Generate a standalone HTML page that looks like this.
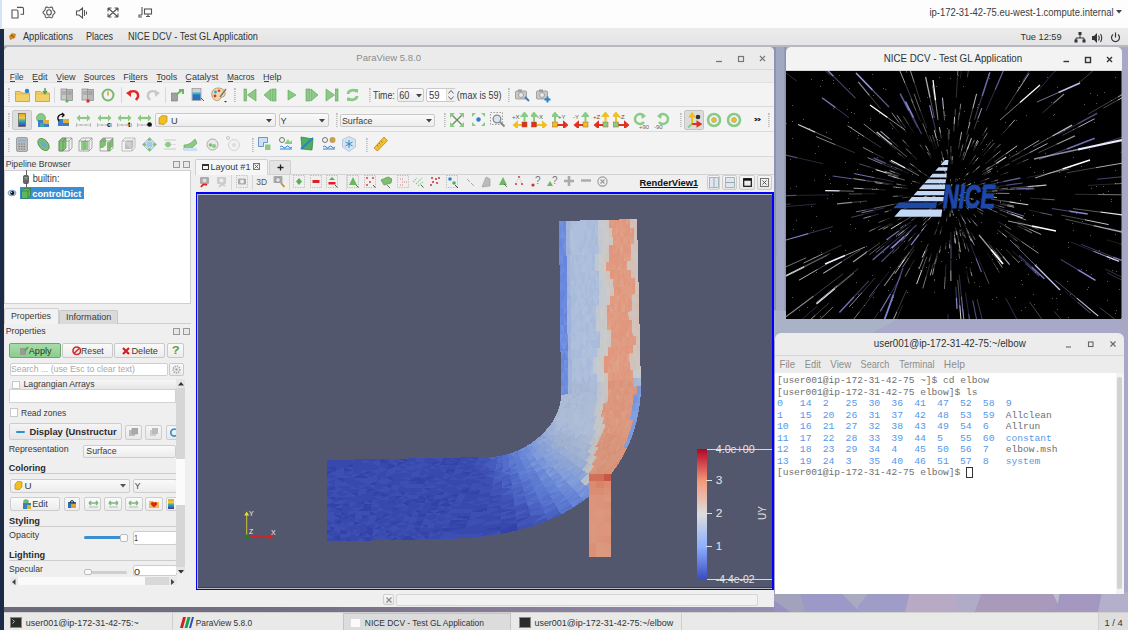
<!DOCTYPE html>
<html><head><meta charset="utf-8">
<style>
*{box-sizing:border-box;margin:0;padding:0}
html,body{width:1128px;height:630px;overflow:hidden;font-family:"Liberation Sans",sans-serif;}
body{position:relative;background:#a09cc0;}
.a{position:absolute;display:block}
.t{position:absolute;white-space:nowrap;line-height:1;transform-origin:0 0}
</style></head><body>
<svg class="a" style="left:0px;top:0px;" width="1128" height="630" viewBox="0 0 1128 630">
    <rect width="1128" height="630" fill="#a29ec2"/>
    <polygon points="774,40 800,40 790,200 774,260" fill="#a0a8c2"/><rect x="774" y="47" width="2" height="285" fill="#8c94ae"/><rect x="784.5" y="47" width="1.5" height="272" fill="#8c92ac"/>
    <polygon points="776,260 784.5,200 784.5,319 776,319" fill="#a4aac4"/>
    <polygon points="770,310 900,318 860,340 770,340" fill="#aab2c8"/>
    <polygon points="900,318 1128,315 1128,340 860,340" fill="#a8a8c8"/>
    <defs><linearGradient id="bstrip" x1="0" x2="1"><stop offset="0" stop-color="#6a6a78"/><stop offset="0.4" stop-color="#747084"/><stop offset="0.6" stop-color="#847a94"/><stop offset="1" stop-color="#948eb0"/></linearGradient></defs><rect x="0" y="590" width="775" height="22" fill="url(#bstrip)"/>
    <polygon points="774,592 800,592 812,612 774,612" fill="#a2a2bc"/>
    <polygon points="774,600 790,612 774,612" fill="#9890c0"/>
    <polygon points="800,592 840,592 860,612 805,612" fill="#9c98c8"/>
    <polygon points="840,592 870,592 858,606 860,612" fill="#aaaac0"/>
    <polygon points="870,592 910,592 905,612 858,612 858,606" fill="#a09cc8"/>
    <polygon points="910,592 955,592 955,612 905,612" fill="#b8aac4"/>
    <polygon points="955,592 982,592 975,612 955,612" fill="#b0acc8"/>
    <polygon points="982,592 1052,592 1058,604 1045,612 975,612" fill="#a99abc"/>
    <polygon points="1052,592 1060,592 1058,604" fill="#bcbccc"/>
    <polygon points="1060,592 1102,592 1098,612 1045,612 1058,604" fill="#a498c0"/>
    <polygon points="1102,592 1128,592 1128,612 1098,612" fill="#b4b0cc"/>
    <polygon points="1120,40 1128,40 1128,592 1120,592" fill="#a8a8c6"/>
    </svg>
<div class="a" style="left:0px;top:0px;width:1128px;height:28.2px;background:#fdfdfd;"></div>
<div class="a" style="left:0px;top:0px;width:2px;height:28.2px;background:#d4e3f6;"></div>
<svg class="a" style="left:10px;top:5px;" width="16" height="15" viewBox="0 0 16 15"><path d="M2,5 h4.5 q1.5,0 1.5,1.5 v6.5 h-6 z" fill="none" stroke="#555" stroke-width="1.1"/><path d="M7,2.4 h5 q1.5,0 1.5,1.5 v5.4 h-3" fill="none" stroke="#555" stroke-width="1.1"/></svg>
<svg class="a" style="left:42px;top:5px;" width="14" height="15" viewBox="0 0 14 15"><polygon points="12.95,7.40 12.84,7.91 12.54,8.38 12.12,8.77 11.67,9.10 11.29,9.40 11.03,9.72 10.88,10.12 10.81,10.60 10.75,11.15 10.62,11.71 10.36,12.20 9.98,12.55 9.48,12.71 8.92,12.69 8.37,12.52 7.86,12.30 7.41,12.12 7.00,12.05 6.59,12.12 6.14,12.30 5.63,12.52 5.08,12.69 4.52,12.71 4.03,12.55 3.64,12.20 3.38,11.71 3.25,11.15 3.19,10.60 3.12,10.12 2.97,9.72 2.71,9.40 2.33,9.10 1.88,8.77 1.46,8.38 1.16,7.91 1.05,7.40 1.16,6.89 1.46,6.42 1.88,6.03 2.33,5.70 2.71,5.40 2.97,5.08 3.12,4.68 3.19,4.20 3.25,3.65 3.38,3.09 3.64,2.60 4.02,2.25 4.52,2.09 5.08,2.11 5.63,2.28 6.14,2.50 6.59,2.68 7.00,2.75 7.41,2.68 7.86,2.50 8.37,2.28 8.92,2.11 9.48,2.09 9.98,2.25 10.36,2.60 10.62,3.09 10.75,3.65 10.81,4.20 10.88,4.68 11.03,5.07 11.29,5.40 11.67,5.70 12.12,6.03 12.54,6.42 12.84,6.89" fill="none" stroke="#555" stroke-width="1.1"/><ellipse cx="7" cy="7.4" rx="2.3" ry="2.6" fill="none" stroke="#555" stroke-width="1.1"/></svg>
<svg class="a" style="left:75px;top:7px;" width="13" height="12" viewBox="0 0 13 12"><path d="M1.5,4 h2.5 l3.5,-3 v10 l-3.5,-3 h-2.5 z" fill="none" stroke="#555" stroke-width="1.1"/><path d="M9.5,3 v6 M11.5,4.5 v3" fill="none" stroke="#555" stroke-width="1.1"/></svg>
<svg class="a" style="left:106px;top:6px;" width="14" height="13" viewBox="0 0 14 13"><path d="M2,2 L12,11 M12,2 L2,11 M2,2 h3.5 M2,2 v3.5 M12,2 h-3.5 M12,2 v3.5 M2,11 h3.5 M2,11 v-3.5 M12,11 h-3.5 M12,11 v-3.5" fill="none" stroke="#555" stroke-width="1.1"/></svg>
<svg class="a" style="left:138px;top:6px;" width="15" height="12" viewBox="0 0 15 12"><path d="M4,1 v8 M4,9 h-3 v2 h3" fill="none" stroke="#555" stroke-width="1.1"/><rect x="6.5" y="3" width="7" height="5" fill="none" stroke="#555" stroke-width="1.1"/><path d="M10,8 v2.5 M8,10.5 h4" fill="none" stroke="#555" stroke-width="1.1"/></svg>
<svg class="a" style="left:1116px;top:10px;" width="6" height="4" viewBox="0 0 6 4"><path d="M0,0 h6 l-3,3.5 z" fill="#444"/></svg>
<div class="a" style="left:0px;top:28.2px;width:1128px;height:17.2px;background:linear-gradient(#ececec,#e4e4e4);"></div>
<div class="a" style="left:0px;top:45.4px;width:1128px;height:1.2px;background:#b8b8c0;"></div>
<div class="a" style="left:0px;top:29px;width:4px;height:601px;background:#1b2a45;"></div>
<svg class="a" style="left:8px;top:32px;" width="9" height="9" viewBox="0 0 9 9"><path d="M2,8 L1,4 L4,1 L8,2 L7,6 z" fill="#d2872a"/><path d="M3,3 L6,5" stroke="#8a4a10" stroke-width="1"/></svg>
<svg class="a" style="left:1074px;top:32px;" width="12" height="11" viewBox="0 0 12 11"><rect x="4.5" y="0" width="3" height="3" fill="#333"/><path d="M6,3 v3 M2,6 h8 M2,6 v2 M10,6 v2" stroke="#333" stroke-width="1"/><rect x="0.5" y="7.5" width="3" height="3" fill="#333"/><rect x="8.5" y="7.5" width="3" height="3" fill="#333"/></svg>
<svg class="a" style="left:1092px;top:33px;" width="11" height="10" viewBox="0 0 11 10"><path d="M0,3 h2 l3,-3 v10 l-3,-3 h-2 z" fill="#333"/><path d="M6.5,2.5 q1.5,2.5 0,5 M8.5,1 q2.5,4 0,8" fill="none" stroke="#333" stroke-width="1.1"/></svg>
<svg class="a" style="left:1110px;top:32px;" width="11" height="11" viewBox="0 0 11 11"><path d="M3,2.5 A4,4 0 1 0 8,2.5" fill="none" stroke="#333" stroke-width="1.2"/><path d="M5.5,0.5 v5" stroke="#333" stroke-width="1.2"/></svg>
<div class="a" style="left:4px;top:46.6px;width:770px;height:560.4px;background:#efefef;border-radius:5px 5px 0 0"></div>
<div class="a" style="left:4px;top:46.6px;width:770px;height:22.4px;background:#ebebeb;border-radius:5px 5px 0 0"></div>
<div class="a" style="left:4px;top:69px;width:770px;height:1px;background:#d9d9d9;"></div>
<svg class="a" style="left:715px;top:54px;" width="56" height="10" viewBox="0 0 56 10"><path d="M1,7.5 h6" stroke="#777" stroke-width="1.3"/><rect x="23.5" y="2.5" width="5" height="5" fill="none" stroke="#777" stroke-width="1.2"/><path d="M45,2 l5,5 M50,2 l-5,5" stroke="#777" stroke-width="1.2"/></svg>
<div class="a" style="left:4px;top:70px;width:770px;height:12px;background:#ececec;"></div>
<div class="a" style="left:4px;top:82px;width:770px;height:75px;background:#f3f3f3;"></div>
<div class="a" style="left:4px;top:82px;width:770px;height:1px;background:#e2e2e2;"></div>
<div class="a" style="left:10.3px;top:81px;width:5px;height:1px;background:#444"></div>
<div class="a" style="left:32.6px;top:81px;width:5px;height:1px;background:#444"></div>
<div class="a" style="left:56.6px;top:81px;width:5px;height:1px;background:#444"></div>
<div class="a" style="left:84.3px;top:81px;width:5px;height:1px;background:#444"></div>
<div class="a" style="left:130.1px;top:81px;width:5px;height:1px;background:#444"></div>
<div class="a" style="left:156.8px;top:81px;width:5px;height:1px;background:#444"></div>
<div class="a" style="left:185.9px;top:81px;width:5px;height:1px;background:#444"></div>
<div class="a" style="left:227.5px;top:81px;width:5px;height:1px;background:#444"></div>
<div class="a" style="left:263.5px;top:81px;width:5px;height:1px;background:#444"></div>
<div class="a" style="left:4px;top:106px;width:770px;height:1px;background:#dadada;"></div>
<div class="a" style="left:4px;top:131px;width:770px;height:1px;background:#dadada;"></div>
<div class="a" style="left:4px;top:156px;width:770px;height:1px;background:#dadada;"></div>
<div class="a" style="left:8px;top:88px;width:2px;height:14px;border-left:1px dotted #bbb;border-right:1px dotted #ccc"></div>
<div class="a" style="left:233.5px;top:88px;width:2px;height:14px;border-left:1px dotted #bbb;border-right:1px dotted #ccc"></div>
<div class="a" style="left:369px;top:88px;width:2px;height:14px;border-left:1px dotted #bbb;border-right:1px dotted #ccc"></div>
<div class="a" style="left:507.5px;top:88px;width:2px;height:14px;border-left:1px dotted #bbb;border-right:1px dotted #ccc"></div>
<svg class="a" style="left:15px;top:88px;" width="15" height="14" viewBox="0 0 15 14"><path d="M0.5,3.5 h5 l1.5,1.5 h7.5 v8.5 h-14 z" fill="#f2d068" stroke="#c89a30" stroke-width="0.8"/><path d="M0.5,6 h14" stroke="#d8b048" stroke-width="0.6"/><circle cx="12" cy="3" r="2.2" fill="#2a7fd0"/></svg>
<svg class="a" style="left:35px;top:88px;" width="15" height="14" viewBox="0 0 15 14"><path d="M0.5,3.5 h5 l1.5,1.5 h7.5 v8.5 h-14 z" fill="#f2d068" stroke="#c89a30" stroke-width="0.8"/><path d="M0.5,6 h14" stroke="#d8b048" stroke-width="0.6"/><path d="M10,0 v5 M8,3 l2,2.5 l2,-2.5" stroke="#5aa050" stroke-width="1.5" fill="none"/></svg>
<div class="a" style="left:54px;top:87px;width:1px;height:16px;background:#d8d8d8;"></div>
<svg class="a" style="left:60.3px;top:88px;" width="14" height="15" viewBox="0 0 14 15"><rect x="1" y="1" width="6" height="11" fill="#c8c8c8" stroke="#888" stroke-width="0.7"/><rect x="6.5" y="1.5" width="6" height="11" fill="#b8b8b8" stroke="#888" stroke-width="0.7"/><path d="M2,4 h4 M2,6 h4 M7.5,4 h4 M7.5,6 h4" stroke="#777" stroke-width="0.6"/><circle cx="7" cy="13" r="1.6" fill="#5bb85b"/></svg>
<svg class="a" style="left:80.7px;top:88px;" width="14" height="15" viewBox="0 0 14 15"><rect x="1" y="1" width="6" height="11" fill="#c8c8c8" stroke="#888" stroke-width="0.7"/><rect x="6.5" y="1.5" width="6" height="11" fill="#b8b8b8" stroke="#888" stroke-width="0.7"/><path d="M2,4 h4 M2,6 h4 M7.5,4 h4 M7.5,6 h4" stroke="#777" stroke-width="0.6"/><rect x="5.5" y="11.5" width="3" height="3" fill="#d83030"/></svg>
<svg class="a" style="left:101px;top:88px;" width="14" height="14" viewBox="0 0 14 14"><circle cx="7" cy="7" r="5.5" fill="none" stroke="#7ab870" stroke-width="2"/><path d="M7,3.5 v4" stroke="#d8a030" stroke-width="1.5"/></svg>
<div class="a" style="left:120.6px;top:87px;width:1px;height:16px;background:#d8d8d8;"></div>
<svg class="a" style="left:125.5px;top:89px;" width="14" height="12" viewBox="0 0 14 12"><path d="M3,5 C6,0 13,2 12,8 L10,11" fill="none" stroke="#e02828" stroke-width="2.4"/><path d="M0,4 L5,1 L5,8 z" fill="#e02828"/></svg>
<svg class="a" style="left:145.7px;top:89px;" width="14" height="12" viewBox="0 0 14 12"><path d="M11,5 C8,0 1,2 2,8 L4,11" fill="none" stroke="#c8c8c8" stroke-width="2.4"/><path d="M14,4 L9,1 L9,8 z" fill="#c8c8c8"/></svg>
<div class="a" style="left:165px;top:87px;width:1px;height:16px;background:#d8d8d8;"></div>
<svg class="a" style="left:171px;top:89px;" width="13" height="13" viewBox="0 0 13 13"><rect x="0.5" y="4" width="6" height="8" fill="#a0a0a0" stroke="#777" stroke-width="0.6"/><path d="M5,6 L11,1 M8,1 h4 v4" stroke="#6cb860" stroke-width="2.2" fill="none"/></svg>
<svg class="a" style="left:191px;top:88px;" width="14" height="15" viewBox="0 0 14 15"><rect x="1" y="0.5" width="9" height="12" fill="#d0d0d0" stroke="#888" stroke-width="0.6"/><rect x="1.5" y="6" width="8" height="6" fill="#2a70c0"/><rect x="1.5" y="4.5" width="8" height="2" fill="#30b0d0"/><path d="M10,10 l3,3" stroke="#555" stroke-width="1"/></svg>
<svg class="a" style="left:210.6px;top:87px;" width="16" height="16" viewBox="0 0 16 16"><path d="M7,1 C12,1 15,4 14,8 C13,11 10,9 9,12 C8,15 2,14 1,9 C0,4 3,1 7,1 z" fill="#f0d8a8" stroke="#a08050" stroke-width="0.7"/><circle cx="4.5" cy="5" r="1.4" fill="#30a0e0"/><circle cx="8" cy="3.8" r="1.3" fill="#e04040"/><circle cx="4" cy="9" r="1.4" fill="#e03030"/><path d="M15,2 L9,10" stroke="#777" stroke-width="1.4"/><path d="M13,14 h3 l-1.5,1.5 z" fill="#333"/></svg>
<svg class="a" style="left:243px;top:88px;" width="14" height="14" viewBox="0 0 14 14"><rect x="1" y="1" width="2.5" height="12" fill="#8acb84" stroke="#5ea058" stroke-width="0.6"/><path d="M13,1 L4.5,7 L13,13 z" fill="#8acb84" stroke="#5ea058" stroke-width="0.6"/></svg>
<svg class="a" style="left:263px;top:88px;" width="14" height="14" viewBox="0 0 14 14"><path d="M8,1 L1,7 L8,13 z" fill="#8acb84" stroke="#5ea058" stroke-width="0.6"/><rect x="9" y="1" width="4" height="12" fill="#8acb84" stroke="#5ea058" stroke-width="0.6"/></svg>
<svg class="a" style="left:287px;top:88px;" width="10" height="14" viewBox="0 0 10 14"><path d="M1,2 L9,7 L1,12 z" fill="#8acb84" stroke="#5ea058" stroke-width="0.6"/></svg>
<svg class="a" style="left:304.7px;top:88px;" width="14" height="14" viewBox="0 0 14 14"><rect x="1" y="1" width="4" height="12" fill="#8acb84" stroke="#5ea058" stroke-width="0.6"/><path d="M6,1 L13,7 L6,13 z" fill="#8acb84" stroke="#5ea058" stroke-width="0.6"/></svg>
<svg class="a" style="left:325px;top:88px;" width="14" height="14" viewBox="0 0 14 14"><path d="M1,1 L9.5,7 L1,13 z" fill="#8acb84" stroke="#5ea058" stroke-width="0.6"/><rect x="10.5" y="1" width="2.5" height="12" fill="#8acb84" stroke="#5ea058" stroke-width="0.6"/></svg>
<svg class="a" style="left:346px;top:88px;" width="13" height="14" viewBox="0 0 13 14"><path d="M2,6 C2,2 9,1 11,4 M11,8 C11,12 4,13 2,10" stroke="#8acb84" stroke-width="2.8" fill="none"/><path d="M8,1 l4,0 l0,4 z M5,13 l-4,0 l0,-4 z" fill="#8acb84"/></svg>
<div class="a" style="left:396.6px;top:88.4px;width:27.8px;height:13.9px;background:linear-gradient(#fafafa,#ececec);border:1px solid #c9c9c9;border-radius:2px"></div>
<svg class="a" style="left:415.5px;top:94px;" width="6" height="4" viewBox="0 0 6 4"><path d="M0,0 h6 l-3,3.5 z" fill="#444"/></svg>
<div class="a" style="left:426.4px;top:88.4px;width:29.3px;height:13.9px;background:#fff;border:1px solid #c9c9c9;border-radius:2px"></div>
<div class="a" style="left:446px;top:89.4px;width:9.5px;height:12px;background:#f0f0f0;border-left:1px solid #ddd"></div>
<svg class="a" style="left:448px;top:90px;" width="6" height="10" viewBox="0 0 6 10"><path d="M0.5,3.5 l2.5,-3 l2.5,3 M0.5,6.5 l2.5,3 l2.5,-3" stroke="#555" stroke-width="0.9" fill="none"/></svg>
<svg class="a" style="left:515px;top:88px;" width="15" height="15" viewBox="0 0 15 15"><rect x="0.5" y="3" width="11" height="8" rx="1" fill="#c8c8c8" stroke="#888" stroke-width="0.7"/><circle cx="6" cy="7" r="2.5" fill="#e8e8e8" stroke="#888" stroke-width="0.7"/><rect x="3" y="1.5" width="4" height="2" fill="#999"/><path d="M10,9 l4,4" stroke="#2a80d0" stroke-width="2"/></svg>
<svg class="a" style="left:535.7px;top:88px;" width="15" height="15" viewBox="0 0 15 15"><rect x="0.5" y="3" width="11" height="8" rx="1" fill="#c8c8c8" stroke="#888" stroke-width="0.7"/><circle cx="6" cy="7" r="2.5" fill="#e8e8e8" stroke="#888" stroke-width="0.7"/><rect x="3" y="1.5" width="4" height="2" fill="#999"/><path d="M8.5,11.5 h6 M11.5,8.5 v6" stroke="#2a80d0" stroke-width="2"/></svg>
<div class="a" style="left:8px;top:113px;width:2px;height:14px;border-left:1px dotted #bbb;border-right:1px dotted #ccc"></div>
<div class="a" style="left:335.5px;top:113px;width:2px;height:14px;border-left:1px dotted #bbb;border-right:1px dotted #ccc"></div>
<div class="a" style="left:443.6px;top:113px;width:2px;height:14px;border-left:1px dotted #bbb;border-right:1px dotted #ccc"></div>
<div class="a" style="left:679.9px;top:113px;width:2px;height:14px;border-left:1px dotted #bbb;border-right:1px dotted #ccc"></div>
<div class="a" style="left:768px;top:113px;width:2px;height:14px;border-left:1px dotted #bbb;border-right:1px dotted #ccc"></div>
<div class="a" style="left:12px;top:110px;width:20.3px;height:20px;background:#dedede;border:1px solid #c8c8c8;border-radius:2px"></div>
<svg class="a" style="left:18px;top:113px;" width="8" height="14" viewBox="0 0 8 14"><defs><linearGradient id="cmap" x1="0" y1="0" x2="0" y2="1"><stop offset="0" stop-color="#f0a020"/><stop offset="0.35" stop-color="#e8d040"/><stop offset="0.55" stop-color="#40b0a0"/><stop offset="0.8" stop-color="#3070c0"/><stop offset="1" stop-color="#503090"/></linearGradient></defs><rect x="0.5" y="0.5" width="7" height="13" fill="url(#cmap)" stroke="#555" stroke-width="0.6"/></svg>
<svg class="a" style="left:35.5px;top:113px;" width="14" height="14" viewBox="0 0 14 14"><circle cx="5" cy="5" r="4.5" fill="#8acb84" stroke="#5ea058" stroke-width="0.6"/><rect x="2" y="7" width="11" height="7" fill="#3a80c8"/><rect x="7" y="7" width="6" height="4" fill="#e0b030"/><rect x="4" y="10" width="4" height="4" fill="#40a8a0"/></svg>
<svg class="a" style="left:56.4px;top:112px;" width="14" height="15" viewBox="0 0 14 15"><rect x="2" y="7" width="11" height="7" fill="#3a80c8"/><rect x="7" y="7" width="6" height="4" fill="#e0b030"/><path d="M3,9 C0,5 4,1 8,3 M6,1 l2,2 l-2,2" stroke="#111" stroke-width="1.4" fill="none"/></svg>
<svg class="a" style="left:75.9px;top:113px;" width="15" height="15" viewBox="0 0 15 15"><path d="M2,5 h11" stroke="#8acb84" stroke-width="2.2"/><path d="M0.5,5 L4,1.5 L4,8.5 z M14.5,5 L11,1.5 L11,8.5 z" fill="#8acb84"/><path d="M0.5,12 h14 M0.5,10 v4 M5,11 v2 M10,11 v2 M14.5,10 v4" stroke="#999" stroke-width="0.6"/></svg>
<svg class="a" style="left:96.6px;top:113px;" width="15" height="15" viewBox="0 0 15 15"><path d="M2,5 h11" stroke="#8acb84" stroke-width="2.2"/><path d="M0.5,5 L4,1.5 L4,8.5 z M14.5,5 L11,1.5 L11,8.5 z" fill="#8acb84"/><path d="M0.5,12 h14 M0.5,10 v4 M5,11 v2 M10,11 v2 M14.5,10 v4" stroke="#999" stroke-width="0.6"/><text x="10" y="14" font-size="7" font-weight="bold" font-family="Liberation Sans" fill="#111">c</text></svg>
<svg class="a" style="left:117px;top:113px;" width="15" height="15" viewBox="0 0 15 15"><path d="M2,5 h11" stroke="#8acb84" stroke-width="2.2"/><path d="M0.5,5 L4,1.5 L4,8.5 z M14.5,5 L11,1.5 L11,8.5 z" fill="#8acb84"/><path d="M0.5,12 h14 M0.5,10 v4 M5,11 v2 M10,11 v2 M14.5,10 v4" stroke="#999" stroke-width="0.6"/><text x="11" y="14" font-size="7" font-weight="bold" font-family="Liberation Sans" fill="#111">t</text></svg>
<svg class="a" style="left:137.4px;top:113px;" width="15" height="15" viewBox="0 0 15 15"><path d="M2,5 h11" stroke="#8acb84" stroke-width="2.2"/><path d="M0.5,5 L4,1.5 L4,8.5 z M14.5,5 L11,1.5 L11,8.5 z" fill="#8acb84"/><path d="M0.5,12 h14 M0.5,10 v4 M5,11 v2 M10,11 v2 M14.5,10 v4" stroke="#999" stroke-width="0.6"/><circle cx="12.5" cy="11.5" r="2.3" fill="#111"/></svg>
<div class="a" style="left:155px;top:113px;width:120.5px;height:14.2px;background:linear-gradient(#fafafa,#ececec);border:1px solid #c9c9c9;border-radius:2px"></div>
<svg class="a" style="left:158px;top:114.5px;" width="10" height="10" viewBox="0 0 10 10"><path d="M1,3 L4,0.5 L9,1 L9,6.5 L6,9.5 L1,9 z" fill="#f0c020" stroke="#b08010" stroke-width="0.6"/></svg>
<svg class="a" style="left:265.5px;top:118.5px;" width="6" height="4" viewBox="0 0 6 4"><path d="M0,0 h6 l-3,3.5 z" fill="#444"/></svg>
<div class="a" style="left:278.5px;top:113px;width:50.2px;height:14.2px;background:linear-gradient(#fafafa,#ececec);border:1px solid #c9c9c9;border-radius:2px"></div>
<svg class="a" style="left:318.7px;top:118.5px;" width="6" height="4" viewBox="0 0 6 4"><path d="M0,0 h6 l-3,3.5 z" fill="#444"/></svg>
<div class="a" style="left:339.8px;top:113.5px;width:95.4px;height:13.5px;background:linear-gradient(#fafafa,#ececec);border:1px solid #c9c9c9;border-radius:2px"></div>
<svg class="a" style="left:425.7px;top:118.5px;" width="6" height="4" viewBox="0 0 6 4"><path d="M0,0 h6 l-3,3.5 z" fill="#444"/></svg>
<svg class="a" style="left:449px;top:112px;" width="16" height="16" viewBox="0 0 16 16"><path d="M2,2 L14,14 M14,2 L2,14" stroke="#6a8a60" stroke-width="1.3"/><path d="M1,1 h5 l-5,5 z M15,1 h-5 l5,5 z M1,15 h5 l-5,-5 z M15,15 h-5 l5,-5 z" fill="#8acb84"/></svg>
<svg class="a" style="left:470.6px;top:112px;" width="15" height="15" viewBox="0 0 15 15"><path d="M1,1 h4 l-4,4 z M14,1 h-4 l4,4 z M1,14 h4 l-4,-4 z M14,14 h-4 l4,-4 z" fill="#8acb84"/><circle cx="7.5" cy="7.5" r="2.2" fill="#2a80d0"/></svg>
<svg class="a" style="left:490px;top:112px;" width="16" height="16" viewBox="0 0 16 16"><rect x="0.5" y="0.5" width="12" height="12" fill="none" stroke="#777" stroke-width="0.7" stroke-dasharray="1.5 1.5"/><circle cx="7" cy="7" r="3.8" fill="#d8e4f0" stroke="#888" stroke-width="1.3"/><path d="M10,10 l4.5,4.5" stroke="#888" stroke-width="2"/></svg>
<svg class="a" style="left:511.5px;top:112px;" width="16" height="16" viewBox="0 0 16 16"><path d="M14,13 H2 M2,13 l3,-2.5 v5 z" stroke="#f0c020" stroke-width="2" fill="#f0c020"/><rect x="10" y="10" width="5" height="5" fill="#e03020" stroke="#a06020" stroke-width="0.5"/><path d="M12.5,10 V2 M12.5,1 l-2.5,3 h5 z" stroke="#8acb84" stroke-width="2" fill="#8acb84"/><text x="0" y="7" font-size="6" font-family="Liberation Sans" fill="#555">+X</text></svg>
<svg class="a" style="left:531px;top:112px;" width="16" height="16" viewBox="0 0 16 16"><path d="M2,13 H14 M15,13 l-3,-2.5 v5 z" stroke="#f0c020" stroke-width="2" fill="#f0c020"/><rect x="0.5" y="10" width="5" height="5" fill="#e03020" stroke="#a06020" stroke-width="0.5"/><path d="M3,10 V2 M3,1 l-2.5,3 h5 z" stroke="#8acb84" stroke-width="2" fill="#8acb84"/><text x="6" y="7" font-size="6" font-family="Liberation Sans" fill="#555">-X</text></svg>
<svg class="a" style="left:551.6px;top:112px;" width="16" height="16" viewBox="0 0 16 16"><path d="M2,13 H14 M15,13 l-3,-2.5 v5 z" stroke="#e03020" stroke-width="2" fill="#e03020"/><rect x="0.5" y="10" width="5" height="5" fill="#f0c020" stroke="#a06020" stroke-width="0.5"/><path d="M3,10 V2 M3,1 l-2.5,3 h5 z" stroke="#8acb84" stroke-width="2" fill="#8acb84"/><text x="6" y="7" font-size="6" font-family="Liberation Sans" fill="#555">+Y</text></svg>
<svg class="a" style="left:572.8px;top:112px;" width="16" height="16" viewBox="0 0 16 16"><path d="M14,13 H2 M2,13 l3,-2.5 v5 z" stroke="#e03020" stroke-width="2" fill="#e03020"/><rect x="10" y="10" width="5" height="5" fill="#f0c020" stroke="#a06020" stroke-width="0.5"/><path d="M12.5,10 V2 M12.5,1 l-2.5,3 h5 z" stroke="#8acb84" stroke-width="2" fill="#8acb84"/><text x="0" y="7" font-size="6" font-family="Liberation Sans" fill="#555">-Y</text></svg>
<svg class="a" style="left:593.3px;top:112px;" width="16" height="16" viewBox="0 0 16 16"><path d="M14,13 H2 M2,13 l3,-2.5 v5 z" stroke="#e03020" stroke-width="2" fill="#e03020"/><rect x="10" y="10" width="5" height="5" fill="#8acb84" stroke="#a06020" stroke-width="0.5"/><path d="M12.5,10 V2 M12.5,1 l-2.5,3 h5 z" stroke="#f0c020" stroke-width="2" fill="#f0c020"/><text x="0" y="7" font-size="6" font-family="Liberation Sans" fill="#555">+Z</text></svg>
<svg class="a" style="left:612.8px;top:112px;" width="16" height="16" viewBox="0 0 16 16"><path d="M2,13 H14 M15,13 l-3,-2.5 v5 z" stroke="#e03020" stroke-width="2" fill="#e03020"/><rect x="0.5" y="10" width="5" height="5" fill="#8acb84" stroke="#a06020" stroke-width="0.5"/><path d="M3,10 V2 M3,1 l-2.5,3 h5 z" stroke="#f0c020" stroke-width="2" fill="#f0c020"/><text x="6" y="7" font-size="6" font-family="Liberation Sans" fill="#555">-Z</text></svg>
<svg class="a" style="left:633.3px;top:112px;" width="16" height="17" viewBox="0 0 16 17"><path d="M11,4 A5,5 0 1 0 11,10" fill="none" stroke="#8acb84" stroke-width="2.4"/><path d="M8,1 l5,3 l-4,3 z" fill="#8acb84"/><text x="6" y="16.5" font-size="6" font-family="Liberation Sans" fill="#666">+90</text></svg>
<svg class="a" style="left:653.8px;top:112px;" width="16" height="17" viewBox="0 0 16 17"><path d="M5,4 A5,5 0 1 1 5,10" fill="none" stroke="#8acb84" stroke-width="2.4"/><path d="M8,1 l-5,3 l4,3 z" fill="#8acb84"/><text x="0" y="16.5" font-size="6" font-family="Liberation Sans" fill="#666">-90</text></svg>
<div class="a" style="left:683.6px;top:110.2px;width:20.1px;height:19.6px;background:#dcdcdc;border:1px solid #c4c4c4;border-radius:2px"></div>
<svg class="a" style="left:686px;top:112px;" width="16" height="16" viewBox="0 0 16 16"><path d="M6,12 V3 M6,1.5 l-2,3 h4 z" stroke="#f0c020" stroke-width="2" fill="#f0c020"/><path d="M6,12 H13 M14.5,12 l-3,-2 v4 z" stroke="#e03020" stroke-width="2" fill="#e03020"/><path d="M6,12 L2,15.5" stroke="#8acb84" stroke-width="2"/><circle cx="12" cy="5" r="2.3" fill="#333"/></svg>
<svg class="a" style="left:706px;top:112px;" width="16" height="16" viewBox="0 0 16 16"><circle cx="8" cy="8" r="6" fill="none" stroke="#8acb84" stroke-width="2.6"/><circle cx="8" cy="8" r="2.5" fill="#f0c020" stroke="#999" stroke-width="0.6"/></svg>
<svg class="a" style="left:726px;top:112px;" width="16" height="16" viewBox="0 0 16 16"><circle cx="8" cy="8" r="6" fill="none" stroke="#8acb84" stroke-width="2.6"/><circle cx="8" cy="8" r="2.5" fill="#f0c020" stroke="#999" stroke-width="0.6"/></svg>
<div class="a" style="left:8px;top:138px;width:2px;height:14px;border-left:1px dotted #bbb;border-right:1px dotted #ccc"></div>
<div class="a" style="left:251.5px;top:138px;width:2px;height:14px;border-left:1px dotted #bbb;border-right:1px dotted #ccc"></div>
<div class="a" style="left:366.4px;top:138px;width:2px;height:14px;border-left:1px dotted #bbb;border-right:1px dotted #ccc"></div>
<svg class="a" style="left:16.3px;top:137px;" width="12" height="15" viewBox="0 0 12 15"><rect x="0.5" y="0.5" width="11" height="14" rx="1.5" fill="#bbb" stroke="#888" stroke-width="0.7"/><rect x="2" y="2" width="8" height="3" fill="#8ab8e0"/><path d="M2.5,7 h7 M2.5,9.5 h7 M2.5,12 h7" stroke="#777" stroke-width="1.2" stroke-dasharray="1.5 1"/></svg>
<svg class="a" style="left:36.3px;top:137px;" width="15" height="15" viewBox="0 0 15 15"><ellipse cx="7.5" cy="7.5" rx="4.5" ry="7" transform="rotate(-40 7.5 7.5)" fill="#7cc070" stroke="#4a8a40" stroke-width="0.8"/><ellipse cx="7.5" cy="7.5" rx="2.2" ry="4" transform="rotate(-40 7.5 7.5)" fill="#6aa8d8"/></svg>
<svg class="a" style="left:57.6px;top:137px;" width="15" height="15" viewBox="0 0 15 15"><path d="M1,4 L4,1 H8 V11 L5,14 H1 Z" fill="#7cc36e" stroke="#4a8a40" stroke-width="0.6"/><path d="M5,4 V14 M5,4 L8,1" stroke="#4a8a40" stroke-width="0.6"/><path d="M1,4 L4,1 H14 V11 L11,14 H1 Z M1,4 H11 V14 M11,4 L14,1" fill="none" stroke="#888" stroke-width="0.7"/></svg>
<svg class="a" style="left:78px;top:137px;" width="15" height="15" viewBox="0 0 15 15"><path d="M5,5 L8,2 V11 L5,14 Z" fill="#8fd080"/><path d="M3,4 H10 V13 H3 z" fill="#7cc36e" opacity="0.85"/><path d="M1,4 L4,1 H14 V11 L11,14 H1 Z M1,4 H11 V14 M11,4 L14,1" fill="none" stroke="#888" stroke-width="0.7"/></svg>
<svg class="a" style="left:99.3px;top:137px;" width="15" height="15" viewBox="0 0 15 15"><path d="M1,4 L4,1 H7 V8 L4,11 H1 Z" fill="#7cc36e"/><path d="M8,5 H11 V14 H8 z M11,4 L14,1 V9 L11,12 z" fill="#7cc36e"/><path d="M1,4 L4,1 H14 V11 L11,14 H1 Z M1,4 H11 V14 M11,4 L14,1" fill="none" stroke="#888" stroke-width="0.7"/></svg>
<svg class="a" style="left:120.6px;top:137px;" width="15" height="15" viewBox="0 0 15 15"><path d="M4,6 H10 V12 H4 z" fill="#bdbdbd"/><path d="M4,6 L6,4 H12 V10 L10,12" fill="#d0d0d0" stroke="#aaa" stroke-width="0.5"/><path d="M1,4 L4,1 H14 V11 L11,14 H1 Z M1,4 H11 V14 M11,4 L14,1" fill="none" stroke="#aaa" stroke-width="0.7"/></svg>
<svg class="a" style="left:141.8px;top:137px;" width="15" height="15" viewBox="0 0 15 15"><path d="M7.5,0.5 L14.5,7.5 L7.5,14.5 L0.5,7.5 z" fill="#c8dcf0" stroke="#9ab" stroke-width="0.6"/><circle cx="7.5" cy="2.5" r="1.6" fill="#7cc36e"/><circle cx="7.5" cy="12.5" r="1.6" fill="#7cc36e"/><circle cx="2.5" cy="7.5" r="1.6" fill="#7cc36e"/><circle cx="12.5" cy="7.5" r="1.6" fill="#7cc36e"/><rect x="5" y="5" width="5" height="5" fill="#a8c8e8"/></svg>
<svg class="a" style="left:164px;top:137px;" width="13" height="15" viewBox="0 0 13 15"><path d="M0,3 h12 M0,12 h12" stroke="#ccc" stroke-width="1.2"/><path d="M0,7.5 h12" stroke="#ddd" stroke-width="1"/><circle cx="4" cy="7.5" r="2.8" fill="#8acb84"/></svg>
<svg class="a" style="left:183.4px;top:138px;" width="15" height="13" viewBox="0 0 15 13"><path d="M1,12 L1,7 C6,7 9,4 12,1 L14,5 C11,9 7,12 1,12 z" fill="#8acb84" stroke="#5ea058" stroke-width="0.6"/><rect x="1" y="10" width="13" height="3" fill="#cde0f0"/></svg>
<svg class="a" style="left:205.7px;top:138px;" width="13" height="13" viewBox="0 0 13 13"><circle cx="6.5" cy="6.5" r="5.5" fill="#eaeaea" stroke="#999" stroke-width="0.8"/><circle cx="4.5" cy="7" r="1.8" fill="#7cc070"/><circle cx="8" cy="8" r="2" fill="#8acb84"/></svg>
<svg class="a" style="left:226px;top:136px;" width="14" height="15" viewBox="0 0 14 15"><circle cx="8" cy="9" r="5.5" fill="#f2f2f2" stroke="#ccc" stroke-width="0.8"/><circle cx="2" cy="2" r="1.5" fill="none" stroke="#bbb" stroke-width="0.8"/><circle cx="8" cy="9" r="2" fill="#ddd"/></svg>
<svg class="a" style="left:258px;top:137px;" width="13" height="14" viewBox="0 0 13 14"><path d="M0.5,0.5 h9 v5 h-4 v4 h-5 z" fill="#cfe0f4" stroke="#5080c0" stroke-width="0.8"/><rect x="7" y="7.5" width="5.5" height="5.5" fill="#8acb84"/></svg>
<svg class="a" style="left:279px;top:137px;" width="14" height="14" viewBox="0 0 14 14"><circle cx="3" cy="3" r="2.5" fill="none" stroke="#555" stroke-width="0.8"/><path d="M6,6 l3,-4 l2,3 l2,-2 v4 h-7 z" fill="#8acb84"/><path d="M1,12 h12 M1,10 q2,-2 3,0 t3,0 t3,0 t3,0" stroke="#2a80d0" stroke-width="1" fill="none"/></svg>
<svg class="a" style="left:300.4px;top:136px;" width="14" height="15" viewBox="0 0 14 15"><path d="M1,1 L13,3 L12,14 L2,13 z" fill="#4ab060" stroke="#2a8040" stroke-width="0.7"/><path d="M1,13 L13,2" stroke="#2a7fd0" stroke-width="1.8"/></svg>
<svg class="a" style="left:321.7px;top:137px;" width="14" height="14" viewBox="0 0 14 14"><circle cx="3" cy="3" r="2.5" fill="none" stroke="#555" stroke-width="0.8"/><circle cx="10.5" cy="3" r="3" fill="#c8a050"/><path d="M1,12 h12 M1,10 q2,-2 3,0 t3,0 t3,0 t3,0" stroke="#2a80d0" stroke-width="1" fill="none"/></svg>
<svg class="a" style="left:342px;top:136px;" width="14" height="16" viewBox="0 0 14 16"><path d="M7,0.5 L13.5,3.5 V11 L7,15.5 L0.5,11 V3.5 z" fill="#d0e4f4" stroke="#aac" stroke-width="0.6"/><path d="M7,4 v8 M3.5,6 l7,4 M10.5,6 l-7,4" stroke="#3080c0" stroke-width="0.9"/></svg>
<svg class="a" style="left:372.8px;top:136px;" width="15" height="16" viewBox="0 0 15 16"><path d="M1,12 L11,1 L14.5,4.5 L4.5,15 z" fill="#f0c030" stroke="#b08010" stroke-width="0.7"/><path d="M4,9 l1.5,1.5 M6,7 l1.5,1.5 M8,5 l1.5,1.5" stroke="#906000" stroke-width="0.7"/></svg>
<div class="a" style="left:173.4px;top:161px;width:7px;height:6.5px;border:1px solid #999;background:#e8e8e8"></div>
<div class="a" style="left:182.6px;top:161px;width:7px;height:6.5px;border:1px solid #999;background:#e8e8e8"></div>
<div class="a" style="left:4px;top:170px;width:186.5px;height:134px;background:#fff;border:1px solid #cfcfcf"></div>
<div class="a" style="left:26px;top:170px;width:1px;height:5px;background:#666;"></div>
<div class="a" style="left:26px;top:183px;width:1px;height:5px;background:#666;"></div>
<svg class="a" style="left:23px;top:174.5px;" width="6" height="9" viewBox="0 0 6 9"><rect x="0.5" y="0.5" width="5" height="8" rx="1" fill="#666" stroke="#333" stroke-width="0.6"/><path d="M1.5,2.5 h3 M1.5,4 h3" stroke="#ccc" stroke-width="0.6"/></svg>
<div class="a" style="left:20px;top:187px;width:64px;height:12px;background:#3b8ed2;"></div>
<svg class="a" style="left:21px;top:187.5px;" width="10" height="11" viewBox="0 0 10 11"><path d="M0.5,3 L3,0.5 H9.5 V8 L7,10.5 H0.5 z" fill="#5cb85c" stroke="#2f6f2f" stroke-width="0.6"/><path d="M0.5,3 H7 V10.5 M7,3 L9.5,0.5" stroke="#2f6f2f" stroke-width="0.6" fill="none"/></svg>
<svg class="a" style="left:6.5px;top:189px;" width="10" height="8" viewBox="0 0 10 8"><ellipse cx="5" cy="4" rx="4" ry="2.8" fill="#cfe0f0" stroke="#2a6fb0" stroke-width="0.6"/><circle cx="5.3" cy="4" r="2.1" fill="#111"/><circle cx="4.6" cy="3.3" r="0.6" fill="#fff"/></svg>
<div class="a" style="left:4px;top:323px;width:187px;height:1px;background:#cdcdcd;"></div>
<div class="a" style="left:4px;top:308px;width:55px;height:16px;background:#f2f2f2;border:1px solid #d0d0d0;border-bottom:none;border-radius:2px 2px 0 0"></div>
<div class="a" style="left:59px;top:309.5px;width:59px;height:14px;background:#dadada;border:1px solid #c8c8c8;border-bottom:none;border-radius:2px 2px 0 0"></div>
<div class="a" style="left:173.4px;top:328px;width:7px;height:6.5px;border:1px solid #999;background:#e8e8e8"></div>
<div class="a" style="left:182.6px;top:328px;width:7px;height:6.5px;border:1px solid #999;background:#e8e8e8"></div>
<div class="a" style="left:9.2px;top:343.2px;width:51.4px;height:14.7px;background:linear-gradient(#a8dca8,#8ccc8e);border:1px solid #6aa870;border-radius:2px"></div>
<svg class="a" style="left:20px;top:346px;" width="9" height="9" viewBox="0 0 9 9"><rect x="0" y="2" width="6" height="7" fill="#999"/><path d="M5,5 l3,-4" stroke="#5a5" stroke-width="2"/></svg>
<div class="a" style="left:62px;top:343.2px;width:50.599999999999994px;height:14.7px;background:linear-gradient(#fafafa,#ececec);border:1px solid #c9c9c9;border-radius:2px"></div>
<div class="a" style="left:114.4px;top:343.2px;width:50.79999999999998px;height:14.7px;background:linear-gradient(#fafafa,#ececec);border:1px solid #c9c9c9;border-radius:2px"></div>
<div class="a" style="left:167px;top:343.2px;width:17.400000000000006px;height:14.7px;background:linear-gradient(#fafafa,#ececec);border:1px solid #c9c9c9;border-radius:2px"></div>
<svg class="a" style="left:71.5px;top:346px;" width="9.5" height="9.5" viewBox="0 0 9.5 9.5"><circle cx="4.75" cy="4.75" r="3.8" fill="none" stroke="#d42a2a" stroke-width="1.6"/><path d="M2.2,7.3 L7.3,2.2" stroke="#d42a2a" stroke-width="1.6"/></svg>
<svg class="a" style="left:122.3px;top:346.5px;" width="8" height="8" viewBox="0 0 8 8"><path d="M1,1 L7,7 M7,1 L1,7" stroke="#d42020" stroke-width="2.2"/></svg>
<div class="a" style="left:9.8px;top:362.7px;width:157.8px;height:13.8px;background:#fff;border:1px solid #cfcfcf;border-radius:2px"></div>
<div class="a" style="left:169.3px;top:362.7px;width:15.1px;height:13.8px;background:linear-gradient(#fafafa,#ececec);border:1px solid #c9c9c9;border-radius:2px"></div>
<svg class="a" style="left:172px;top:365px;" width="9" height="9" viewBox="0 0 9 9"><circle cx="4.5" cy="4.5" r="3.3" fill="none" stroke="#aaa" stroke-width="1.8" stroke-dasharray="1.3 0.9"/><circle cx="4.5" cy="4.5" r="1.3" fill="#aaa"/></svg>
<div class="a" style="left:9.8px;top:379.5px;width:166px;height:10px;background:linear-gradient(#f6f6f6,#e6e6e6);border-bottom:1px solid #d0d0d0"></div>
<div class="a" style="left:12.4px;top:380.5px;width:8px;height:8px;background:#fff;border:1px solid #c8c8c8"></div>
<div class="a" style="left:9.2px;top:389.2px;width:167.2px;height:14.2px;background:#fff;border:1px solid #d2d2d2"></div>
<div class="a" style="left:9.8px;top:408.4px;width:8px;height:8.8px;background:#fff;border:1px solid #c8c8c8"></div>
<div class="a" style="left:9.2px;top:423.4px;width:112.8px;height:16.6px;background:linear-gradient(#f4f4f4,#e6e6e6);border:1px solid #cdcdcd;border-radius:2px"></div>
<div class="a" style="left:16.3px;top:430.8px;width:8.5px;height:2.2px;background:#2d8fd0;border-radius:1px"></div>
<div class="a" style="left:124.6px;top:424.5px;width:17.80000000000001px;height:15px;background:linear-gradient(#f6f6f6,#e8e8e8);border:1px solid #cdcdcd;border-radius:2px"></div>
<div class="a" style="left:145.4px;top:424.5px;width:16.799999999999983px;height:15px;background:linear-gradient(#f6f6f6,#e8e8e8);border:1px solid #cdcdcd;border-radius:2px"></div>
<div class="a" style="left:165.8px;top:424.5px;width:14.199999999999989px;height:15px;background:linear-gradient(#f6f6f6,#e8e8e8);border:1px solid #cdcdcd;border-radius:2px"></div>
<svg class="a" style="left:129px;top:428px;" width="9" height="8" viewBox="0 0 9 8"><rect x="0" y="2" width="6" height="6" fill="#bbb"/><rect x="3" y="0" width="6" height="6" fill="#aaa" stroke="#999" stroke-width="0.5"/></svg>
<svg class="a" style="left:150px;top:428px;" width="8" height="8" viewBox="0 0 8 8"><rect x="0" y="2" width="6" height="6" fill="#ccc"/><rect x="2" y="0" width="6" height="6" fill="#bbb"/></svg>
<svg class="a" style="left:170px;top:428px;" width="8" height="9" viewBox="0 0 8 9"><path d="M6,1.5 A3.5,3.5 0 1 0 7.5,6" fill="none" stroke="#2d8fd0" stroke-width="1.6"/></svg>
<div class="a" style="left:83.3px;top:444.7px;width:93.1px;height:13.8px;background:linear-gradient(#fafafa,#ececec);border:1px solid #cdcdcd;border-radius:2px"></div>
<div class="a" style="left:9.2px;top:473px;width:167px;height:1px;background:#cdcdcd;"></div>
<div class="a" style="left:9.5px;top:478.6px;width:120.1px;height:14.4px;background:linear-gradient(#fafafa,#ececec);border:1px solid #cdcdcd;border-radius:2px"></div>
<svg class="a" style="left:14px;top:481px;" width="9" height="9" viewBox="0 0 9 9"><path d="M1,3 L4,0 L8,1 L8,6 L5,9 L1,8 z" fill="#f0c020" stroke="#b08010" stroke-width="0.6"/></svg>
<svg class="a" style="left:119.5px;top:484px;" width="6" height="4" viewBox="0 0 6 4"><path d="M0,0 h6 l-3,3.5 z" fill="#555"/></svg>
<div class="a" style="left:132.6px;top:478.6px;width:44px;height:14.4px;background:linear-gradient(#fafafa,#ececec);border:1px solid #cdcdcd;border-radius:2px"></div>
<div class="a" style="left:9.5px;top:496.6px;width:50.9px;height:14px;background:linear-gradient(#fafafa,#ececec);border:1px solid #cdcdcd;border-radius:2px"></div>
<svg class="a" style="left:22px;top:498.5px;" width="10" height="10" viewBox="0 0 10 10"><circle cx="4" cy="3" r="2.8" fill="#6cb86c"/><rect x="1" y="4" width="8" height="6" fill="#3a7fc0"/><rect x="5" y="6" width="4" height="4" fill="#e0b030"/></svg>
<div class="a" style="left:63.6px;top:496.6px;width:16.9px;height:14px;background:linear-gradient(#fafafa,#ececec);border:1px solid #cdcdcd;border-radius:2px"></div>
<div class="a" style="left:83.9px;top:496.6px;width:17.599999999999994px;height:14px;background:linear-gradient(#fafafa,#ececec);border:1px solid #cdcdcd;border-radius:2px"></div>
<div class="a" style="left:104.2px;top:496.6px;width:17.599999999999994px;height:14px;background:linear-gradient(#fafafa,#ececec);border:1px solid #cdcdcd;border-radius:2px"></div>
<div class="a" style="left:124.5px;top:496.6px;width:18.0px;height:14px;background:linear-gradient(#fafafa,#ececec);border:1px solid #cdcdcd;border-radius:2px"></div>
<div class="a" style="left:145.4px;top:496.6px;width:17.400000000000006px;height:14px;background:linear-gradient(#fafafa,#ececec);border:1px solid #cdcdcd;border-radius:2px"></div>
<div class="a" style="left:165.7px;top:496.6px;width:12.300000000000011px;height:14px;background:linear-gradient(#fafafa,#ececec);border:1px solid #cdcdcd;border-radius:2px"></div>
<svg class="a" style="left:67px;top:499px;" width="10" height="9" viewBox="0 0 10 9"><rect x="1" y="3" width="8" height="6" fill="#2a70b0"/><rect x="4" y="5" width="5" height="4" fill="#e0a030"/><path d="M3,4 q2,-5 4,0" fill="none" stroke="#222" stroke-width="1.2"/></svg>
<svg class="a" style="left:87.5px;top:499.5px;" width="11" height="8" viewBox="0 0 11 8"><path d="M1,3 h9 M1,3 l2,-2 M1,3 l2,2 M10,3 l-2,-2 M10,3 l-2,2" stroke="#7ab87a" stroke-width="1.4" fill="none"/><path d="M1,7 h9" stroke="#999" stroke-width="0.6"/></svg>
<svg class="a" style="left:108px;top:499.5px;" width="11" height="8" viewBox="0 0 11 8"><path d="M1,3 h9 M1,3 l2,-2 M1,3 l2,2 M10,3 l-2,-2 M10,3 l-2,2" stroke="#7ab87a" stroke-width="1.4" fill="none"/><path d="M1,7 h9" stroke="#999" stroke-width="0.6"/></svg>
<svg class="a" style="left:128px;top:499.5px;" width="11" height="8" viewBox="0 0 11 8"><path d="M1,3 h9 M1,3 l2,-2 M1,3 l2,2 M10,3 l-2,-2 M10,3 l-2,2" stroke="#7ab87a" stroke-width="1.4" fill="none"/><path d="M1,7 h9" stroke="#999" stroke-width="0.6"/></svg>
<svg class="a" style="left:149px;top:499px;" width="10" height="9" viewBox="0 0 10 9"><path d="M0,2 h4 l1,1 h5 v6 h-10 z" fill="#e8c050"/><path d="M5,8.5 l-3,-3 a1.5,1.5 0 0 1 3,-1.5 a1.5,1.5 0 0 1 3,1.5 z" fill="#e02020"/></svg>
<svg class="a" style="left:168px;top:498.5px;" width="8" height="10" viewBox="0 0 8 10"><rect x="0" y="0" width="6" height="10" fill="url(#cmap)"/></svg>
<div class="a" style="left:9.2px;top:526px;width:167px;height:1px;background:#cdcdcd;"></div>
<div class="a" style="left:83.9px;top:536.2px;width:40px;height:3px;background:#3a8fd0;border-radius:1.5px"></div>
<div class="a" style="left:119.5px;top:534.3px;width:8px;height:7.4px;background:#fafafa;border:1px solid #bdbdbd;border-radius:2px"></div>
<div class="a" style="left:132.6px;top:531.3px;width:44px;height:13.6px;background:#fff;border:1px solid #cdcdcd;border-radius:2px"></div>
<div class="a" style="left:9.2px;top:560px;width:167px;height:1px;background:#cdcdcd;"></div>
<div class="a" style="left:84px;top:571px;width:43px;height:2.5px;background:#cfcfcf;border-radius:1.5px"></div>
<div class="a" style="left:83.9px;top:568.8px;width:8.5px;height:6.7px;background:#fafafa;border:1px solid #bdbdbd;border-radius:2px"></div>
<div class="a" style="left:132.6px;top:564.7px;width:44px;height:11.8px;background:#fff;border:1px solid #cdcdcd;border-radius:2px"></div>
<div class="a" style="left:176.3px;top:379px;width:8.4px;height:194px;background:#e6e6e6;"></div>
<div class="a" style="left:176.3px;top:388px;width:8.4px;height:71.4px;background:#d6d6d6;"></div>
<div class="a" style="left:176.3px;top:459.4px;width:8.4px;height:45.6px;background:#fbfbfb;"></div>
<div class="a" style="left:176.3px;top:505px;width:8.4px;height:62px;background:#d6d6d6;"></div>
<svg class="a" style="left:177.5px;top:382px;" width="6" height="4" viewBox="0 0 6 4"><path d="M0,3.5 h6 l-3,-3.5 z" fill="#333"/></svg>
<svg class="a" style="left:177.5px;top:570px;" width="6" height="4" viewBox="0 0 6 4"><path d="M0,0 h6 l-3,3.5 z" fill="#333"/></svg>
<div class="a" style="left:9.5px;top:577px;width:167px;height:8.4px;background:#e8e8e8;"></div>
<div class="a" style="left:18px;top:577px;width:127.4px;height:8.4px;background:#fafafa;"></div>
<div class="a" style="left:145.4px;top:577px;width:24px;height:8.4px;background:#d8d8d8;"></div>
<svg class="a" style="left:12px;top:579px;" width="4" height="6" viewBox="0 0 4 6"><path d="M3.5,0 v6 l-3.5,-3 z" fill="#444"/></svg>
<svg class="a" style="left:170.5px;top:579px;" width="4" height="6" viewBox="0 0 4 6"><path d="M0,0 v6 l3.5,-3 z" fill="#444"/></svg>
<div class="a" style="left:195px;top:173.5px;width:579px;height:1px;background:#d3d3d3;"></div>
<div class="a" style="left:195.3px;top:159px;width:72.7px;height:15.5px;background:#f6f6f6;border:1px solid #d0d0d0;border-bottom:none;border-radius:2px 2px 0 0"></div>
<div class="a" style="left:269px;top:160px;width:21.6px;height:13.5px;background:#e4e4e4;border:1px solid #cfcfcf;border-bottom:none;border-radius:2px 2px 0 0"></div>
<svg class="a" style="left:201.6px;top:163.6px;" width="7" height="6" viewBox="0 0 7 6"><rect x="0.5" y="0.5" width="6" height="5" fill="none" stroke="#333" stroke-width="1"/><rect x="0.5" y="0.5" width="6" height="1.5" fill="#333"/></svg>
<div class="a" style="left:252.5px;top:163px;width:7px;height:7px;border:1px solid #777;"></div>
<svg class="a" style="left:253.5px;top:164px;" width="5" height="5" viewBox="0 0 5 5"><path d="M0.5,0.5 l4,4 M4.5,0.5 l-4,4" stroke="#555" stroke-width="0.9"/></svg>
<svg class="a" style="left:276.5px;top:164px;" width="7" height="7" viewBox="0 0 7 7"><path d="M3.5,0.5 v6 M0.5,3.5 h6" stroke="#222" stroke-width="1.3"/></svg>
<div class="a" style="left:231px;top:175px;width:1px;height:15px;background:#d8d8d8;"></div>
<div class="a" style="left:251.7px;top:175px;width:1px;height:15px;background:#d8d8d8;"></div>
<div class="a" style="left:289px;top:175px;width:1px;height:15px;background:#d8d8d8;"></div>
<div class="a" style="left:345.5px;top:175px;width:1px;height:15px;background:#d8d8d8;"></div>
<svg class="a" style="left:199px;top:175px;" width="11" height="14" viewBox="0 0 11 14"><rect x="1" y="2" width="9" height="7" rx="1" fill="#aaa"/><circle cx="5.5" cy="5.5" r="2" fill="#ddd"/><path d="M2,12 q2,-4 6,-2" stroke="#e02020" stroke-width="1.8" fill="none"/></svg>
<svg class="a" style="left:215.7px;top:175px;" width="11" height="13" viewBox="0 0 11 13"><rect x="1" y="2" width="9" height="7" rx="1" fill="#ccc"/><circle cx="5.5" cy="5.5" r="2" fill="#eee"/><path d="M3,12 q3,-4 6,-1" stroke="#ccc" stroke-width="1.8" fill="none"/></svg>
<svg class="a" style="left:235.8px;top:175px;" width="12" height="13" viewBox="0 0 12 13"><rect x="0.5" y="0.5" width="11" height="12" stroke="#999" stroke-width="0.6" stroke-dasharray="1.2 1.2" fill="none"/><rect x="2" y="3.5" width="8" height="6" rx="1" fill="#aaa"/><circle cx="6" cy="6.5" r="2" fill="#eee"/></svg>
<svg class="a" style="left:272.8px;top:175px;" width="12" height="13" viewBox="0 0 12 13"><rect x="0.5" y="1" width="9" height="7" rx="1" fill="#aaa"/><circle cx="5" cy="5" r="2.3" fill="#e8e8e8" stroke="#888" stroke-width="0.7"/><path d="M8,8 l3.5,4" stroke="#c09020" stroke-width="1.8"/></svg>
<svg class="a" style="left:292.8px;top:175px;" width="12" height="13" viewBox="0 0 12 13"><rect x="0.5" y="0.5" width="11" height="12" stroke="#999" stroke-width="0.6" stroke-dasharray="1.2 1.2" fill="none"/><path d="M6,3 L9,6.5 L6,10 L3,6.5 z" fill="#5ab050"/></svg>
<svg class="a" style="left:309.5px;top:175px;" width="12" height="13" viewBox="0 0 12 13"><rect x="0.5" y="0.5" width="11" height="12" stroke="#999" stroke-width="0.6" stroke-dasharray="1.2 1.2" fill="none"/><rect x="2.5" y="5" width="7" height="3" fill="#e02020"/></svg>
<svg class="a" style="left:326px;top:175px;" width="12" height="13" viewBox="0 0 12 13"><rect x="0.5" y="0.5" width="11" height="12" stroke="#999" stroke-width="0.6" stroke-dasharray="1.2 1.2" fill="none"/><path d="M6,2 l3,3 h-6 z" fill="#5ab050"/><rect x="2.5" y="7" width="7" height="2.5" fill="#e02020"/><path d="M9,10 l2.5,2.5" stroke="#333" stroke-width="0.8"/></svg>
<svg class="a" style="left:346.8px;top:175px;" width="12" height="13" viewBox="0 0 12 13"><rect x="0.5" y="0.5" width="11" height="12" stroke="#999" stroke-width="0.6" stroke-dasharray="1.2 1.2" fill="none"/><path d="M6,2 L10,10 H2 z" fill="#6ab860"/><path d="M9,10 l2.5,2.5" stroke="#333" stroke-width="0.8"/></svg>
<svg class="a" style="left:363.5px;top:175px;" width="12" height="13" viewBox="0 0 12 13"><rect x="0.5" y="0.5" width="11" height="12" stroke="#999" stroke-width="0.6" stroke-dasharray="1.2 1.2" fill="none"/><circle cx="3" cy="3" r="0.9" fill="#d03030"/><circle cx="9" cy="3" r="0.9" fill="#d03030"/><circle cx="6" cy="7" r="0.9" fill="#d03030"/><circle cx="3" cy="10" r="0.9" fill="#d03030"/><path d="M9,10 l2.5,2.5" stroke="#333" stroke-width="0.8"/></svg>
<svg class="a" style="left:380px;top:175px;" width="12" height="13" viewBox="0 0 12 13"><path d="M1,5 L8,2 L12,4 L11,8 L4,10 z" fill="#7cc070" stroke="#4a8a40" stroke-width="0.6"/><path d="M7,10 l3,3" stroke="#555" stroke-width="0.8"/></svg>
<svg class="a" style="left:397px;top:175px;" width="12" height="13" viewBox="0 0 12 13"><rect x="0.5" y="0.5" width="11" height="12" stroke="#999" stroke-width="0.6" stroke-dasharray="1.2 1.2" fill="none"/><path d="M3,4 h4 M5,7 h5 M3,10 h4" stroke="#e06060" stroke-width="0.8" stroke-dasharray="1 1"/></svg>
<svg class="a" style="left:412.4px;top:175px;" width="12" height="13" viewBox="0 0 12 13"><path d="M1,7 l4,-4 M4,9 l6,-6 M6,11 l5,-4" stroke="#8acb84" stroke-width="1.2" stroke-dasharray="1.5 1"/><path d="M9,10 l2.5,2.5" stroke="#333" stroke-width="0.8"/></svg>
<svg class="a" style="left:429px;top:175px;" width="12" height="13" viewBox="0 0 12 13"><circle cx="3" cy="3" r="1" fill="#d03030"/><circle cx="7" cy="4" r="1" fill="#d03030"/><circle cx="4" cy="7" r="1" fill="#d03030"/><circle cx="8" cy="8" r="1" fill="#d03030"/><circle cx="10" cy="3" r="1" fill="#d03030"/><circle cx="2" cy="10" r="1" fill="#d03030"/></svg>
<svg class="a" style="left:445.8px;top:175px;" width="13" height="13" viewBox="0 0 13 13"><rect x="0.5" y="0.5" width="11" height="12" stroke="#999" stroke-width="0.6" stroke-dasharray="1.2 1.2" fill="none"/><circle cx="4" cy="4" r="1.8" fill="#2a80d0"/><circle cx="8" cy="8" r="1.8" fill="#5ab050"/><path d="M9,10 l3,3" stroke="#333" stroke-width="0.9"/></svg>
<svg class="a" style="left:466px;top:176px;" width="9" height="11" viewBox="0 0 9 11"><path d="M1,3 l3,3 M5,7 l3,3" stroke="#aaa" stroke-width="1"/></svg>
<svg class="a" style="left:481.3px;top:175px;" width="10" height="13" viewBox="0 0 10 13"><path d="M1,12 L5,2 L9,4 V11 z" fill="#bbb" stroke="#999" stroke-width="0.6"/></svg>
<svg class="a" style="left:498.3px;top:175px;" width="10" height="12" viewBox="0 0 10 12"><path d="M5,2 L9,10 H1 z" fill="#6ab860"/><path d="M6,9 l3,3" stroke="#555" stroke-width="0.8"/></svg>
<svg class="a" style="left:514px;top:175px;" width="10" height="12" viewBox="0 0 10 12"><circle cx="5" cy="2" r="1" fill="#d03030"/><circle cx="2" cy="9" r="1" fill="#d03030"/><circle cx="8" cy="9" r="1" fill="#d03030"/><path d="M5,2 L2,9 M5,2 L8,9" stroke="#999" stroke-width="0.5" stroke-dasharray="1 1"/></svg>
<svg class="a" style="left:531px;top:175px;" width="10" height="12" viewBox="0 0 10 12"><circle cx="2" cy="10" r="1.6" fill="#d03030"/><text x="4" y="9" font-size="10" font-family="Liberation Sans" fill="#777">?</text></svg>
<svg class="a" style="left:546.5px;top:175px;" width="12" height="12" viewBox="0 0 12 12"><path d="M0,11 L3,6 L6,11 z" fill="#6ab860"/><text x="5" y="9" font-size="10" font-family="Liberation Sans" fill="#777">?</text></svg>
<svg class="a" style="left:563.5px;top:176px;" width="10" height="10" viewBox="0 0 10 10"><path d="M5,0 v10 M0,5 h10" stroke="#aaa" stroke-width="2.6"/></svg>
<svg class="a" style="left:580.6px;top:178px;" width="10" height="5" viewBox="0 0 10 5"><path d="M0,2.5 h10" stroke="#aaa" stroke-width="2.4"/></svg>
<svg class="a" style="left:597px;top:176px;" width="11" height="11" viewBox="0 0 11 11"><circle cx="5.5" cy="5.5" r="4.6" fill="none" stroke="#999" stroke-width="1.1"/><path d="M3.5,3.5 l4,4 M7.5,3.5 l-4,4" stroke="#999" stroke-width="1.1"/></svg>
<div class="a" style="left:706.8px;top:175px;width:12.800000000000068px;height:15px;background:linear-gradient(#f6f6f6,#e6e6e6);border:1px solid #cdcdcd;border-radius:2px"></div>
<div class="a" style="left:722.4px;top:175px;width:14.200000000000045px;height:15px;background:linear-gradient(#f6f6f6,#e6e6e6);border:1px solid #cdcdcd;border-radius:2px"></div>
<div class="a" style="left:739.4px;top:175px;width:15.600000000000023px;height:15px;background:linear-gradient(#f6f6f6,#e6e6e6);border:1px solid #cdcdcd;border-radius:2px"></div>
<div class="a" style="left:756.5px;top:175px;width:15.5px;height:15px;background:linear-gradient(#f6f6f6,#e6e6e6);border:1px solid #cdcdcd;border-radius:2px"></div>
<svg class="a" style="left:709px;top:177px;" width="10" height="11" viewBox="0 0 10 11"><rect x="0.5" y="0.5" width="9" height="10" fill="#dfe6f2" stroke="#9aa" stroke-width="0.8"/><path d="M5,0.5 v10" stroke="#9aa" stroke-width="1"/></svg>
<svg class="a" style="left:725px;top:177px;" width="10" height="11" viewBox="0 0 10 11"><rect x="0.5" y="0.5" width="9" height="10" fill="#dfe6f2" stroke="#9aa" stroke-width="0.8"/><path d="M0.5,5.5 h9" stroke="#9aa" stroke-width="1"/></svg>
<svg class="a" style="left:743px;top:178px;" width="9" height="9" viewBox="0 0 9 9"><rect x="0.7" y="0.7" width="7.6" height="7.6" fill="none" stroke="#111" stroke-width="1.2"/><rect x="0.7" y="0.7" width="7.6" height="2" fill="#111"/></svg>
<svg class="a" style="left:760px;top:178px;" width="9" height="9" viewBox="0 0 9 9"><rect x="0.5" y="0.5" width="8" height="8" fill="none" stroke="#666" stroke-width="0.9"/><path d="M2.5,2.5 l4,4 M6.5,2.5 l-4,4" stroke="#555" stroke-width="1"/></svg>
<div class="a" style="left:195.5px;top:192px;width:578px;height:398px;background:#0000ff;"></div>
<div class="a" style="left:197px;top:193.5px;width:575px;height:395px;background:#b8bcc8;"></div>
<div class="a" style="left:198px;top:194.5px;width:573.5px;height:393.5px;background:#52576e;"></div>
<div class="a" style="left:198px;top:586.5px;width:573.5px;height:1.5px;background:#3a3d4a;"></div>
<svg class="a" style="left:198px;top:194px;" width="574" height="394" viewBox="0 0 574 394"><g shape-rendering="crispEdges"><path fill="#3849ad" d="M129,266.0L129,269.7L137.8,269.5zM129,266.0L137.8,269.5L137.9,265.8zM129,269.7L129,273.4L137.8,269.5zM129,273.4L137.7,273.2L137.8,269.5zM129,273.4L129,277.1L137.6,277.0zM129,280.8L129,284.5L137.3,284.4zM129,280.8L137.3,284.4L137.5,280.7zM129,288.2L137.2,288.1L137.3,284.4zM129,288.2L137.1,291.8L137.2,288.1zM129,291.9L129,295.6L137.1,291.8zM129,295.6L129,299.3L136.9,299.2zM129,299.3L129,303.0L136.9,299.2zM129,310.5L136.5,310.3L136.6,306.6zM129,310.5L129,314.2L136.4,314.0zM129,317.9L136.2,317.7L136.4,314.0zM129,325.3L129,329.0L135.9,328.8zM129,329.0L129,332.7L135.9,328.8zM129,340.1L135.5,339.9L135.6,336.2zM129,340.1L135.4,343.7L135.5,339.9zM129,343.8L129,347.5L135.4,343.7zM129,347.5L135.3,347.4L135.4,343.7zM137.9,265.8L137.8,269.5L146.9,265.7zM137.8,269.5L146.6,269.4L146.9,265.7zM137.8,269.5L137.7,273.2L146.4,273.1zM137.8,269.5L146.4,273.1L146.6,269.4zM137.7,273.2L137.6,277.0L146.4,273.1zM137.1,291.8L144.9,295.3L145.2,291.6zM136.9,299.2L144.7,299.0L144.9,295.3zM136.9,299.2L144.5,302.7L144.7,299.0zM136.7,302.9L136.6,306.6L144.5,302.7zM136.4,314.0L136.2,317.7L143.5,317.6zM136.2,317.7L136.1,321.4L143.5,317.6zM136,325.1L135.9,328.8L143,325.0zM135.9,328.8L142.5,332.4L142.8,328.7zM135.6,336.2L135.5,339.9L142,339.8zM135.5,339.9L135.4,343.7L142,339.8zM135.4,343.7L135.3,347.4L141.6,347.2zM146.9,265.7L146.6,269.4L155.5,269.2zM146.9,265.7L155.5,269.2L155.8,265.5zM146.6,269.4L146.4,273.1L155.5,269.2zM146.2,276.8L145.9,280.5L154.7,276.6zM145.9,280.5L154,284.0L154.4,280.3zM145.7,284.2L145.4,287.9L154,284.0zM145.4,287.9L153.7,287.8L154,284.0zM145.4,287.9L153.3,291.5L153.7,287.8zM145.2,291.6L144.9,295.3L153.3,291.5zM144.9,295.3L152.9,295.2L153.3,291.5zM144.9,295.3L152.6,298.9L152.9,295.2zM144.7,299.0L144.5,302.7L152.6,298.9zM144.5,302.7L144.2,306.4L151.8,306.3zM144.5,302.7L151.8,306.3L152.2,302.6zM144,310.2L151.5,310.0L151.8,306.3zM144,310.2L143.7,313.9L151.1,313.7zM143.7,313.9L143.5,317.6L151.1,313.7zM143.5,317.6L150.7,317.4L151.1,313.7zM143.5,317.6L150.4,321.1L150.7,317.4zM143.3,321.3L143,325.0L150.4,321.1zM143,325.0L142.8,328.7L149.7,328.5zM143,325.0L149.7,328.5L150,324.8zM142.5,332.4L149.3,332.2L149.7,328.5zM141.8,343.5L141.6,347.2L148.2,343.4zM141.6,347.2L147.8,347.1L148.2,343.4zM155.8,265.5L155.5,269.2L164.8,265.3zM155.5,269.2L164.3,269.0L164.8,265.3zM155.5,269.2L155.1,272.9L163.8,272.8zM155.5,269.2L163.8,272.8L164.3,269.0zM155.1,272.9L154.7,276.6L163.8,272.8zM154.7,276.6L163.3,276.5L163.8,272.8zM154.7,276.6L154.4,280.3L162.8,280.2zM154.7,276.6L162.8,280.2L163.3,276.5zM154,284.0L153.7,287.8L161.9,287.6zM153.7,287.8L153.3,291.5L161.9,287.6zM153.3,291.5L161.4,291.3L161.9,287.6zM153.3,291.5L160.9,295.0L161.4,291.3zM152.9,295.2L152.6,298.9L160.9,295.0zM152.6,298.9L160.4,298.7L160.9,295.0zM152.2,302.6L151.8,306.3L159.9,302.4zM151.8,306.3L159.4,306.1L159.9,302.4zM151.8,306.3L159,309.8L159.4,306.1zM151.1,313.7L158.5,313.6L159,309.8zM151.1,313.7L150.7,317.4L158,317.3zM150.4,321.1L157.5,321.0L158,317.3zM150.4,321.1L150,324.8L157,324.7zM150,324.8L149.7,328.5L157,324.7zM149.7,328.5L156.5,328.4L157,324.7zM149.3,332.2L148.9,336.0L156.1,332.1zM148.9,336.0L155.6,335.8L156.1,332.1zM148.9,336.0L155.1,339.5L155.6,335.8zM148.2,343.4L154.6,343.2L155.1,339.5zM148.2,343.4L154.1,346.9L154.6,343.2zM164.8,265.3L173.1,268.9L173.7,265.2zM164.3,269.0L163.8,272.8L173.1,268.9zM163.8,272.8L172.5,272.6L173.1,268.9zM163.8,272.8L163.3,276.5L171.9,276.3zM163.8,272.8L171.9,276.3L172.5,272.6zM161.9,287.6L161.4,291.3L169.5,291.1zM160.9,295.0L168.9,294.9L169.5,291.1zM159.9,302.4L167.7,302.3L168.3,298.6zM159.9,302.4L159.4,306.1L167.1,306.0zM159.9,302.4L167.1,306.0L167.7,302.3zM159.4,306.1L159,309.8L167.1,306.0zM159,309.8L158.5,313.6L165.8,313.4zM159,309.8L165.8,313.4L166.4,309.7zM157,324.7L163.4,328.3L164,324.5zM156.1,332.1L155.6,335.8L162.2,335.7zM156.1,332.1L162.2,335.7L162.8,332.0zM155.1,339.5L161.6,339.4L162.2,335.7zM155.1,339.5L154.6,343.2L161,343.1zM154.6,343.2L154.1,346.9L161,343.1zM154.1,346.9L160.4,346.8L161,343.1zM173.7,265.2L173.1,268.9L182.7,265.0zM173.1,268.9L172.5,272.6L181.2,272.4zM172.5,272.6L171.9,276.3L181.2,272.4zM171.9,276.3L180.5,276.1L181.2,272.4zM171.9,276.3L171.3,280.0L179.8,279.8zM171.3,280.0L170.7,283.7L179.8,279.8zM169.5,291.1L168.9,294.9L176.8,294.7zM168.3,298.6L176.1,298.4L176.8,294.7zM168.3,298.6L167.7,302.3L175.4,302.1zM168.3,298.6L175.4,302.1L176.1,298.4zM167.7,302.3L167.1,306.0L175.4,302.1zM167.1,306.0L174.7,305.8L175.4,302.1zM164.6,320.8L171,324.4L171.8,320.7zM164,324.5L163.4,328.3L171,324.4zM163.4,328.3L170.3,328.1L171,324.4zM163.4,328.3L162.8,332.0L169.6,331.8zM162.8,332.0L162.2,335.7L169.6,331.8zM162.2,335.7L168.8,335.5L169.6,331.8zM162.2,335.7L161.6,339.4L168.1,339.2zM162.2,335.7L168.1,339.2L168.8,335.5zM161,343.1L167.4,343.0L168.1,339.2zM161,343.1L166.7,346.7L167.4,343.0zM182.7,265.0L190.8,268.5L191.6,264.8zM181.9,268.7L181.2,272.4L190.8,268.5zM181.2,272.4L189.9,272.3L190.8,268.5zM181.2,272.4L189.1,276.0L189.9,272.3zM179.8,279.8L188.2,279.7L189.1,276.0zM179.8,279.8L179,283.6L187.4,283.4zM179.8,279.8L187.4,283.4L188.2,279.7zM179,283.6L178.3,287.3L187.4,283.4zM178.3,287.3L177.6,291.0L185.7,290.8zM177.6,291.0L176.8,294.7L185.7,290.8zM176.8,294.7L184.8,294.5L185.7,290.8zM176.8,294.7L176.1,298.4L184,298.3zM175.4,302.1L183.1,302.0L184,298.3zM175.4,302.1L174.7,305.8L182.3,305.7zM173.9,309.5L181.4,309.4L182.3,305.7zM173.2,313.3L172.5,317.0L180.6,313.1zM172.5,317.0L179.7,316.8L180.6,313.1zM169.6,331.8L176.3,331.7L177.2,328.0zM169.6,331.8L175.5,335.4L176.3,331.7zM190.8,268.5L199.6,268.4L200.6,264.7zM187.4,283.4L195.7,283.2L196.7,279.5zM185.7,290.8L193.8,290.7L194.7,287.0zM184,298.3L190.9,301.8L191.8,298.1zM183.1,302.0L182.3,305.7L190.9,301.8zM182.3,305.7L181.4,309.4L188.9,309.2zM182.3,305.7L188.9,309.2L189.9,305.5zM181.4,309.4L180.6,313.1L188.9,309.2zM180.6,313.1L187.9,313.0L188.9,309.2zM180.6,313.1L187,316.7L187.9,313.0zM179.7,316.8L178.9,320.5L187,316.7zM178.9,320.5L186,320.4L187,316.7zM178.9,320.5L178,324.2L185,324.1zM178.9,320.5L185,324.1L186,320.4zM177.2,328.0L184.1,327.8L185,324.1zM177.2,328.0L183.1,331.5L184.1,327.8zM173.8,342.8L180.2,342.7L181.2,339.0zM173.8,342.8L172.9,346.5L179.2,346.4zM198.6,272.1L206.2,275.6L207.3,271.9zM197.6,275.8L196.7,279.5L206.2,275.6zM196.7,279.5L195.7,283.2L204,283.1zM196.7,279.5L204,283.1L205.1,279.4zM195.7,283.2L194.7,287.0L204,283.1zM194.7,287.0L203,286.8L204,283.1zM194.7,287.0L193.8,290.7L201.9,290.5zM194.7,287.0L201.9,290.5L203,286.8zM192.8,294.4L191.8,298.1L199.7,297.9zM191.8,298.1L190.9,301.8L199.7,297.9zM190.9,301.8L189.9,305.5L197.5,305.4zM190.9,301.8L197.5,305.4L198.6,301.7zM189.9,305.5L188.9,309.2L197.5,305.4zM188.9,309.2L187.9,313.0L195.3,312.8zM188.9,309.2L195.3,312.8L196.4,309.1zM187.9,313.0L187,316.7L195.3,312.8zM187,316.7L194.2,316.5L195.3,312.8zM187,316.7L186,320.4L193.1,320.2zM185,324.1L184.1,327.8L191,327.7zM185,324.1L191,327.7L192,324.0zM184.1,327.8L183.1,331.5L191,327.7zM183.1,331.5L188.8,335.1L189.9,331.4zM182.1,335.2L181.2,339.0L188.8,335.1zM181.2,339.0L186.6,342.5L187.7,338.8zM209.5,264.5L208.4,268.2L218.4,264.3zM208.4,268.2L217.2,268.1L218.4,264.3zM208.4,268.2L207.3,271.9L216,271.8zM206.2,275.6L213.6,279.2L214.8,275.5zM205.1,279.4L204,283.1L213.6,279.2zM204,283.1L212.4,282.9L213.6,279.2zM204,283.1L203,286.8L211.2,286.6zM201.9,290.5L200.8,294.2L208.7,294.1zM200.8,294.2L199.7,297.9L208.7,294.1zM199.7,297.9L207.5,297.8L208.7,294.1zM197.5,305.4L196.4,309.1L203.9,308.9zM197.5,305.4L203.9,308.9L205.1,305.2zM196.4,309.1L195.3,312.8L203.9,308.9zM195.3,312.8L201.5,316.4L202.7,312.7zM194.2,316.5L193.1,320.2L201.5,316.4zM193.1,320.2L200.3,320.1L201.5,316.4zM193.1,320.2L192,324.0L199.1,323.8zM193.1,320.2L199.1,323.8L200.3,320.1zM191,327.7L197.8,327.5L199.1,323.8zM191,327.7L189.9,331.4L196.6,331.2zM189.9,331.4L188.8,335.1L196.6,331.2zM186.6,342.5L191.8,346.1L193,342.4zM217.2,268.1L216,271.8L226.1,267.9zM214.8,275.5L213.6,279.2L223.4,275.3zM212.4,282.9L211.2,286.6L220.7,282.8zM211.2,286.6L210,290.4L218.1,290.2zM211.2,286.6L218.1,290.2L219.4,286.5zM208.7,294.1L207.5,297.8L215.4,297.6zM208.7,294.1L215.4,297.6L216.7,293.9zM206.3,301.5L214.1,301.4L215.4,297.6zM206.3,301.5L205.1,305.2L212.7,305.1zM202.7,312.7L201.5,316.4L210.1,312.5zM201.5,316.4L200.3,320.1L207.4,319.9zM201.5,316.4L207.4,319.9L208.7,316.2zM199.1,323.8L206.1,323.7L207.4,319.9zM199.1,323.8L197.8,327.5L204.7,327.4zM199.1,323.8L204.7,327.4L206.1,323.7zM196.6,331.2L202.1,334.8L203.4,331.1zM194.2,338.7L200.7,338.5L202.1,334.8zM194.2,338.7L193,342.4L199.4,342.3zM194.2,338.7L199.4,342.3L200.7,338.5zM227.4,264.2L226.1,267.9L236.3,264.0zM226.1,267.9L234.9,267.7L236.3,264.0zM226.1,267.9L233.4,271.4L234.9,267.7zM224.7,271.6L223.4,275.3L233.4,271.4zM223.4,275.3L232,275.2L233.4,271.4zM223.4,275.3L222.1,279.0L230.5,278.9zM222.1,279.0L220.7,282.8L230.5,278.9zM220.7,282.8L227.6,286.3L229.1,282.6zM216.7,293.9L215.4,297.6L224.7,293.8zM215.4,297.6L223.2,297.5L224.7,293.8zM215.4,297.6L214.1,301.4L221.8,301.2zM212.7,305.1L211.4,308.8L218.9,308.6zM211.4,308.8L210.1,312.5L218.9,308.6zM210.1,312.5L217.4,312.4L218.9,308.6zM210.1,312.5L208.7,316.2L216,316.1zM210.1,312.5L216,316.1L217.4,312.4zM208.7,316.2L207.4,319.9L216,316.1zM207.4,319.9L214.5,319.8L216,316.1zM204.7,327.4L210.2,331.0L211.6,327.2zM203.4,331.1L202.1,334.8L210.2,331.0zM202.1,334.8L208.7,334.7L210.2,331.0zM202.1,334.8L200.7,338.5L207.2,338.4zM199.4,342.3L205.8,342.1L207.2,338.4zM199.4,342.3L204.3,345.8L205.8,342.1zM236.3,264.0L234.9,267.7L243.7,267.6zM233.4,271.4L240.6,275.0L242.1,271.3zM232,275.2L230.5,278.9L240.6,275.0zM230.5,278.9L239,278.7L240.6,275.0zM230.5,278.9L229.1,282.6L237.4,282.4zM230.5,278.9L237.4,282.4L239,278.7zM227.6,286.3L235.8,286.2L237.4,282.4zM227.6,286.3L234.2,289.9L235.8,286.2zM226.2,290.0L224.7,293.8L234.2,289.9zM221.8,301.2L229.5,301.0L231.1,297.3zM221.8,301.2L227.9,304.8L229.5,301.0zM220.3,304.9L218.9,308.6L227.9,304.8zM218.9,308.6L217.4,312.4L224.8,312.2zM217.4,312.4L216,316.1L224.8,312.2zM213.1,323.5L220.1,323.4L221.6,319.6zM210.2,331.0L216.9,330.8L218.5,327.1zM207.2,338.4L213.8,338.3L215.3,334.5zM207.2,338.4L212.2,342.0L213.8,338.3zM243.7,267.6L252.5,267.4L254.2,263.7zM243.7,267.6L250.8,271.1L252.5,267.4zM240.6,275.0L249.1,274.8L250.8,271.1zM240.6,275.0L239,278.7L247.4,278.6zM239,278.7L237.4,282.4L247.4,278.6zM237.4,282.4L245.7,282.3L247.4,278.6zM237.4,282.4L244,286.0L245.7,282.3zM235.8,286.2L234.2,289.9L244,286.0zM234.2,289.9L240.6,293.4L242.3,289.7zM232.7,293.6L231.1,297.3L240.6,293.4zM231.1,297.3L238.9,297.2L240.6,293.4zM231.1,297.3L229.5,301.0L237.3,300.9zM231.1,297.3L237.3,300.9L238.9,297.2zM227.9,304.8L235.6,304.6L237.3,300.9zM226.4,308.5L224.8,312.2L233.9,308.3zM224.8,312.2L232.2,312.1L233.9,308.3zM224.8,312.2L223.2,315.9L230.5,315.8zM224.8,312.2L230.5,315.8L232.2,312.1zM223.2,315.9L221.6,319.6L230.5,315.8zM221.6,319.6L228.8,319.5L230.5,315.8zM220.1,323.4L218.5,327.1L227.1,323.2zM218.5,327.1L225.4,326.9L227.1,323.2zM216.9,330.8L215.3,334.5L223.7,330.7zM215.3,334.5L222,334.4L223.7,330.7zM213.8,338.3L212.2,342.0L220.3,338.1zM212.2,342.0L218.6,341.8L220.3,338.1zM254.2,263.7L252.5,267.4L261.3,267.2zM252.5,267.4L250.8,271.1L261.3,267.2zM250.8,271.1L249.1,274.8L257.7,274.7zM250.8,271.1L257.7,274.7L259.5,270.9zM247.4,278.6L254.1,282.1L255.9,278.4zM244,286.0L252.3,285.8L254.1,282.1zM244,286.0L250.4,289.6L252.3,285.8zM242.3,289.7L240.6,293.4L250.4,289.6zM240.6,293.4L248.6,293.3L250.4,289.6zM240.6,293.4L246.8,297.0L248.6,293.3zM238.9,297.2L237.3,300.9L246.8,297.0zM235.6,304.6L233.9,308.3L243.2,304.5zM232.2,312.1L230.5,315.8L239.5,311.9zM227.1,323.2L234.1,323.1L235.9,319.4zM227.1,323.2L232.3,326.8L234.1,323.1zM222,334.4L220.3,338.1L228.6,334.2zM220.3,338.1L226.8,338.0L228.6,334.2zM218.6,341.8L216.9,345.6L225,341.7zM263.2,263.5L261.3,267.2L272.1,263.3zM261.3,267.2L270.2,267.1L272.1,263.3zM261.3,267.2L259.5,270.9L268.2,270.8zM257.7,274.7L266.3,274.5L268.2,270.8zM254.1,282.1L262.4,282.0L264.4,278.2zM254.1,282.1L260.5,285.7L262.4,282.0zM252.3,285.8L250.4,289.6L260.5,285.7zM250.4,289.6L258.5,289.4L260.5,285.7zM250.4,289.6L256.6,293.1L258.5,289.4zM248.6,293.3L246.8,297.0L256.6,293.1zM246.8,297.0L254.7,296.9L256.6,293.1zM246.8,297.0L252.7,300.6L254.7,296.9zM243.2,304.5L250.8,304.3L252.7,300.6zM243.2,304.5L241.3,308.2L248.8,308.0zM239.5,311.9L237.7,315.6L245,315.5zM235.9,319.4L234.1,323.1L241.1,322.9zM234.1,323.1L232.3,326.8L241.1,322.9zM232.3,326.8L237.2,330.4L239.1,326.7zM228.6,334.2L226.8,338.0L233.3,337.8zM228.6,334.2L233.3,337.8L235.3,334.1zM225,341.7L231.4,341.6L233.3,337.8zM272.1,263.3L279,266.9L281.1,263.2zM270.2,267.1L268.2,270.8L279,266.9zM268.2,270.8L266.3,274.5L274.9,274.3zM268.2,270.8L274.9,274.3L276.9,270.6zM266.3,274.5L264.4,278.2L274.9,274.3zM264.4,278.2L262.4,282.0L270.8,281.8zM262.4,282.0L260.5,285.7L270.8,281.8zM260.5,285.7L258.5,289.4L266.6,289.2zM260.5,285.7L266.6,289.2L268.7,285.5zM258.5,289.4L256.6,293.1L266.6,289.2zM256.6,293.1L254.7,296.9L262.5,296.7zM254.7,296.9L252.7,300.6L262.5,296.7zM252.7,300.6L260.4,300.4L262.5,296.7zM252.7,300.6L250.8,304.3L258.4,304.2zM246.9,311.8L245,315.5L254.3,311.6zM245,315.5L250.1,319.1L252.2,315.3zM243,319.2L241.1,322.9L250.1,319.1zM241.1,322.9L239.1,326.7L246,326.5zM241.1,322.9L246,326.5L248.1,322.8zM237.2,330.4L235.3,334.1L241.9,334.0zM237.2,330.4L241.9,334.0L244,330.2zM235.3,334.1L233.3,337.8L241.9,334.0zM233.3,337.8L237.8,341.4L239.8,337.7zM229.4,345.3L235.7,345.1L237.8,341.4zM274.9,274.3L272.8,278.1L281.3,277.9zM270.8,281.8L279.1,281.6L281.3,277.9zM268.7,285.5L266.6,289.2L276.9,285.4zM266.6,289.2L274.7,289.1L276.9,285.4zM266.6,289.2L272.5,292.8L274.7,289.1zM264.6,293.0L262.5,296.7L272.5,292.8zM262.5,296.7L260.4,300.4L268.2,300.3zM256.3,307.9L254.3,311.6L263.8,307.7zM254.3,311.6L252.2,315.3L259.5,315.2zM254.3,311.6L259.5,315.2L261.6,311.5zM250.1,319.1L255.1,322.6L257.3,318.9zM246,326.5L252.9,326.4L255.1,322.6zM244,330.2L241.9,334.0L250.7,330.1zM241.9,334.0L239.8,337.7L246.4,337.5zM237.8,341.4L244.2,341.3L246.4,337.5zM237.8,341.4L235.7,345.1L242,345.0zM237.8,341.4L242,345.0L244.2,341.3zM281.3,277.9L279.1,281.6L287.9,281.4zM276.9,285.4L286.5,285.1L287.9,281.4zM276.9,285.4L274.7,289.1L285.1,288.8zM270.4,296.5L268.2,300.3L282.2,296.2zM268.2,300.3L266,304.0L279.4,303.6zM268.2,300.3L279.4,303.6L280.8,299.9zM266,304.0L263.8,307.7L279.4,303.6zM263.8,307.7L277.9,307.3L279.4,303.6zM263.8,307.7L261.6,311.5L276.5,311.0zM261.6,311.5L259.5,315.2L276.5,311.0zM259.5,315.2L275.1,314.7L276.5,311.0zM257.3,318.9L255.1,322.6L273.7,318.5zM255.1,322.6L272.2,322.2L273.7,318.5zM250.7,330.1L269.4,329.6L270.8,325.9zM250.7,330.1L248.5,333.8L268,333.3zM246.4,337.5L266.5,337.0L268,333.3zM246.4,337.5L265.1,340.7L266.5,337.0zM285.1,288.8L283.6,292.5L294.1,291.5zM280.8,299.9L279.4,303.6L292.7,298.8zM279.4,303.6L291.9,302.5L292.7,298.8zM277.9,307.3L276.5,311.0L291.2,306.2zM276.5,311.0L275.1,314.7L289.7,313.5zM276.5,311.0L289.7,313.5L290.5,309.8zM275.1,314.7L273.7,318.5L289.7,313.5zM270.8,325.9L287.5,324.5L288.2,320.8zM268,333.3L286,331.8L286.8,328.1zM268,333.3L266.5,337.0L285.3,335.4zM268,333.3L285.3,335.4L286,331.8zM266.5,337.0L265.1,340.7L285.3,335.4zM265.1,340.7L284.6,339.1L285.3,335.4zM291.9,302.5L291.2,306.2L303.7,300.7zM291.2,306.2L290.5,309.8L303.5,307.8zM289.7,313.5L303.3,315.0L303.4,311.4zM288.2,320.8L303.2,318.6L303.3,315.0zM288.2,320.8L287.5,324.5L303,322.2zM287.5,324.5L286.8,328.1L303,322.2zM286.8,328.1L302.9,325.7L303,322.2zM286,331.8L285.3,335.4L302.8,329.3zM285.3,335.4L302.7,332.9L302.8,329.3zM285.3,335.4L284.6,339.1L302.6,336.5zM284.6,339.1L283.8,342.7L302.6,336.5zM303.3,315.0L303.2,318.6L317,315.6zM303,322.2L317.5,319.0L317,315.6zM302.9,325.7L302.8,329.3L317.9,322.5zM302.8,329.3L318.4,326.0L317.9,322.5zM302.8,329.3L302.7,332.9L318.8,329.4zM302.7,332.9L302.6,336.5L318.8,329.4zM318.4,326.0L318.8,329.4L332.7,321.8z"/><path fill="#3342a8" d="M129,273.4L137.6,277.0L137.7,273.2zM129,277.1L129,280.8L137.6,277.0zM129,295.6L137,295.5L137.1,291.8zM129,303.0L136.6,306.6L136.7,302.9zM129,310.5L136.4,314.0L136.5,310.3zM129,332.7L135.6,336.2L135.8,332.5zM129,336.4L129,340.1L135.6,336.2zM137.3,284.4L145.4,287.9L145.7,284.2zM136.6,306.6L144.2,306.4L144.5,302.7zM136.5,310.3L136.4,314.0L144,310.2zM136.4,314.0L143.5,317.6L143.7,313.9zM136.1,321.4L143,325.0L143.3,321.3zM135.9,328.8L142.8,328.7L143,325.0zM135.4,343.7L141.8,343.5L142,339.8zM135.4,343.7L141.6,347.2L141.8,343.5zM146.4,273.1L155.1,272.9L155.5,269.2zM146.4,273.1L146.2,276.8L154.7,276.6zM144,310.2L151.1,313.7L151.5,310.0zM143.5,317.6L143.3,321.3L150.4,321.1zM143,325.0L150,324.8L150.4,321.1zM142.3,336.1L142,339.8L148.9,336.0zM142,339.8L148.6,339.7L148.9,336.0zM154,284.0L162.4,283.9L162.8,280.2zM152.6,298.9L159.9,302.4L160.4,298.7zM150.4,321.1L157,324.7L157.5,321.0zM148.2,343.4L147.8,347.1L154.1,346.9zM162.8,280.2L171.3,280.0L171.9,276.3zM162.8,280.2L162.4,283.9L170.7,283.7zM159,309.8L166.4,309.7L167.1,306.0zM158,317.3L165.2,317.1L165.8,313.4zM156.5,328.4L156.1,332.1L163.4,328.3zM169.5,291.1L177.6,291.0L178.3,287.3zM168.9,294.9L168.3,298.6L176.8,294.7zM167.1,306.0L173.9,309.5L174.7,305.8zM166.4,309.7L165.8,313.4L173.9,309.5zM165.8,313.4L173.2,313.3L173.9,309.5zM165.8,313.4L165.2,317.1L172.5,317.0zM165.8,313.4L172.5,317.0L173.2,313.3zM164.6,320.8L164,324.5L171,324.4zM161.6,339.4L161,343.1L168.1,339.2zM182.7,265.0L181.9,268.7L190.8,268.5zM176.1,298.4L175.4,302.1L184,298.3zM172.5,317.0L171.8,320.7L178.9,320.5zM169.6,331.8L168.8,335.5L175.5,335.4zM168.8,335.5L168.1,339.2L175.5,335.4zM168.1,339.2L174.6,339.1L175.5,335.4zM168.1,339.2L173.8,342.8L174.6,339.1zM167.4,343.0L166.7,346.7L173.8,342.8zM166.7,346.7L172.9,346.5L173.8,342.8zM190.8,268.5L189.9,272.3L198.6,272.1zM189.9,272.3L189.1,276.0L198.6,272.1zM187.4,283.4L194.7,287.0L195.7,283.2zM185.7,290.8L192.8,294.4L193.8,290.7zM184,298.3L183.1,302.0L190.9,301.8zM178,324.2L177.2,328.0L185,324.1zM175.5,335.4L182.1,335.2L183.1,331.5zM200.6,264.7L208.4,268.2L209.5,264.5zM199.6,268.4L198.6,272.1L208.4,268.2zM188.9,309.2L196.4,309.1L197.5,305.4zM186,320.4L185,324.1L193.1,320.2zM199.7,297.9L206.3,301.5L207.5,297.8zM198.6,301.7L197.5,305.4L206.3,301.5zM195.3,312.8L194.2,316.5L201.5,316.4zM191,327.7L196.6,331.2L197.8,327.5zM188.8,335.1L187.7,338.8L194.2,338.7zM186.6,342.5L193,342.4L194.2,338.7zM211.2,286.6L219.4,286.5L220.7,282.8zM203.9,308.9L211.4,308.8L212.7,305.1zM203.9,308.9L210.1,312.5L211.4,308.8zM197.8,327.5L196.6,331.2L204.7,327.4zM191.8,346.1L198.1,346.0L199.4,342.3zM220.7,282.8L219.4,286.5L227.6,286.3zM219.4,286.5L218.1,290.2L227.6,286.3zM218.1,290.2L226.2,290.0L227.6,286.3zM212.7,305.1L218.9,308.6L220.3,304.9zM207.4,319.9L213.1,323.5L214.5,319.8zM234.9,267.7L233.4,271.4L243.7,267.6zM229.1,282.6L227.6,286.3L237.4,282.4zM224.7,293.8L231.1,297.3L232.7,293.6zM221.8,301.2L220.3,304.9L227.9,304.8zM218.9,308.6L226.4,308.5L227.9,304.8zM216,316.1L221.6,319.6L223.2,315.9zM205.8,342.1L204.3,345.8L212.2,342.0zM204.3,345.8L210.6,345.7L212.2,342.0zM245.3,263.8L243.7,267.6L254.2,263.7zM243.7,267.6L242.1,271.3L250.8,271.1zM229.5,301.0L227.9,304.8L237.3,300.9zM227.9,304.8L233.9,308.3L235.6,304.6zM221.6,319.6L220.1,323.4L227.1,323.2zM221.6,319.6L227.1,323.2L228.8,319.5zM218.5,327.1L216.9,330.8L223.7,330.7zM218.5,327.1L223.7,330.7L225.4,326.9zM215.3,334.5L220.3,338.1L222,334.4zM212.2,342.0L210.6,345.7L216.9,345.6zM254.2,263.7L261.3,267.2L263.2,263.5zM250.8,271.1L259.5,270.9L261.3,267.2zM249.1,274.8L247.4,278.6L257.7,274.7zM247.4,278.6L255.9,278.4L257.7,274.7zM237.3,300.9L245,300.7L246.8,297.0zM233.9,308.3L241.3,308.2L243.2,304.5zM233.9,308.3L232.2,312.1L239.5,311.9zM233.9,308.3L239.5,311.9L241.3,308.2zM230.5,315.8L237.7,315.6L239.5,311.9zM230.5,315.8L228.8,319.5L235.9,319.4zM223.7,330.7L228.6,334.2L230.4,330.5zM220.3,338.1L225,341.7L226.8,338.0zM243.2,304.5L248.8,308.0L250.8,304.3zM239.5,311.9L246.9,311.8L248.8,308.0zM235.9,319.4L243,319.2L245,315.5zM226.8,338.0L225,341.7L233.3,337.8zM225,341.7L229.4,345.3L231.4,341.6zM264.4,278.2L270.8,281.8L272.8,278.1zM252.7,300.6L258.4,304.2L260.4,300.4zM248.8,308.0L256.3,307.9L258.4,304.2zM248.8,308.0L246.9,311.8L254.3,311.6zM245,315.5L243,319.2L250.1,319.1zM233.3,337.8L239.8,337.7L241.9,334.0zM262.5,296.7L270.4,296.5L272.5,292.8zM262.5,296.7L268.2,300.3L270.4,296.5zM241.9,334.0L246.4,337.5L248.5,333.8zM268.2,300.3L280.8,299.9L282.2,296.2zM255.1,322.6L270.8,325.9L272.2,322.2zM252.9,326.4L250.7,330.1L270.8,325.9zM250.7,330.1L268,333.3L269.4,329.6zM248.5,333.8L246.4,337.5L268,333.3zM273.7,318.5L289,317.1L289.7,313.5zM285.3,335.4L302.6,336.5L302.7,332.9zM302.6,336.5L319.2,332.9L318.8,329.4zM302.6,336.5L302.5,340.0L319.7,336.4zM302.6,336.5L319.7,336.4L319.2,332.9z"/><path fill="#3d4fb2" d="M129,280.8L137.5,280.7L137.6,277.0zM129,284.5L129,288.2L137.3,284.4zM129,288.2L129,291.9L137.1,291.8zM129,295.6L136.9,299.2L137,295.5zM129,303.0L136.7,302.9L136.9,299.2zM129,303.0L129,306.8L136.6,306.6zM129,306.8L129,310.5L136.6,306.6zM129,314.2L129,317.9L136.4,314.0zM129,317.9L129,321.6L136.1,321.4zM129,317.9L136.1,321.4L136.2,317.7zM129,321.6L129,325.3L136.1,321.4zM129,325.3L136,325.1L136.1,321.4zM129,325.3L135.9,328.8L136,325.1zM129,332.7L135.8,332.5L135.9,328.8zM129,332.7L129,336.4L135.6,336.2zM129,340.1L129,343.8L135.4,343.7zM137.6,277.0L146.2,276.8L146.4,273.1zM137.6,277.0L137.5,280.7L145.9,280.5zM137.6,277.0L145.9,280.5L146.2,276.8zM137.5,280.7L137.3,284.4L145.9,280.5zM137.3,284.4L145.7,284.2L145.9,280.5zM137.3,284.4L137.2,288.1L145.4,287.9zM137.2,288.1L137.1,291.8L145.4,287.9zM137.1,291.8L145.2,291.6L145.4,287.9zM137.1,291.8L137,295.5L144.9,295.3zM137,295.5L136.9,299.2L144.9,295.3zM136.9,299.2L136.7,302.9L144.5,302.7zM136.6,306.6L136.5,310.3L144,310.2zM136.6,306.6L144,310.2L144.2,306.4zM136.4,314.0L143.7,313.9L144,310.2zM136.1,321.4L143.3,321.3L143.5,317.6zM136.1,321.4L136,325.1L143,325.0zM135.9,328.8L135.8,332.5L142.5,332.4zM135.8,332.5L135.6,336.2L142.5,332.4zM135.6,336.2L142.3,336.1L142.5,332.4zM135.6,336.2L142,339.8L142.3,336.1zM146.4,273.1L154.7,276.6L155.1,272.9zM145.9,280.5L154.4,280.3L154.7,276.6zM145.9,280.5L145.7,284.2L154,284.0zM145.4,287.9L145.2,291.6L153.3,291.5zM144.9,295.3L144.7,299.0L152.6,298.9zM144.5,302.7L152.2,302.6L152.6,298.9zM144.2,306.4L144,310.2L151.8,306.3zM142.8,328.7L142.5,332.4L149.7,328.5zM142.5,332.4L142.3,336.1L148.9,336.0zM142.5,332.4L148.9,336.0L149.3,332.2zM142,339.8L141.8,343.5L148.2,343.4zM142,339.8L148.2,343.4L148.6,339.7zM154.4,280.3L154,284.0L162.8,280.2zM154,284.0L161.9,287.6L162.4,283.9zM153.3,291.5L152.9,295.2L160.9,295.0zM152.6,298.9L152.2,302.6L159.9,302.4zM151.8,306.3L151.5,310.0L159,309.8zM151.5,310.0L151.1,313.7L159,309.8zM151.1,313.7L158,317.3L158.5,313.6zM150.7,317.4L150.4,321.1L158,317.3zM149.7,328.5L149.3,332.2L156.1,332.1zM149.7,328.5L156.1,332.1L156.5,328.4zM148.9,336.0L148.6,339.7L155.1,339.5zM148.6,339.7L148.2,343.4L155.1,339.5zM164.8,265.3L164.3,269.0L173.1,268.9zM163.3,276.5L162.8,280.2L171.9,276.3zM162.8,280.2L170.7,283.7L171.3,280.0zM162.4,283.9L161.9,287.6L170.7,283.7zM161.9,287.6L170.1,287.4L170.7,283.7zM161.9,287.6L169.5,291.1L170.1,287.4zM161.4,291.3L160.9,295.0L169.5,291.1zM160.9,295.0L160.4,298.7L168.3,298.6zM160.9,295.0L168.3,298.6L168.9,294.9zM160.4,298.7L159.9,302.4L168.3,298.6zM158.5,313.6L158,317.3L165.8,313.4zM158,317.3L157.5,321.0L164.6,320.8zM158,317.3L164.6,320.8L165.2,317.1zM157.5,321.0L157,324.7L164.6,320.8zM157,324.7L164,324.5L164.6,320.8zM157,324.7L156.5,328.4L163.4,328.3zM156.1,332.1L162.8,332.0L163.4,328.3zM155.6,335.8L155.1,339.5L162.2,335.7zM155.1,339.5L161,343.1L161.6,339.4zM173.1,268.9L181.9,268.7L182.7,265.0zM173.1,268.9L181.2,272.4L181.9,268.7zM171.9,276.3L179.8,279.8L180.5,276.1zM170.7,283.7L179,283.6L179.8,279.8zM170.7,283.7L170.1,287.4L178.3,287.3zM170.7,283.7L178.3,287.3L179,283.6zM170.1,287.4L169.5,291.1L178.3,287.3zM169.5,291.1L176.8,294.7L177.6,291.0zM167.1,306.0L166.4,309.7L173.9,309.5zM165.2,317.1L164.6,320.8L172.5,317.0zM164.6,320.8L171.8,320.7L172.5,317.0zM163.4,328.3L169.6,331.8L170.3,328.1zM161,343.1L160.4,346.8L166.7,346.7zM181.2,272.4L180.5,276.1L189.1,276.0zM180.5,276.1L179.8,279.8L189.1,276.0zM178.3,287.3L186.5,287.1L187.4,283.4zM178.3,287.3L185.7,290.8L186.5,287.1zM176.8,294.7L184,298.3L184.8,294.5zM175.4,302.1L182.3,305.7L183.1,302.0zM174.7,305.8L173.9,309.5L182.3,305.7zM173.9,309.5L173.2,313.3L180.6,313.1zM173.9,309.5L180.6,313.1L181.4,309.4zM172.5,317.0L178.9,320.5L179.7,316.8zM171.8,320.7L171,324.4L178.9,320.5zM171,324.4L178,324.2L178.9,320.5zM171,324.4L170.3,328.1L177.2,328.0zM171,324.4L177.2,328.0L178,324.2zM170.3,328.1L169.6,331.8L177.2,328.0zM168.1,339.2L167.4,343.0L173.8,342.8zM191.6,264.8L190.8,268.5L200.6,264.7zM190.8,268.5L198.6,272.1L199.6,268.4zM189.1,276.0L197.6,275.8L198.6,272.1zM189.1,276.0L188.2,279.7L196.7,279.5zM189.1,276.0L196.7,279.5L197.6,275.8zM188.2,279.7L187.4,283.4L196.7,279.5zM187.4,283.4L186.5,287.1L194.7,287.0zM186.5,287.1L185.7,290.8L194.7,287.0zM185.7,290.8L184.8,294.5L192.8,294.4zM184.8,294.5L184,298.3L192.8,294.4zM184,298.3L191.8,298.1L192.8,294.4zM182.3,305.7L189.9,305.5L190.9,301.8zM180.6,313.1L179.7,316.8L187,316.7zM177.2,328.0L176.3,331.7L183.1,331.5zM176.3,331.7L175.5,335.4L183.1,331.5zM175.5,335.4L174.6,339.1L181.2,339.0zM175.5,335.4L181.2,339.0L182.1,335.2zM174.6,339.1L173.8,342.8L181.2,339.0zM173.8,342.8L179.2,346.4L180.2,342.7zM200.6,264.7L199.6,268.4L208.4,268.2zM198.6,272.1L207.3,271.9L208.4,268.2zM198.6,272.1L197.6,275.8L206.2,275.6zM196.7,279.5L205.1,279.4L206.2,275.6zM193.8,290.7L192.8,294.4L201.9,290.5zM192.8,294.4L200.8,294.2L201.9,290.5zM192.8,294.4L199.7,297.9L200.8,294.2zM190.9,301.8L198.6,301.7L199.7,297.9zM187,316.7L193.1,320.2L194.2,316.5zM185,324.1L192,324.0L193.1,320.2zM183.1,331.5L189.9,331.4L191,327.7zM183.1,331.5L182.1,335.2L188.8,335.1zM181.2,339.0L187.7,338.8L188.8,335.1zM181.2,339.0L180.2,342.7L186.6,342.5zM180.2,342.7L179.2,346.4L186.6,342.5zM179.2,346.4L185.5,346.2L186.6,342.5zM208.4,268.2L216,271.8L217.2,268.1zM207.3,271.9L206.2,275.6L216,271.8zM206.2,275.6L214.8,275.5L216,271.8zM206.2,275.6L205.1,279.4L213.6,279.2zM204,283.1L211.2,286.6L212.4,282.9zM203,286.8L201.9,290.5L211.2,286.6zM201.9,290.5L210,290.4L211.2,286.6zM201.9,290.5L208.7,294.1L210,290.4zM199.7,297.9L198.6,301.7L206.3,301.5zM197.5,305.4L205.1,305.2L206.3,301.5zM195.3,312.8L202.7,312.7L203.9,308.9zM192,324.0L191,327.7L199.1,323.8zM188.8,335.1L195.4,335.0L196.6,331.2zM188.8,335.1L194.2,338.7L195.4,335.0zM187.7,338.8L186.6,342.5L194.2,338.7zM186.6,342.5L185.5,346.2L191.8,346.1zM218.4,264.3L217.2,268.1L226.1,267.9zM218.4,264.3L226.1,267.9L227.4,264.2zM216,271.8L224.7,271.6L226.1,267.9zM216,271.8L214.8,275.5L223.4,275.3zM216,271.8L223.4,275.3L224.7,271.6zM213.6,279.2L222.1,279.0L223.4,275.3zM213.6,279.2L212.4,282.9L220.7,282.8zM213.6,279.2L220.7,282.8L222.1,279.0zM210,290.4L208.7,294.1L218.1,290.2zM208.7,294.1L216.7,293.9L218.1,290.2zM207.5,297.8L206.3,301.5L215.4,297.6zM206.3,301.5L212.7,305.1L214.1,301.4zM205.1,305.2L203.9,308.9L212.7,305.1zM203.9,308.9L202.7,312.7L210.1,312.5zM201.5,316.4L208.7,316.2L210.1,312.5zM200.3,320.1L199.1,323.8L207.4,319.9zM196.6,331.2L203.4,331.1L204.7,327.4zM196.6,331.2L195.4,335.0L202.1,334.8zM195.4,335.0L194.2,338.7L202.1,334.8zM193,342.4L191.8,346.1L199.4,342.3zM226.1,267.9L224.7,271.6L233.4,271.4zM223.4,275.3L230.5,278.9L232,275.2zM220.7,282.8L229.1,282.6L230.5,278.9zM218.1,290.2L216.7,293.9L224.7,293.8zM218.1,290.2L224.7,293.8L226.2,290.0zM215.4,297.6L221.8,301.2L223.2,297.5zM214.1,301.4L212.7,305.1L221.8,301.2zM212.7,305.1L220.3,304.9L221.8,301.2zM207.4,319.9L206.1,323.7L213.1,323.5zM206.1,323.7L204.7,327.4L213.1,323.5zM204.7,327.4L211.6,327.2L213.1,323.5zM204.7,327.4L203.4,331.1L210.2,331.0zM202.1,334.8L207.2,338.4L208.7,334.7zM200.7,338.5L199.4,342.3L207.2,338.4zM199.4,342.3L198.1,346.0L204.3,345.8zM236.3,264.0L243.7,267.6L245.3,263.8zM233.4,271.4L242.1,271.3L243.7,267.6zM233.4,271.4L232,275.2L240.6,275.0zM227.6,286.3L226.2,290.0L234.2,289.9zM224.7,293.8L232.7,293.6L234.2,289.9zM224.7,293.8L223.2,297.5L231.1,297.3zM223.2,297.5L221.8,301.2L231.1,297.3zM218.9,308.6L224.8,312.2L226.4,308.5zM216,316.1L223.2,315.9L224.8,312.2zM216,316.1L214.5,319.8L221.6,319.6zM214.5,319.8L213.1,323.5L221.6,319.6zM213.1,323.5L211.6,327.2L218.5,327.1zM213.1,323.5L218.5,327.1L220.1,323.4zM211.6,327.2L210.2,331.0L218.5,327.1zM210.2,331.0L208.7,334.7L215.3,334.5zM210.2,331.0L215.3,334.5L216.9,330.8zM208.7,334.7L207.2,338.4L215.3,334.5zM207.2,338.4L205.8,342.1L212.2,342.0zM242.1,271.3L240.6,275.0L250.8,271.1zM240.6,275.0L247.4,278.6L249.1,274.8zM237.4,282.4L235.8,286.2L244,286.0zM234.2,289.9L242.3,289.7L244,286.0zM234.2,289.9L232.7,293.6L240.6,293.4zM227.9,304.8L226.4,308.5L233.9,308.3zM215.3,334.5L213.8,338.3L220.3,338.1zM212.2,342.0L216.9,345.6L218.6,341.8zM247.4,278.6L245.7,282.3L254.1,282.1zM245.7,282.3L244,286.0L254.1,282.1zM244,286.0L242.3,289.7L250.4,289.6zM240.6,293.4L238.9,297.2L246.8,297.0zM237.3,300.9L235.6,304.6L243.2,304.5zM237.3,300.9L243.2,304.5L245,300.7zM230.5,315.8L235.9,319.4L237.7,315.6zM228.8,319.5L227.1,323.2L235.9,319.4zM227.1,323.2L225.4,326.9L232.3,326.8zM225.4,326.9L223.7,330.7L232.3,326.8zM223.7,330.7L230.4,330.5L232.3,326.8zM223.7,330.7L222,334.4L228.6,334.2zM220.3,338.1L218.6,341.8L225,341.7zM216.9,345.6L223.2,345.4L225,341.7zM261.3,267.2L268.2,270.8L270.2,267.1zM259.5,270.9L257.7,274.7L268.2,270.8zM257.7,274.7L255.9,278.4L264.4,278.2zM257.7,274.7L264.4,278.2L266.3,274.5zM255.9,278.4L254.1,282.1L264.4,278.2zM254.1,282.1L252.3,285.8L260.5,285.7zM250.4,289.6L248.6,293.3L256.6,293.1zM246.8,297.0L245,300.7L252.7,300.6zM245,300.7L243.2,304.5L252.7,300.6zM241.3,308.2L239.5,311.9L248.8,308.0zM239.5,311.9L245,315.5L246.9,311.8zM237.7,315.6L235.9,319.4L245,315.5zM235.9,319.4L241.1,322.9L243,319.2zM232.3,326.8L239.1,326.7L241.1,322.9zM232.3,326.8L230.4,330.5L237.2,330.4zM230.4,330.5L228.6,334.2L237.2,330.4zM228.6,334.2L235.3,334.1L237.2,330.4zM225,341.7L223.2,345.4L229.4,345.3zM272.1,263.3L270.2,267.1L279,266.9zM268.2,270.8L276.9,270.6L279,266.9zM264.4,278.2L272.8,278.1L274.9,274.3zM260.5,285.7L268.7,285.5L270.8,281.8zM256.6,293.1L264.6,293.0L266.6,289.2zM256.6,293.1L262.5,296.7L264.6,293.0zM250.8,304.3L248.8,308.0L258.4,304.2zM248.8,308.0L254.3,311.6L256.3,307.9zM245,315.5L252.2,315.3L254.3,311.6zM241.1,322.9L248.1,322.8L250.1,319.1zM239.1,326.7L237.2,330.4L246,326.5zM237.2,330.4L244,330.2L246,326.5zM233.3,337.8L231.4,341.6L237.8,341.4zM231.4,341.6L229.4,345.3L237.8,341.4zM279,266.9L285.6,270.5L287.8,266.7zM276.9,270.6L274.9,274.3L285.6,270.5zM274.9,274.3L283.5,274.2L285.6,270.5zM274.9,274.3L281.3,277.9L283.5,274.2zM272.8,278.1L270.8,281.8L281.3,277.9zM270.8,281.8L268.7,285.5L276.9,285.4zM270.8,281.8L276.9,285.4L279.1,281.6zM266.6,289.2L264.6,293.0L272.5,292.8zM260.4,300.4L258.4,304.2L268.2,300.3zM258.4,304.2L266,304.0L268.2,300.3zM258.4,304.2L256.3,307.9L263.8,307.7zM258.4,304.2L263.8,307.7L266,304.0zM254.3,311.6L261.6,311.5L263.8,307.7zM252.2,315.3L250.1,319.1L259.5,315.2zM250.1,319.1L257.3,318.9L259.5,315.2zM250.1,319.1L248.1,322.8L255.1,322.6zM248.1,322.8L246,326.5L255.1,322.6zM246,326.5L244,330.2L250.7,330.1zM246,326.5L250.7,330.1L252.9,326.4zM241.9,334.0L248.5,333.8L250.7,330.1zM239.8,337.7L237.8,341.4L246.4,337.5zM281.3,277.9L289.3,277.6L290.8,273.9zM281.3,277.9L287.9,281.4L289.3,277.6zM279.1,281.6L276.9,285.4L287.9,281.4zM276.9,285.4L285.1,288.8L286.5,285.1zM274.7,289.1L272.5,292.8L285.1,288.8zM272.5,292.8L283.6,292.5L285.1,288.8zM272.5,292.8L270.4,296.5L282.2,296.2zM272.5,292.8L282.2,296.2L283.6,292.5zM263.8,307.7L276.5,311.0L277.9,307.3zM259.5,315.2L257.3,318.9L273.7,318.5zM259.5,315.2L273.7,318.5L275.1,314.7zM255.1,322.6L252.9,326.4L270.8,325.9zM246.4,337.5L244.2,341.3L265.1,340.7zM244.2,341.3L242,345.0L265.1,340.7zM242,345.0L263.7,344.4L265.1,340.7zM289.3,277.6L287.9,281.4L297.1,276.9zM287.9,281.4L286.5,285.1L295.6,284.2zM286.5,285.1L285.1,288.8L295.6,284.2zM285.1,288.8L294.9,287.9L295.6,284.2zM285.1,288.8L294.1,291.5L294.9,287.9zM283.6,292.5L282.2,296.2L294.1,291.5zM282.2,296.2L293.4,295.2L294.1,291.5zM282.2,296.2L280.8,299.9L292.7,298.8zM282.2,296.2L292.7,298.8L293.4,295.2zM279.4,303.6L277.9,307.3L291.2,306.2zM279.4,303.6L291.2,306.2L291.9,302.5zM276.5,311.0L290.5,309.8L291.2,306.2zM273.7,318.5L272.2,322.2L288.2,320.8zM273.7,318.5L288.2,320.8L289,317.1zM272.2,322.2L270.8,325.9L288.2,320.8zM270.8,325.9L269.4,329.6L286.8,328.1zM270.8,325.9L286.8,328.1L287.5,324.5zM269.4,329.6L268,333.3L286.8,328.1zM265.1,340.7L263.7,344.4L283.8,342.7zM265.1,340.7L283.8,342.7L284.6,339.1zM294.1,291.5L304.1,290.0L304.2,286.4zM292.7,298.8L303.8,297.1L304,293.5zM291.2,306.2L303.6,304.3L303.7,300.7zM291.2,306.2L303.5,307.8L303.6,304.3zM290.5,309.8L289.7,313.5L303.5,307.8zM289.7,313.5L303.4,311.4L303.5,307.8zM289.7,313.5L289,317.1L303.3,315.0zM289,317.1L288.2,320.8L303.3,315.0zM288.2,320.8L303,322.2L303.2,318.6zM286.8,328.1L286,331.8L302.8,329.3zM286.8,328.1L302.8,329.3L302.9,325.7zM283.8,342.7L302.5,340.0L302.6,336.5zM303.5,307.8L303.4,311.4L316.1,308.6zM303.5,307.8L316.1,308.6L315.7,305.2zM303.3,315.0L316.6,312.1L316.1,308.6zM303,322.2L317.9,322.5L317.5,319.0zM302.8,329.3L318.8,329.4L318.4,326.0zM317,315.6L330.8,315.2L329.8,311.9zM317.9,322.5L332.7,321.8L331.7,318.5zM319.2,332.9L319.7,336.4L334.6,328.5zM319.7,336.4L335.5,331.8L334.6,328.5z"/><path fill="#4155b7" d="M281.1,263.2L279,266.9L290,263.0zM279,266.9L287.8,266.7L290,263.0zM279,266.9L276.9,270.6L285.6,270.5zM290,263.0L287.8,266.7L293.6,266.5zM287.8,266.7L285.6,270.5L293.6,266.5zM285.6,270.5L283.5,274.2L290.8,273.9zM283.5,274.2L281.3,277.9L290.8,273.9zM290.8,273.9L289.3,277.6L297.1,276.9zM287.9,281.4L296.4,280.5L297.1,276.9zM294.1,291.5L293.4,295.2L304,293.5zM294.1,291.5L304,293.5L304.1,290.0zM293.4,295.2L292.7,298.8L304,293.5zM292.7,298.8L291.9,302.5L303.7,300.7zM292.7,298.8L303.7,300.7L303.8,297.1zM304,293.5L313.9,291.3L313.4,287.8zM304,293.5L303.8,297.1L314.3,294.8zM303.8,297.1L303.7,300.7L314.3,294.8zM303.7,300.7L303.6,304.3L315.2,301.7zM303.6,304.3L303.5,307.8L315.2,301.7zM303.5,307.8L315.7,305.2L315.2,301.7zM303.4,311.4L303.3,315.0L316.1,308.6zM303.3,315.0L317,315.6L316.6,312.1zM303.2,318.6L303,322.2L317,315.6zM303,322.2L302.9,325.7L317.9,322.5zM316.6,312.1L317,315.6L328.9,308.5zM317,315.6L329.8,311.9L328.9,308.5zM317,315.6L317.5,319.0L330.8,315.2zM317.9,322.5L331.7,318.5L330.8,315.2zM317.9,322.5L318.4,326.0L332.7,321.8zM318.8,329.4L333.6,325.2L332.7,321.8zM318.8,329.4L319.2,332.9L334.6,328.5zM318.8,329.4L334.6,328.5L333.6,325.2zM332.7,321.8L333.6,325.2L347.2,320.2zM333.6,325.2L334.6,328.5L347.2,320.2zM334.6,328.5L335.5,331.8L350,326.5zM334.6,328.5L350,326.5L348.6,323.3z"/><path fill="#4a62c1" d="M290,263.0L293.6,266.5L295,262.8zM298.6,269.6L304.6,272.1L304.8,268.5zM297.1,276.9L304.4,279.2L304.5,275.7zM295.6,284.2L304.3,282.8L304.4,279.2zM295.6,284.2L304.2,286.4L304.3,282.8zM304.4,279.2L312.1,277.4L311.7,274.0zM304.4,279.2L304.3,282.8L312.6,280.9zM304.2,286.4L313,284.4L312.6,280.9zM304.2,286.4L304.1,290.0L313.4,287.8zM304.1,290.0L304,293.5L313.4,287.8zM304,293.5L314.3,294.8L313.9,291.3zM303.7,300.7L314.8,298.2L314.3,294.8zM314.3,294.8L314.8,298.2L325.1,295.2zM314.3,294.8L325.1,295.2L324.1,291.9zM315.2,301.7L315.7,305.2L327,301.9zM315.7,305.2L316.1,308.6L327,301.9zM316.1,308.6L316.6,312.1L328.9,308.5zM316.1,308.6L328.9,308.5L327.9,305.2zM329.8,311.9L330.8,315.2L341.6,307.5zM330.8,315.2L343,310.6L341.6,307.5zM330.8,315.2L344.4,313.8L343,310.6zM331.7,318.5L332.7,321.8L344.4,313.8zM332.7,321.8L345.8,317.0L344.4,313.8zM332.7,321.8L347.2,320.2L345.8,317.0zM334.6,328.5L348.6,323.3L347.2,320.2zM347.2,320.2L348.6,323.3L361.4,317.4zM347.2,320.2L361.4,317.4L359.7,314.4zM348.6,323.3L350,326.5L361.4,317.4z"/><path fill="#465cbc" d="M285.6,270.5L292.2,270.2L293.6,266.5zM285.6,270.5L290.8,273.9L292.2,270.2zM293.6,266.5L299.3,265.9L300,262.3zM293.6,266.5L292.2,270.2L298.6,269.6zM293.6,266.5L298.6,269.6L299.3,265.9zM292.2,270.2L290.8,273.9L298.6,269.6zM290.8,273.9L297.8,273.2L298.6,269.6zM290.8,273.9L297.1,276.9L297.8,273.2zM287.9,281.4L295.6,284.2L296.4,280.5zM297.1,276.9L304.5,275.7L304.6,272.1zM297.1,276.9L296.4,280.5L304.4,279.2zM296.4,280.5L295.6,284.2L304.4,279.2zM295.6,284.2L294.9,287.9L304.2,286.4zM294.9,287.9L294.1,291.5L304.2,286.4zM304.3,282.8L304.2,286.4L312.6,280.9zM304.2,286.4L313.4,287.8L313,284.4zM303.7,300.7L315.2,301.7L314.8,298.2zM315.2,301.7L326,298.5L325.1,295.2zM316.1,308.6L327.9,305.2L327,301.9zM317.5,319.0L317.9,322.5L330.8,315.2zM330.8,315.2L331.7,318.5L344.4,313.8zM350,326.5L363.2,320.4L361.4,317.4z"/><path fill="#4f68c6" d="M295,262.8L293.6,266.5L300,262.3zM300,262.3L299.3,265.9L304.9,264.9zM300,262.3L304.9,264.9L305,261.3zM299.3,265.9L298.6,269.6L304.9,264.9zM298.6,269.6L304.8,268.5L304.9,264.9zM298.6,269.6L297.8,273.2L304.6,272.1zM297.8,273.2L297.1,276.9L304.6,272.1zM304.9,264.9L310.8,267.0L310.3,263.6zM312.6,280.9L313,284.4L321.3,281.9zM312.6,280.9L321.3,281.9L320.4,278.5zM313,284.4L313.4,287.8L321.3,281.9zM313.4,287.8L323.2,288.5L322.2,285.2zM313.9,291.3L314.3,294.8L323.2,288.5zM314.3,294.8L324.1,291.9L323.2,288.5zM314.8,298.2L315.2,301.7L325.1,295.2zM315.2,301.7L327,301.9L326,298.5zM326,298.5L327,301.9L336.1,294.8zM327,301.9L327.9,305.2L338.9,301.1zM327,301.9L338.9,301.1L337.5,297.9zM327.9,305.2L328.9,308.5L338.9,301.1zM328.9,308.5L341.6,307.5L340.3,304.3zM344.4,313.8L345.8,317.0L357.9,311.4zM344.4,313.8L357.9,311.4L356.1,308.4zM347.2,320.2L359.7,314.4L357.9,311.4z"/><path fill="#536fcb" d="M305,261.3L304.9,264.9L309.9,260.1zM304.9,264.9L310.3,263.6L309.9,260.1zM304.9,264.9L304.8,268.5L310.8,267.0zM304.8,268.5L304.6,272.1L310.8,267.0zM304.6,272.1L311.2,270.5L310.8,267.0zM304.6,272.1L304.5,275.7L311.7,274.0zM304.6,272.1L311.7,274.0L311.2,270.5zM304.5,275.7L304.4,279.2L311.7,274.0zM304.4,279.2L312.6,280.9L312.1,277.4zM311.7,274.0L318.5,271.9L317.5,268.6zM311.7,274.0L312.1,277.4L319.4,275.2zM312.1,277.4L312.6,280.9L319.4,275.2zM313.4,287.8L322.2,285.2L321.3,281.9zM313.4,287.8L313.9,291.3L323.2,288.5zM323.2,288.5L324.1,291.9L333.3,288.4zM323.2,288.5L333.3,288.4L331.9,285.3zM324.1,291.9L325.1,295.2L333.3,288.4zM325.1,295.2L326,298.5L336.1,294.8zM325.1,295.2L336.1,294.8L334.7,291.6zM328.9,308.5L340.3,304.3L338.9,301.1zM328.9,308.5L329.8,311.9L341.6,307.5zM341.6,307.5L352.5,302.5L350.7,299.5zM341.6,307.5L354.3,305.5L352.5,302.5zM343,310.6L344.4,313.8L354.3,305.5zM345.8,317.0L347.2,320.2L357.9,311.4zM361.4,317.4L375.2,313.7L373.1,310.9z"/><path fill="#5875cf" d="M309.9,260.1L310.3,263.6L315.6,261.9zM310.3,263.6L310.8,267.0L315.6,261.9zM310.8,267.0L316.6,265.2L315.6,261.9zM312.6,280.9L320.4,278.5L319.4,275.2zM322.2,285.2L323.2,288.5L330.5,282.1zM325.1,295.2L334.7,291.6L333.3,288.4zM327,301.9L337.5,297.9L336.1,294.8zM338.9,301.1L350.7,299.5L348.9,296.5zM340.3,304.3L341.6,307.5L350.7,299.5zM341.6,307.5L343,310.6L354.3,305.5zM344.4,313.8L356.1,308.4L354.3,305.5zM357.9,311.4L370.9,308.1L368.8,305.3zM361.4,317.4L373.1,310.9L370.9,308.1zM361.4,317.4L363.2,320.4L375.2,313.7z"/><path fill="#627fd3" d="M309.9,260.1L315.6,261.9L314.7,258.6zM315.6,261.9L316.6,265.2L322.1,263.1zM315.6,261.9L322.1,263.1L320.7,259.9zM317.5,268.6L323.5,266.2L322.1,263.1zM320.4,278.5L321.3,281.9L327.7,275.7zM321.3,281.9L329.1,278.9L327.7,275.7zM327.7,275.7L336.4,275.5L334.6,272.5zM329.1,278.9L330.5,282.1L336.4,275.5zM330.5,282.1L338.2,278.5L336.4,275.5zM330.5,282.1L331.9,285.3L340,281.5zM336.1,294.8L345.3,290.5L343.6,287.5zM347.1,293.5L348.9,296.5L358.1,291.3zM348.9,296.5L350.7,299.5L358.1,291.3zM352.5,302.5L354.3,305.5L362.4,296.9zM354.3,305.5L364.5,299.7L362.4,296.9zM357.9,311.4L368.8,305.3L366.7,302.5zM368.8,305.3L370.9,308.1L378.7,298.6zM370.9,308.1L383.6,303.8L381.2,301.2zM375.2,313.7L386,306.4L383.6,303.8z"/><path fill="#5d7ad1" d="M310.8,267.0L311.2,270.5L317.5,268.6zM310.8,267.0L317.5,268.6L316.6,265.2zM311.2,270.5L311.7,274.0L317.5,268.6zM311.7,274.0L319.4,275.2L318.5,271.9zM315.6,261.9L320.7,259.9L319.3,256.7zM316.6,265.2L317.5,268.6L322.1,263.1zM317.5,268.6L318.5,271.9L324.9,269.4zM317.5,268.6L324.9,269.4L323.5,266.2zM318.5,271.9L319.4,275.2L324.9,269.4zM319.4,275.2L326.3,272.6L324.9,269.4zM319.4,275.2L320.4,278.5L327.7,275.7zM319.4,275.2L327.7,275.7L326.3,272.6zM321.3,281.9L322.2,285.2L330.5,282.1zM321.3,281.9L330.5,282.1L329.1,278.9zM323.2,288.5L331.9,285.3L330.5,282.1zM330.5,282.1L340,281.5L338.2,278.5zM331.9,285.3L333.3,288.4L340,281.5zM333.3,288.4L341.8,284.5L340,281.5zM333.3,288.4L334.7,291.6L343.6,287.5zM333.3,288.4L343.6,287.5L341.8,284.5zM334.7,291.6L336.1,294.8L343.6,287.5zM336.1,294.8L337.5,297.9L347.1,293.5zM336.1,294.8L347.1,293.5L345.3,290.5zM337.5,297.9L338.9,301.1L347.1,293.5zM338.9,301.1L348.9,296.5L347.1,293.5zM338.9,301.1L340.3,304.3L350.7,299.5zM350.7,299.5L352.5,302.5L362.4,296.9zM354.3,305.5L356.1,308.4L366.7,302.5zM354.3,305.5L366.7,302.5L364.5,299.7zM356.1,308.4L357.9,311.4L366.7,302.5zM357.9,311.4L359.7,314.4L370.9,308.1zM359.7,314.4L361.4,317.4L370.9,308.1z"/><path fill="#6785d6" d="M314.7,258.6L315.6,261.9L319.3,256.7zM319.3,256.7L320.7,259.9L325.7,257.6zM320.7,259.9L322.1,263.1L325.7,257.6zM322.1,263.1L329.3,263.6L327.5,260.6zM323.5,266.2L324.9,269.4L329.3,263.6zM324.9,269.4L331,266.6L329.3,263.6zM324.9,269.4L326.3,272.6L332.8,269.5zM324.9,269.4L332.8,269.5L331,266.6zM326.3,272.6L327.7,275.7L332.8,269.5zM327.7,275.7L329.1,278.9L336.4,275.5zM338.2,278.5L340,281.5L345.3,274.6zM340,281.5L347.5,277.3L345.3,274.6zM343.6,287.5L345.3,290.5L353.9,285.7zM343.6,287.5L353.9,285.7L351.7,282.9zM345.3,290.5L347.1,293.5L353.9,285.7zM347.1,293.5L358.1,291.3L356,288.5zM350.7,299.5L360.3,294.1L358.1,291.3zM350.7,299.5L362.4,296.9L360.3,294.1zM364.5,299.7L366.7,302.5L373.9,293.5zM366.7,302.5L368.8,305.3L378.7,298.6zM366.7,302.5L378.7,298.6L376.3,296.0zM370.9,308.1L381.2,301.2L378.7,298.6zM370.9,308.1L373.1,310.9L383.6,303.8zM373.1,310.9L375.2,313.7L383.6,303.8z"/><path fill="#6d8ad7" d="M319.3,256.7L325.7,257.6L323.9,254.6zM322.1,263.1L327.5,260.6L325.7,257.6zM322.1,263.1L323.5,266.2L329.3,263.6zM327.7,275.7L334.6,272.5L332.8,269.5zM325.7,257.6L330.4,255.0L328.3,252.2zM325.7,257.6L327.5,260.6L332.5,257.8zM325.7,257.6L332.5,257.8L330.4,255.0zM331,266.6L332.8,269.5L336.8,263.4zM332.8,269.5L338.9,266.2L336.8,263.4zM334.6,272.5L336.4,275.5L341.1,269.0zM336.4,275.5L343.2,271.8L341.1,269.0zM340,281.5L341.8,284.5L349.6,280.1zM340,281.5L349.6,280.1L347.5,277.3zM343.6,287.5L351.7,282.9L349.6,280.1zM347.1,293.5L356,288.5L353.9,285.7zM353.9,285.7L356,288.5L364.1,283.1zM358.1,291.3L369,288.3L366.6,285.7zM360.3,294.1L362.4,296.9L369,288.3zM362.4,296.9L371.4,290.9L369,288.3zM362.4,296.9L364.5,299.7L373.9,293.5zM362.4,296.9L373.9,293.5L371.4,290.9zM366.7,302.5L376.3,296.0L373.9,293.5zM383.6,303.8L386,306.4L395.7,298.5z"/><path fill="#7390d9" d="M323.9,254.6L325.7,257.6L328.3,252.2zM327.5,260.6L329.3,263.6L332.5,257.8zM329.3,263.6L334.7,260.6L332.5,257.8zM329.3,263.6L331,266.6L336.8,263.4zM329.3,263.6L336.8,263.4L334.7,260.6zM332.8,269.5L341.1,269.0L338.9,266.2zM336.4,275.5L338.2,278.5L345.3,274.6zM336.4,275.5L345.3,274.6L343.2,271.8zM341.8,284.5L343.6,287.5L349.6,280.1zM328.3,252.2L330.4,255.0L334.9,252.1zM330.4,255.0L332.5,257.8L334.9,252.1zM341.1,269.0L347.1,265.1L344.7,262.5zM345.3,274.6L347.5,277.3L354.4,272.8zM349.6,280.1L356.8,275.4L354.4,272.8zM351.7,282.9L353.9,285.7L359.3,278.0zM353.9,285.7L361.7,280.5L359.3,278.0zM353.9,285.7L364.1,283.1L361.7,280.5zM356,288.5L358.1,291.3L364.1,283.1zM378.7,298.6L381.2,301.2L390.3,293.8zM378.7,298.6L390.3,293.8L387.6,291.5zM383.6,303.8L393,296.2L390.3,293.8zM383.6,303.8L395.7,298.5L393,296.2z"/><path fill="#7996d9" d="M332.8,269.5L334.6,272.5L341.1,269.0zM332.5,257.8L337.4,254.7L334.9,252.1zM332.5,257.8L334.7,260.6L339.8,257.3zM332.5,257.8L339.8,257.3L337.4,254.7zM338.9,266.2L341.1,269.0L344.7,262.5zM341.1,269.0L343.2,271.8L349.5,267.6zM341.1,269.0L349.5,267.6L347.1,265.1zM343.2,271.8L345.3,274.6L349.5,267.6zM349.6,280.1L359.3,278.0L356.8,275.4zM358.1,291.3L366.6,285.7L364.1,283.1zM358.1,291.3L360.3,294.1L369,288.3zM366.6,285.7L369,288.3L374.2,279.7zM373.9,293.5L376.3,296.0L384.9,289.1zM373.9,293.5L384.9,289.1L382.3,286.8zM376.3,296.0L378.7,298.6L384.9,289.1zM381.2,301.2L383.6,303.8L390.3,293.8zM429.5,244.2L433,245.1L432.7,235.1z"/><path fill="#809cda" d="M328.3,252.2L334.9,252.1L332.5,249.6zM334.7,260.6L336.8,263.4L339.8,257.3zM336.8,263.4L342.2,259.9L339.8,257.3zM336.8,263.4L338.9,266.2L344.7,262.5zM336.8,263.4L344.7,262.5L342.2,259.9zM345.3,274.6L352,270.2L349.5,267.6zM345.3,274.6L354.4,272.8L352,270.2zM347.5,277.3L349.6,280.1L354.4,272.8zM349.6,280.1L351.7,282.9L359.3,278.0zM332.5,249.6L334.9,252.1L336.5,246.7zM334.9,252.1L339.2,249.1L336.5,246.7zM334.9,252.1L337.4,254.7L341.9,251.4zM337.4,254.7L339.8,257.3L341.9,251.4zM344.7,262.5L350,258.5L347.3,256.1zM349.5,267.6L352,270.2L358.1,265.6zM354.4,272.8L360.7,267.9L358.1,265.6zM356.8,275.4L359.3,278.0L363.4,270.3zM359.3,278.0L368.8,275.0L366.1,272.6zM364.1,283.1L371.5,277.3L368.8,275.0zM369,288.3L376.9,282.0L374.2,279.7zM369,288.3L379.6,284.4L376.9,282.0zM371.4,290.9L373.9,293.5L379.6,284.4zM373.9,293.5L382.3,286.8L379.6,284.4zM378.7,298.6L387.6,291.5L384.9,289.1zM387.6,291.5L390.3,293.8L395.6,283.9zM390.3,293.8L398.5,286.0L395.6,283.9zM390.3,293.8L401.4,288.2L398.5,286.0zM395.7,298.5L404.3,290.3L401.4,288.2zM425.6,253.3L429,254.4L433,245.1zM425.6,253.3L433,245.1L429.5,244.2z"/><path fill="#86a0d7" d="M334.9,252.1L341.9,251.4L339.2,249.1zM339.8,257.3L344.6,253.8L341.9,251.4zM339.8,257.3L342.2,259.9L347.3,256.1zM339.8,257.3L347.3,256.1L344.6,253.8zM342.2,259.9L344.7,262.5L347.3,256.1zM347.1,265.1L349.5,267.6L352.7,260.8zM349.5,267.6L355.4,263.2L352.7,260.8zM352,270.2L354.4,272.8L358.1,265.6zM359.3,278.0L361.7,280.5L368.8,275.0zM361.7,280.5L364.1,283.1L368.8,275.0zM364.1,283.1L366.6,285.7L374.2,279.7zM364.1,283.1L374.2,279.7L371.5,277.3zM369,288.3L371.4,290.9L379.6,284.4zM336.5,246.7L343.3,245.7L340.4,243.6zM341.9,251.4L349.1,250.0L346.2,247.9zM344.6,253.8L347.3,256.1L349.1,250.0zM371.5,277.3L374.2,279.7L378.1,271.2zM376.9,282.0L379.6,284.4L384,275.4zM379.6,284.4L386.9,277.6L384,275.4zM390.3,293.8L393,296.2L401.4,288.2zM393,296.2L395.7,298.5L401.4,288.2z"/><path fill="#8ca4d5" d="M344.7,262.5L347.1,265.1L352.7,260.8zM344.7,262.5L352.7,260.8L350,258.5zM349.5,267.6L358.1,265.6L355.4,263.2zM354.4,272.8L356.8,275.4L363.4,270.3zM354.4,272.8L363.4,270.3L360.7,267.9zM359.3,278.0L366.1,272.6L363.4,270.3zM336.5,246.7L339.2,249.1L343.3,245.7zM341.9,251.4L346.2,247.9L343.3,245.7zM341.9,251.4L344.6,253.8L349.1,250.0zM347.3,256.1L352,252.1L349.1,250.0zM347.3,256.1L354.9,254.2L352,252.1zM350,258.5L352.7,260.8L354.9,254.2zM352.7,260.8L355.4,263.2L360.7,258.5zM358.1,265.6L363.6,260.6L360.7,258.5zM358.1,265.6L360.7,267.9L366.5,262.7zM360.7,267.9L363.4,270.3L366.5,262.7zM363.4,270.3L366.1,272.6L372.3,267.0zM363.4,270.3L372.3,267.0L369.4,264.8zM366.1,272.6L368.8,275.0L372.3,267.0zM368.8,275.0L375.2,269.1L372.3,267.0zM368.8,275.0L378.1,271.2L375.2,269.1zM374.2,279.7L381.1,273.3L378.1,271.2zM374.2,279.7L376.9,282.0L384,275.4zM374.2,279.7L384,275.4L381.1,273.3zM379.6,284.4L382.3,286.8L389.8,279.7zM340.4,243.6L343.3,245.7L344,240.4zM343.3,245.7L347.1,242.2L344,240.4zM343.3,245.7L350.1,244.1L347.1,242.2z"/><path fill="#92a8d4" d="M339.2,249.1L341.9,251.4L343.3,245.7zM347.3,256.1L350,258.5L354.9,254.2zM352.7,260.8L357.8,256.4L354.9,254.2zM352.7,260.8L360.7,258.5L357.8,256.4zM355.4,263.2L358.1,265.6L360.7,258.5zM358.1,265.6L366.5,262.7L363.6,260.6zM363.4,270.3L369.4,264.8L366.5,262.7zM368.8,275.0L371.5,277.3L378.1,271.2zM379.6,284.4L389.8,279.7L386.9,277.6zM346.2,247.9L349.1,250.0L350.1,244.1zM349.1,250.0L353.2,246.0L350.1,244.1zM349.1,250.0L352,252.1L356.3,247.9zM349.1,250.0L356.3,247.9L353.2,246.0zM357.8,256.4L360.7,258.5L362.5,251.6z"/><path fill="#bbbfc6" d="M382.3,286.8L384.9,289.1L389.8,279.7zM387.2,266.6L390.3,268.5L395.9,261.4zM389.4,258.1L397.4,252.6L394,251.2zM390.7,249.9L394,251.2L398,244.2z"/><path fill="#b8bec8" d="M384.9,289.1L392.7,281.8L389.8,279.7zM384,275.4L386.9,277.6L393.4,270.4zM387.2,266.6L395.9,261.4L392.6,259.7zM390.7,249.9L398,244.2L394.6,243.1z"/><path fill="#c2c2c2" d="M384.9,289.1L387.6,291.5L395.6,283.9zM390.3,268.5L393.4,270.4L395.9,261.4zM392.6,259.7L395.9,261.4L397.4,252.6zM397.4,252.6L401.5,245.4L398,244.2zM394.6,243.1L398,244.2L397.9,236.3z"/><path fill="#bfc1c4" d="M384.9,289.1L395.6,283.9L392.7,281.8zM389.4,258.1L392.6,259.7L397.4,252.6z"/><path fill="#98abd2" d="M343.3,245.7L346.2,247.9L350.1,244.1zM354.9,254.2L359.4,249.7L356.3,247.9zM354.9,254.2L357.8,256.4L362.5,251.6zM360.7,258.5L365.6,253.5L362.5,251.6zM360.7,258.5L368.7,255.4L365.6,253.5zM363.6,260.6L366.5,262.7L368.7,255.4zM366.5,262.7L369.4,264.8L374.8,259.1zM369.4,264.8L372.3,267.0L374.8,259.1zM372.3,267.0L375.2,269.1L381,262.9zM372.3,267.0L381,262.9L377.9,261.0zM375.2,269.1L378.1,271.2L381,262.9zM378.1,271.2L387.2,266.6L384.1,264.8zM381.1,273.3L384,275.4L387.2,266.6zM384,275.4L390.3,268.5L387.2,266.6zM347.1,242.2L350.1,244.1L350.6,238.6zM350.1,244.1L357,241.8L353.8,240.2zM353.2,246.0L356.3,247.9L357,241.8zM362.5,251.6L366.7,246.7L363.5,245.1z"/><path fill="#9dafd2" d="M352,252.1L354.9,254.2L356.3,247.9zM354.9,254.2L362.5,251.6L359.4,249.7zM360.7,258.5L363.6,260.6L368.7,255.4zM366.5,262.7L371.8,257.3L368.7,255.4zM366.5,262.7L374.8,259.1L371.8,257.3zM372.3,267.0L377.9,261.0L374.8,259.1zM378.1,271.2L384.1,264.8L381,262.9zM378.1,271.2L381.1,273.3L387.2,266.6zM350.1,244.1L353.2,246.0L357,241.8zM356.3,247.9L359.4,249.7L363.5,245.1zM356.3,247.9L363.5,245.1L360.3,243.4zM362.5,251.6L365.6,253.5L370,248.3zM368.7,255.4L373.2,250.0L370,248.3zM368.7,255.4L371.8,257.3L376.4,251.6zM374.8,259.1L379.7,253.2L376.4,251.6zM374.8,259.1L377.9,261.0L382.9,254.8zM374.8,259.1L382.9,254.8L379.7,253.2zM387.2,266.6L392.6,259.7L389.4,258.1zM357,241.8L360.3,243.4L363.8,238.8zM366.7,246.7L370,248.3L370.5,241.6zM370,248.3L373.9,243.0L370.5,241.6z"/><path fill="#b5bdca" d="M384,275.4L393.4,270.4L390.3,268.5z"/><path fill="#c4bfbd" d="M386.9,277.6L389.8,279.7L393.4,270.4zM389.8,279.7L396.4,272.3L393.4,270.4zM393.4,270.4L399.1,263.0L395.9,261.4zM394,251.2L397.4,252.6L398,244.2z"/><path fill="#d7967d" d="M389.8,279.7L392.7,281.8L399.5,274.2zM392.7,281.8L395.6,283.9L399.5,274.2zM395.6,283.9L398.5,286.0L405.7,277.9zM398.5,286.0L401.4,288.2L405.7,277.9zM393.4,270.4L396.4,272.3L402.3,264.6zM396.4,272.3L399.5,274.2L402.3,264.6zM399.5,274.2L405.6,266.2L402.3,264.6zM405.7,277.9L412,269.5L408.8,267.9zM405.7,277.9L415.3,271.1L412,269.5zM411.9,281.7L418.5,272.8L415.3,271.1zM395.9,261.4L399.1,263.0L404.1,255.4zM399.1,263.0L402.3,264.6L404.1,255.4zM402.3,264.6L407.4,256.8L404.1,255.4zM402.3,264.6L410.8,258.1L407.4,256.8zM405.6,266.2L408.8,267.9L410.8,258.1zM408.8,267.9L412,269.5L417.5,260.9zM408.8,267.9L417.5,260.9L414.1,259.5zM412,269.5L415.3,271.1L417.5,260.9zM415.3,271.1L420.8,262.3L417.5,260.9zM415.3,271.1L424.2,263.6L420.8,262.3zM404.1,255.4L411.8,248.8L408.3,247.6zM410.8,258.1L415.2,249.9L411.8,248.8zM410.8,258.1L414.1,259.5L418.7,251.0zM410.8,258.1L418.7,251.0L415.2,249.9zM417.5,260.9L420.8,262.3L425.6,253.3zM420.8,262.3L424.2,263.6L425.6,253.3zM424.2,263.6L429,254.4L425.6,253.3zM401.5,245.4L404.9,246.5L404.9,238.0zM404.9,246.5L408.3,247.6L411.9,239.8zM415.2,249.9L418.7,251.0L419,241.6zM418.7,251.0L422.5,242.4L419,241.6zM418.7,251.0L422.1,252.1L426,243.3zM418.7,251.0L426,243.3L422.5,242.4zM422.1,252.1L425.6,253.3L426,243.3zM425.6,253.3L429.5,244.2L426,243.3z"/><path fill="#d79b83" d="M389.8,279.7L399.5,274.2L396.4,272.3zM393.4,270.4L402.3,264.6L399.1,263.0zM399.5,274.2L408.8,267.9L405.6,266.2zM397.4,252.6L404.9,246.5L401.5,245.4zM400.7,254.0L404.1,255.4L404.9,246.5zM417.5,260.9L422.1,252.1L418.7,251.0zM411.8,248.8L415.2,249.9L419,241.6z"/><path fill="#d69177" d="M395.6,283.9L402.6,276.0L399.5,274.2zM395.6,283.9L405.7,277.9L402.6,276.0zM401.4,288.2L408.8,279.8L405.7,277.9zM399.5,274.2L402.6,276.0L408.8,267.9zM402.6,276.0L405.7,277.9L408.8,267.9zM405.7,277.9L408.8,279.8L415.3,271.1zM408.8,279.8L411.9,281.7L415.3,271.1zM395.9,261.4L404.1,255.4L400.7,254.0zM402.3,264.6L405.6,266.2L410.8,258.1zM408.8,267.9L414.1,259.5L410.8,258.1zM415.3,271.1L418.5,272.8L424.2,263.6zM397.4,252.6L400.7,254.0L404.9,246.5zM404.1,255.4L408.3,247.6L404.9,246.5zM404.1,255.4L407.4,256.8L411.8,248.8zM407.4,256.8L410.8,258.1L411.8,248.8zM414.1,259.5L417.5,260.9L418.7,251.0zM417.5,260.9L425.6,253.3L422.1,252.1zM404.9,246.5L411.9,239.8L408.4,238.9zM408.3,247.6L411.8,248.8L411.9,239.8zM411.8,248.8L415.5,240.7L411.9,239.8zM411.8,248.8L419,241.6L415.5,240.7z"/><path fill="#c75e4b" d="M401.4,288.2L404.3,290.3L411.9,281.7zM401.4,288.2L411.9,281.7L408.8,279.8z"/><path fill="#96abd9" d="M344,240.4L347.1,242.2L350.6,238.6zM344,240.4L350.6,238.6L347.3,236.9z"/><path fill="#9bafd7" d="M350.1,244.1L353.8,240.2L350.6,238.6zM347.3,236.9L350.6,238.6L350.4,233.3zM350.6,238.6L353.8,234.7L350.4,233.3zM350.6,238.6L357.1,236.1L353.8,234.7zM350.4,233.3L353.8,234.7L356.6,230.7z"/><path fill="#a2b3d1" d="M356.3,247.9L360.3,243.4L357,241.8zM359.4,249.7L362.5,251.6L363.5,245.1zM362.5,251.6L370,248.3L366.7,246.7zM365.6,253.5L368.7,255.4L370,248.3zM368.7,255.4L376.4,251.6L373.2,250.0zM371.8,257.3L374.8,259.1L376.4,251.6zM377.9,261.0L381,262.9L382.9,254.8zM381,262.9L386.1,256.5L382.9,254.8zM381,262.9L384.1,264.8L389.4,258.1zM384.1,264.8L387.2,266.6L389.4,258.1zM360.3,243.4L363.5,245.1L363.8,238.8zM363.5,245.1L367.2,240.2L363.8,238.8zM363.5,245.1L366.7,246.7L370.5,241.6zM363.5,245.1L370.5,241.6L367.2,240.2zM370,248.3L373.2,250.0L377.2,244.4zM370,248.3L377.2,244.4L373.9,243.0zM376.4,251.6L380.6,245.7L377.2,244.4zM386.1,256.5L389.4,258.1L390.7,249.9zM389.4,258.1L394,251.2L390.7,249.9zM373.9,243.0L377.2,244.4L377.3,237.5zM377.2,244.4L380.6,245.7L384.2,239.7z"/><path fill="#a7b6d2" d="M381,262.9L389.4,258.1L386.1,256.5zM373.2,250.0L376.4,251.6L377.2,244.4zM376.4,251.6L379.7,253.2L383.9,247.1zM376.4,251.6L383.9,247.1L380.6,245.7zM379.7,253.2L382.9,254.8L383.9,247.1zM382.9,254.8L387.3,248.5L383.9,247.1zM382.9,254.8L386.1,256.5L390.7,249.9zM382.9,254.8L390.7,249.9L387.3,248.5zM380.6,245.7L383.9,247.1L384.2,239.7zM383.9,247.1L387.7,240.9L384.2,239.7z"/><path fill="#a1b3d6" d="M350.6,238.6L353.8,240.2L357.1,236.1zM353.8,240.2L357,241.8L357.1,236.1zM357,241.8L360.5,237.5L357.1,236.1zM357,241.8L363.8,238.8L360.5,237.5zM350.4,233.3L356.6,230.7L353.2,229.6zM353.8,234.7L357.1,236.1L356.6,230.7zM360.5,237.5L363.8,238.8L363.5,233.0zM353.2,229.6L356.6,230.7L355.7,225.7zM370.3,200.2L373.9,199.8L373.8,191.1zM370.2,191.5L373.8,191.1L370.1,182.8z"/><path fill="#c5bdb8" d="M395.9,261.4L400.7,254.0L397.4,252.6zM398,244.2L401.5,245.4L404.9,238.0z"/><path fill="#a6b7d6" d="M357.1,236.1L360.1,231.8L356.6,230.7zM363.8,238.8L367.2,240.2L370.4,235.2zM367.2,240.2L370.5,241.6L370.4,235.2zM370.5,241.6L373.9,236.4L370.4,235.2zM370.5,241.6L373.9,243.0L377.3,237.5zM356.6,230.7L359.2,226.6L355.7,225.7zM363.5,233.0L367,234.1L369.7,229.3zM367,234.1L370.4,235.2L369.7,229.3zM355.7,225.7L361.4,222.4L357.8,221.8zM357.8,221.8L361.4,222.4L359.6,217.7zM368.5,223.7L370.4,218.9L366.8,218.5zM364.7,213.8L368.3,214.0L369.4,209.4zM368.3,214.0L371.9,214.1L369.4,209.4zM371.9,214.1L373,209.3L369.4,209.4zM379.2,214.5L380.3,209.3L376.7,209.3zM382.8,214.7L386.4,214.8L383.9,209.2zM369.4,209.4L373.7,204.5L370.1,204.8zM383.9,209.2L388.2,203.6L384.6,203.8zM373.7,204.5L377.3,204.3L377.5,199.4zM381,204.1L381.2,199.0L377.5,199.4zM395.5,203.1L399.4,196.9L395.7,197.3zM370.3,200.2L373.8,191.1L370.2,191.5zM377.5,199.4L381.1,190.3L377.4,190.7zM381.2,199.0L384.8,198.5L381.1,190.3zM384.8,198.5L384.7,189.9L381.1,190.3zM384.8,198.5L388.5,198.1L388.3,189.5zM388.5,198.1L392.1,197.7L388.3,189.5zM435.7,192.8L439.4,192.4L439.2,184.0zM435.7,192.8L439.2,184.0L435.5,184.4zM439.4,192.4L443,192.0L439.2,184.0zM373.8,191.1L377.4,190.7L377.3,182.1zM384.7,189.9L388.3,189.5L384.6,181.3zM388.3,189.5L392,189.2L391.8,180.6z"/><path fill="#aabad7" d="M357.1,236.1L360.5,237.5L363.5,233.0zM357.1,236.1L363.5,233.0L360.1,231.8zM363.8,238.8L367,234.1L363.5,233.0zM363.8,238.8L370.4,235.2L367,234.1zM370.5,241.6L377.3,237.5L373.9,236.4zM356.6,230.7L360.1,231.8L362.7,227.5zM356.6,230.7L362.7,227.5L359.2,226.6zM363.5,233.0L366.2,228.4L362.7,227.5zM363.5,233.0L369.7,229.3L366.2,228.4zM370.4,235.2L373.3,230.1L369.7,229.3zM373.9,236.4L377.3,237.5L376.8,231.0zM377.3,237.5L380.3,231.9L376.8,231.0zM377.3,237.5L380.8,238.6L383.8,232.8zM377.3,237.5L383.8,232.8L380.3,231.9zM384.2,239.7L387.3,233.6L383.8,232.8zM391.1,242.0L394.6,243.1L397.9,236.3zM355.7,225.7L359.2,226.6L361.4,222.4zM362.7,227.5L365,223.0L361.4,222.4zM366.2,228.4L369.7,229.3L368.5,223.7zM369.7,229.3L375.7,225.0L372.1,224.3zM376.8,231.0L380.3,231.9L382.8,226.2zM383.8,232.8L387.3,233.6L389.9,227.5zM383.8,232.8L389.9,227.5L386.4,226.9zM361.4,222.4L363.2,218.1L359.6,217.7zM368.5,223.7L372.1,224.3L374,219.3zM368.5,223.7L374,219.3L370.4,218.9zM372.1,224.3L375.7,225.0L374,219.3zM382.8,226.2L384.8,220.5L381.2,220.1zM382.8,226.2L388.4,220.9L384.8,220.5zM389.9,227.5L392,221.3L388.4,220.9zM389.9,227.5L393.5,228.1L395.6,221.7zM393.5,228.1L397.1,228.8L395.6,221.7zM359.6,217.7L363.2,218.1L364.7,213.8zM363.2,218.1L366.8,218.5L364.7,213.8zM366.8,218.5L370.4,218.9L371.9,214.1zM366.8,218.5L371.9,214.1L368.3,214.0zM370.4,218.9L374,219.3L371.9,214.1zM374,219.3L379.2,214.5L375.6,214.3zM381.2,220.1L384.8,220.5L386.4,214.8zM381.2,220.1L386.4,214.8L382.8,214.7zM384.8,220.5L388.4,220.9L386.4,214.8zM388.4,220.9L390,215.0L386.4,214.8zM364.7,213.8L365.8,209.4L362.1,209.4zM371.9,214.1L376.7,209.3L373,209.3zM379.2,214.5L382.8,214.7L383.9,209.2zM386.4,214.8L387.6,209.2L383.9,209.2zM386.4,214.8L391.2,209.2L387.6,209.2zM362.1,209.4L365.8,209.4L366.4,205.0zM362.1,209.4L366.4,205.0L362.8,205.2zM369.4,209.4L373,209.3L373.7,204.5zM376.7,209.3L380.3,209.3L381,204.1zM376.7,209.3L381,204.1L377.3,204.3zM383.9,209.2L384.6,203.8L381,204.1zM383.9,209.2L387.6,209.2L388.2,203.6zM387.6,209.2L391.2,209.2L388.2,203.6zM391.2,209.2L391.9,203.4L388.2,203.6zM391.2,209.2L394.8,209.1L395.5,203.1zM394.8,209.1L398.5,209.1L395.5,203.1zM398.5,209.1L399.1,202.9L395.5,203.1zM362.8,205.2L366.4,205.0L363,201.0zM366.4,205.0L366.6,200.6L363,201.0zM366.4,205.0L370.1,204.8L370.3,200.2zM366.4,205.0L370.3,200.2L366.6,200.6zM373.7,204.5L373.9,199.8L370.3,200.2zM373.7,204.5L377.5,199.4L373.9,199.8zM377.3,204.3L381,204.1L377.5,199.4zM381,204.1L384.8,198.5L381.2,199.0zM384.6,203.8L388.2,203.6L384.8,198.5zM388.2,203.6L388.5,198.1L384.8,198.5zM388.2,203.6L391.9,203.4L392.1,197.7zM388.2,203.6L392.1,197.7L388.5,198.1zM395.5,203.1L395.7,197.3L392.1,197.7zM395.5,203.1L399.1,202.9L399.4,196.9zM373.9,199.8L377.5,199.4L373.8,191.1zM377.5,199.4L377.4,190.7L373.8,191.1zM384.8,198.5L388.3,189.5L384.7,189.9zM392.1,197.7L392,189.2L388.3,189.5zM392.1,197.7L395.7,197.3L395.6,188.8zM395.7,197.3L399.4,196.9L395.6,188.8zM399.4,196.9L399.2,188.4L395.6,188.8zM443,192.0L442.8,183.6L439.2,184.0zM377.4,190.7L381.1,190.3L377.3,182.1zM381.1,190.3L384.7,189.9L384.6,181.3zM392,189.2L395.6,188.8L391.8,180.6z"/><path fill="#aebdd6" d="M377.2,244.4L380.8,238.6L377.3,237.5zM377.2,244.4L384.2,239.7L380.8,238.6zM360.1,231.8L363.5,233.0L362.7,227.5zM370.4,235.2L373.9,236.4L376.8,231.0zM370.4,235.2L376.8,231.0L373.3,230.1zM380.8,238.6L384.2,239.7L383.8,232.8zM384.2,239.7L390.8,234.5L387.3,233.6zM387.7,240.9L391.1,242.0L390.8,234.5zM391.1,242.0L394.4,235.4L390.8,234.5zM391.1,242.0L397.9,236.3L394.4,235.4zM359.2,226.6L362.7,227.5L361.4,222.4zM362.7,227.5L366.2,228.4L368.5,223.7zM362.7,227.5L368.5,223.7L365,223.0zM369.7,229.3L372.1,224.3L368.5,223.7zM369.7,229.3L373.3,230.1L375.7,225.0zM373.3,230.1L376.8,231.0L375.7,225.0zM383.8,232.8L386.4,226.9L382.8,226.2zM390.8,234.5L393.5,228.1L389.9,227.5zM390.8,234.5L394.4,235.4L397.1,228.8zM390.8,234.5L397.1,228.8L393.5,228.1zM361.4,222.4L365,223.0L366.8,218.5zM361.4,222.4L366.8,218.5L363.2,218.1zM365,223.0L368.5,223.7L366.8,218.5zM379.2,225.6L382.8,226.2L381.2,220.1zM382.8,226.2L386.4,226.9L388.4,220.9zM359.6,217.7L364.7,213.8L361.1,213.6zM366.8,218.5L368.3,214.0L364.7,213.8zM374,219.3L375.6,214.3L371.9,214.1zM374,219.3L377.6,219.7L379.2,214.5zM377.6,219.7L381.2,220.1L379.2,214.5zM381.2,220.1L382.8,214.7L379.2,214.5zM388.4,220.9L392,221.3L393.7,215.2zM388.4,220.9L393.7,215.2L390,215.0zM392,221.3L395.6,221.7L393.7,215.2zM395.6,221.7L397.3,215.4L393.7,215.2zM361.1,213.6L364.7,213.8L362.1,209.4zM364.7,213.8L369.4,209.4L365.8,209.4zM371.9,214.1L375.6,214.3L376.7,209.3zM375.6,214.3L379.2,214.5L376.7,209.3zM379.2,214.5L383.9,209.2L380.3,209.3zM386.4,214.8L390,215.0L391.2,209.2zM390,215.0L393.7,215.2L391.2,209.2zM393.7,215.2L394.8,209.1L391.2,209.2zM393.7,215.2L397.3,215.4L398.5,209.1zM393.7,215.2L398.5,209.1L394.8,209.1zM365.8,209.4L369.4,209.4L366.4,205.0zM369.4,209.4L370.1,204.8L366.4,205.0zM373,209.3L376.7,209.3L373.7,204.5zM376.7,209.3L377.3,204.3L373.7,204.5zM380.3,209.3L383.9,209.2L381,204.1zM391.2,209.2L395.5,203.1L391.9,203.4zM370.1,204.8L373.7,204.5L370.3,200.2zM381,204.1L384.6,203.8L384.8,198.5zM391.9,203.4L395.5,203.1L392.1,197.7zM377.5,199.4L381.2,199.0L381.1,190.3zM392.1,197.7L395.6,188.8L392,189.2z"/><path fill="#aab9d1" d="M383.9,247.1L387.3,248.5L391.1,242.0zM383.9,247.1L391.1,242.0L387.7,240.9zM387.3,248.5L390.7,249.9L391.1,242.0zM390.7,249.9L394.6,243.1L391.1,242.0z"/><path fill="#b2bed3" d="M384.2,239.7L387.7,240.9L390.8,234.5zM376.8,231.0L379.2,225.6L375.7,225.0zM376.8,231.0L382.8,226.2L379.2,225.6zM380.3,231.9L383.8,232.8L382.8,226.2zM387.3,233.6L390.8,234.5L389.9,227.5zM375.7,225.0L377.6,219.7L374,219.3zM375.7,225.0L379.2,225.6L381.2,220.1zM375.7,225.0L381.2,220.1L377.6,219.7zM386.4,226.9L389.9,227.5L388.4,220.9zM389.9,227.5L395.6,221.7L392,221.3zM397.1,228.8L399.2,222.1L395.6,221.7z"/><path fill="#c3c5c9" d="M398,244.2L401.4,237.2L397.9,236.3zM394.4,235.4L397.9,236.3L397.1,228.8zM397.9,236.3L401.4,237.2L404.2,230.0zM397.1,228.8L400.6,229.4L402.8,222.5zM395.6,221.7L400.9,215.5L397.3,215.4zM397.3,215.4L400.9,215.5L398.5,209.1zM402.8,202.7L406.4,202.5L406.6,196.1zM402.8,202.7L406.6,196.1L403,196.5zM403,196.5L406.6,196.1L402.8,188.0zM406.6,196.1L406.5,187.6L402.8,188.0z"/><path fill="#c8c4c2" d="M398,244.2L404.9,238.0L401.4,237.2zM397.9,236.3L404.2,230.0L400.6,229.4zM400.6,229.4L404.2,230.0L402.8,222.5zM402.8,222.5L404.5,215.7L400.9,215.5zM400.9,215.5L405.7,209.0L402.1,209.0zM406.6,196.1L410.3,195.7L410.1,187.2zM406.6,196.1L410.1,187.2L406.5,187.6z"/><path fill="#db9980" d="M404.9,246.5L408.4,238.9L404.9,238.0zM404.9,238.0L411.3,231.3L407.8,230.7zM411.9,239.8L415.5,240.7L418.5,232.6zM411.9,239.8L418.5,232.6L414.9,232.0zM419,241.6L422,233.2L418.5,232.6zM419,241.6L425.6,233.9L422,233.2zM422.5,242.4L426,243.3L425.6,233.9zM426,243.3L429.2,234.5L425.6,233.9zM426,243.3L429.5,244.2L432.7,235.1zM426,243.3L432.7,235.1L429.2,234.5zM404.2,230.0L407.8,230.7L410,223.3zM404.2,230.0L410,223.3L406.4,222.9zM411.3,231.3L413.6,223.7L410,223.3zM411.3,231.3L414.9,232.0L417.3,224.1zM411.3,231.3L417.3,224.1L413.6,223.7zM414.9,232.0L418.5,232.6L417.3,224.1zM418.5,232.6L424.5,224.9L420.9,224.5zM422,233.2L425.6,233.9L424.5,224.9zM425.6,233.9L428.1,225.3L424.5,224.9zM425.6,233.9L431.7,225.7L428.1,225.3zM429.2,234.5L432.7,235.1L431.7,225.7zM432.7,235.1L435.3,226.1L431.7,225.7zM406.4,222.9L410,223.3L408.2,215.9zM410,223.3L413.6,223.7L415.4,216.3zM413.6,223.7L417.3,224.1L415.4,216.3zM424.5,224.9L428.1,225.3L429.9,217.0zM431.7,225.7L433.5,217.1L429.9,217.0zM408.2,215.9L409.3,209.0L405.7,209.0zM408.2,215.9L411.8,216.1L413,208.9zM408.2,215.9L413,208.9L409.3,209.0zM415.4,216.3L416.6,208.9L413,208.9zM415.4,216.3L419,216.4L420.2,208.9zM419,216.4L422.6,216.6L420.2,208.9zM426.3,216.8L429.9,217.0L427.5,208.8zM429.9,217.0L431.1,208.8L427.5,208.8zM429.9,217.0L433.5,217.1L434.8,208.7zM413,208.9L413.7,202.0L410,202.2zM413,208.9L417.3,201.8L413.7,202.0zM420.2,208.9L423.9,208.8L424.6,201.3zM420.2,208.9L424.6,201.3L421,201.5zM427.5,208.8L428.2,201.1L424.6,201.3zM427.5,208.8L431.1,208.8L431.9,200.8zM427.5,208.8L431.9,200.8L428.2,201.1zM431.1,208.8L434.8,208.7L431.9,200.8zM434.8,208.7L435.5,200.6L431.9,200.8zM410,202.2L413.7,202.0L413.9,195.3zM417.3,201.8L417.5,194.9L413.9,195.3zM417.3,201.8L421,201.5L421.2,194.5zM424.6,201.3L428.5,193.6L424.8,194.0zM431.9,200.8L432.1,193.2L428.5,193.6zM431.9,200.8L435.5,200.6L435.7,192.8zM431.9,200.8L435.7,192.8L432.1,193.2zM417.5,194.9L421.2,194.5L417.4,186.4zM421.2,194.5L421,186.0L417.4,186.4zM424.8,194.0L428.5,193.6L424.6,185.6zM428.5,193.6L428.3,185.2L424.6,185.6zM428.5,193.6L431.9,184.8L428.3,185.2z"/><path fill="#c0c4cb" d="M397.9,236.3L400.6,229.4L397.1,228.8zM395.6,221.7L399.2,222.1L400.9,215.5zM400.9,215.5L402.1,209.0L398.5,209.1zM398.5,209.1L402.1,209.0L402.8,202.7zM398.5,209.1L402.8,202.7L399.1,202.9zM399.1,202.9L402.8,202.7L399.4,196.9zM399.4,196.9L403,196.5L402.8,188.0z"/><path fill="#cac1bd" d="M401.4,237.2L404.9,238.0L404.2,230.0zM404.9,238.0L407.8,230.7L404.2,230.0zM404.2,230.0L406.4,222.9L402.8,222.5zM405.7,209.0L409.3,209.0L410,202.2zM405.7,209.0L410,202.2L406.4,202.5z"/><path fill="#db947a" d="M404.9,238.0L408.4,238.9L411.3,231.3zM411.9,239.8L414.9,232.0L411.3,231.3zM415.5,240.7L419,241.6L418.5,232.6zM419,241.6L422.5,242.4L425.6,233.9zM407.8,230.7L411.3,231.3L410,223.3zM418.5,232.6L422,233.2L424.5,224.9zM402.8,222.5L408.2,215.9L404.5,215.7zM410,223.3L411.8,216.1L408.2,215.9zM417.3,224.1L419,216.4L415.4,216.3zM417.3,224.1L420.9,224.5L422.6,216.6zM417.3,224.1L422.6,216.6L419,216.4zM420.9,224.5L424.5,224.9L422.6,216.6zM428.1,225.3L431.7,225.7L429.9,217.0zM404.5,215.7L408.2,215.9L405.7,209.0zM411.8,216.1L415.4,216.3L413,208.9zM415.4,216.3L420.2,208.9L416.6,208.9zM422.6,216.6L423.9,208.8L420.2,208.9zM422.6,216.6L426.3,216.8L427.5,208.8zM422.6,216.6L427.5,208.8L423.9,208.8zM429.9,217.0L434.8,208.7L431.1,208.8zM409.3,209.0L413,208.9L410,202.2zM413,208.9L416.6,208.9L417.3,201.8zM416.6,208.9L420.2,208.9L417.3,201.8zM423.9,208.8L427.5,208.8L424.6,201.3zM413.7,202.0L417.3,201.8L413.9,195.3zM417.3,201.8L421.2,194.5L417.5,194.9zM421,201.5L424.6,201.3L421.2,194.5zM424.6,201.3L428.2,201.1L428.5,193.6zM428.2,201.1L431.9,200.8L428.5,193.6zM435.5,200.6L439.1,200.4L435.7,192.8zM439.1,200.4L439.4,192.4L435.7,192.8zM410.3,195.7L413.9,195.3L410.1,187.2zM413.9,195.3L413.7,186.8L410.1,187.2zM413.9,195.3L417.5,194.9L417.4,186.4zM413.9,195.3L417.4,186.4L413.7,186.8zM421.2,194.5L424.8,194.0L424.6,185.6zM421.2,194.5L424.6,185.6L421,186.0zM428.5,193.6L432.1,193.2L431.9,184.8zM432.1,193.2L435.7,192.8L431.9,184.8z"/><path fill="#dc9e86" d="M408.4,238.9L411.9,239.8L411.3,231.3zM418.5,232.6L420.9,224.5L417.3,224.1zM425.6,233.9L429.2,234.5L431.7,225.7zM402.8,222.5L406.4,222.9L408.2,215.9zM410,223.3L415.4,216.3L411.8,216.1zM424.5,224.9L426.3,216.8L422.6,216.6zM424.5,224.9L429.9,217.0L426.3,216.8zM420.2,208.9L421,201.5L417.3,201.8zM410,202.2L413.9,195.3L410.3,195.7zM424.6,201.3L424.8,194.0L421.2,194.5zM435.7,192.8L435.5,184.4L431.9,184.8z"/><path fill="#7c99de" d="M433,245.1L436.3,235.8L432.7,235.1zM432.7,235.1L436.3,235.8L438.9,226.5zM432.7,235.1L438.9,226.5L435.3,226.1zM433.5,217.1L437.1,217.3L434.8,208.7zM437.1,217.3L438.4,208.7L434.8,208.7zM437.1,217.3L440.7,217.5L442,208.7zM434.8,208.7L439.1,200.4L435.5,200.6zM438.4,208.7L442,208.7L439.1,200.4zM439.1,200.4L442.8,200.1L443,192.0zM439.1,200.4L443,192.0L439.4,192.4z"/><path fill="#c6c6c6" d="M397.1,228.8L402.8,222.5L399.2,222.1zM399.2,222.1L402.8,222.5L400.9,215.5zM400.9,215.5L404.5,215.7L405.7,209.0zM402.1,209.0L405.7,209.0L402.8,202.7zM405.7,209.0L406.4,202.5L402.8,202.7zM406.4,202.5L410,202.2L406.6,196.1zM410,202.2L410.3,195.7L406.6,196.1z"/><path fill="#839fdf" d="M431.7,225.7L435.3,226.1L437.1,217.3zM431.7,225.7L437.1,217.3L433.5,217.1zM435.3,226.1L438.9,226.5L437.1,217.3zM438.9,226.5L440.7,217.5L437.1,217.3zM437.1,217.3L442,208.7L438.4,208.7zM442,208.7L442.8,200.1L439.1,200.4z"/><path fill="#7593dd" d="M434.8,208.7L438.4,208.7L439.1,200.4zM363,201.0L366.5,191.9L362.9,192.3zM370.3,200.2L370.2,191.5L366.5,191.9z"/><path fill="#bcc2cd" d="M402.8,202.7L403,196.5L399.4,196.9z"/><path fill="#6f8ddc" d="M363,201.0L366.6,200.6L366.5,191.9zM366.5,191.9L366.4,183.2L362.8,183.6zM366.5,191.9L370.2,191.5L370.1,182.8z"/><path fill="#6a88da" d="M366.6,200.6L370.3,200.2L366.5,191.9zM362.9,192.3L366.5,191.9L362.8,183.6z"/><path fill="#b9c1cf" d="M399.4,196.9L402.8,188.0L399.2,188.4z"/><path fill="#6c8bdf" d="M366.5,191.9L370.1,182.8L366.4,183.2zM366.4,183.2L370.1,182.8L366.3,174.5zM362.7,174.9L366.3,174.5L362.6,166.2zM366.3,174.5L369.9,174.2L369.8,165.5zM362.4,148.8L366,148.5L365.9,139.8zM366,148.5L369.6,148.2L365.9,139.8zM362.3,140.1L365.9,139.8L362.2,131.4zM362.2,131.4L365.7,122.4L362.1,122.7zM362,114.0L365.6,113.8L365.5,105.1zM365.6,113.8L369.2,113.5L365.5,105.1zM369.2,113.5L369.1,104.8L365.5,105.1zM365.5,105.1L369.1,104.8L369,96.2zM361.8,96.6L365.4,96.4L365.3,87.7zM361.8,96.6L365.3,87.7L361.7,87.9zM365.4,96.4L369,96.2L365.3,87.7zM365.3,87.7L365.2,79.0L361.6,79.2zM365.3,87.7L368.9,87.5L368.7,78.8zM361.6,79.2L365.2,79.0L365.1,70.3zM365.2,79.0L368.7,78.8L365.1,70.3zM361.5,70.5L365.1,70.3L361.4,61.8zM361.4,61.8L365,61.6L364.9,53.0zM361.4,61.8L364.9,53.0L361.3,53.1zM365,61.6L368.5,61.5L364.9,53.0zM364.9,53.0L364.8,44.3L361.2,44.4zM364.9,53.0L368.3,44.2L364.8,44.3zM361.2,44.4L364.6,35.6L361.1,35.7zM368.3,44.2L368.2,35.5L364.6,35.6zM361.1,35.7L364.6,35.6L361,27.0zM364.6,35.6L368.2,35.5L368.1,26.8zM364.6,35.6L368.1,26.8L364.5,26.9z"/><path fill="#a4b7db" d="M373.8,191.1L373.7,182.5L370.1,182.8zM370.1,182.8L373.7,182.5L373.6,173.8zM370.1,182.8L373.6,173.8L369.9,174.2zM369.9,174.2L373.6,173.8L369.8,165.5zM369.8,165.5L373.5,165.2L373.3,156.5zM369.8,165.5L373.3,156.5L369.7,156.8zM373.3,156.5L373.2,147.9L369.6,148.2zM369.6,148.2L373.1,139.2L369.5,139.5zM369.4,130.8L372.9,121.9L369.3,122.2zM369.2,113.5L372.7,104.6L369.1,104.8zM372.7,104.6L372.5,95.9L369,96.2zM369,96.2L372.5,95.9L372.4,87.3zM372.4,87.3L372.3,78.6L368.7,78.8zM368.7,78.8L372.3,78.6L372.2,70.0zM368.7,78.8L372.2,70.0L368.6,70.2zM368.6,70.2L372.2,70.0L368.5,61.5zM372.2,70.0L372.1,61.3L368.5,61.5zM368.2,35.5L371.8,35.4L368.1,26.8z"/><path fill="#aebfdb" d="M373.8,191.1L377.3,182.1L373.7,182.5zM381.1,190.3L384.6,181.3L380.9,181.7zM388.3,189.5L388.2,181.0L384.6,181.3zM388.3,189.5L391.8,180.6L388.2,181.0zM395.6,188.8L395.4,180.2L391.8,180.6zM373.7,182.5L377.3,182.1L373.6,173.8zM377.3,182.1L380.9,181.7L380.8,173.1zM377.3,182.1L380.8,173.1L377.2,173.5zM380.9,181.7L384.6,181.3L380.8,173.1zM384.6,181.3L388.2,181.0L388.1,172.4zM388.2,181.0L391.8,180.6L388.1,172.4zM391.8,180.6L395.3,171.6L391.7,172.0zM373.6,173.8L377.2,173.5L377.1,164.8zM373.6,173.8L377.1,164.8L373.5,165.2zM377.2,173.5L380.8,173.1L377.1,164.8zM380.8,173.1L380.7,164.5L377.1,164.8zM380.8,173.1L384.3,164.1L380.7,164.5zM395.3,171.6L395.2,163.1L391.5,163.4zM377.1,164.8L380.6,155.9L377,156.2zM384.3,164.1L387.9,163.8L387.8,155.2zM387.9,163.8L391.5,163.4L387.8,155.2zM391.5,163.4L391.4,154.9L387.8,155.2zM391.5,163.4L395.2,163.1L395,154.5zM395.2,163.1L398.8,162.7L395,154.5zM398.8,162.7L398.6,154.2L395,154.5zM373.3,156.5L377,156.2L376.8,147.5zM377,156.2L380.6,155.9L376.8,147.5zM380.6,155.9L380.4,147.2L376.8,147.5zM380.6,155.9L384.1,146.9L380.4,147.2zM387.8,155.2L391.4,154.9L391.3,146.3zM373.2,147.9L376.8,147.5L373.1,139.2zM376.8,147.5L380.4,147.2L380.3,138.6zM376.8,147.5L380.3,138.6L376.7,138.9zM380.4,147.2L384.1,146.9L380.3,138.6zM384.1,146.9L383.9,138.3L380.3,138.6zM384.1,146.9L387.5,138.0L383.9,138.3zM387.7,146.6L391.3,146.3L387.5,138.0zM391.3,146.3L394.9,146.0L394.7,137.4zM391.3,146.3L394.7,137.4L391.1,137.7zM373.1,139.2L376.7,138.9L376.6,130.3zM376.7,138.9L380.3,138.6L376.6,130.3zM380.3,138.6L380.2,130.0L376.6,130.3zM380.3,138.6L383.8,129.7L380.2,130.0zM387.5,138.0L387.4,129.4L383.8,129.7zM391.1,137.7L394.7,137.4L391,129.1zM394.7,137.4L394.6,128.9L391,129.1zM394.7,137.4L398.3,137.1L398.2,128.6zM376.6,130.3L376.5,121.6L372.9,121.9zM376.6,130.3L380.2,130.0L380.1,121.4zM380.2,130.0L383.8,129.7L380.1,121.4zM383.8,129.7L387.4,129.4L387.3,120.8zM391,129.1L394.5,120.3L390.9,120.6zM398.2,128.6L398.1,120.0L394.5,120.3zM372.9,121.9L376.5,121.6L376.4,113.0zM372.9,121.9L376.4,113.0L372.8,113.2zM376.5,121.6L380.1,121.4L376.4,113.0zM380.1,121.4L380,112.8L376.4,113.0zM380.1,121.4L383.5,112.5L380,112.8zM387.3,120.8L387.1,112.2L383.5,112.5zM394.5,120.3L398.1,120.0L397.9,111.5zM394.5,120.3L397.9,111.5L394.3,111.8zM383.5,112.5L387.1,112.2L387,103.7zM383.5,112.5L387,103.7L383.4,103.9zM390.7,112.0L394.2,103.2L390.6,103.4zM372.7,104.6L376.1,95.7L372.5,95.9zM379.8,104.1L379.7,95.5L376.1,95.7zM379.8,104.1L383.4,103.9L383.3,95.3zM379.8,104.1L383.3,95.3L379.7,95.5zM387,103.7L386.9,95.1L383.3,95.3zM387,103.7L390.6,103.4L390.5,94.9zM394.2,103.2L397.8,103.0L397.6,94.4zM397.8,103.0L401.3,102.7L397.6,94.4zM376.1,95.7L379.7,95.5L379.6,86.9zM383.3,95.3L383.2,86.7L379.6,86.9zM383.3,95.3L386.9,95.1L386.7,86.5zM390.5,94.9L390.3,86.3L386.7,86.5zM390.5,94.9L393.9,86.1L390.3,86.3zM394,94.6L397.6,94.4L393.9,86.1zM397.6,94.4L401.2,94.2L401,85.7zM397.6,94.4L401,85.7L397.5,85.9zM379.6,86.9L379.5,78.3L375.9,78.5zM379.6,86.9L383.2,86.7L383,78.1zM386.7,86.5L390.3,86.3L390.2,77.7zM386.7,86.5L390.2,77.7L386.6,77.9zM393.9,86.1L393.8,77.5L390.2,77.7zM375.9,78.5L379.5,78.3L379.3,69.6zM375.9,78.5L379.3,69.6L375.8,69.8zM379.5,78.3L383,78.1L379.3,69.6zM383,78.1L386.5,69.3L382.9,69.5zM386.6,77.9L390.2,77.7L386.5,69.3zM390.2,77.7L390,69.1L386.5,69.3zM390.2,77.7L393.8,77.5L393.6,69.0zM390.2,77.7L393.6,69.0L390,69.1zM397.3,77.3L397.2,68.8L393.6,69.0zM372.2,70.0L375.7,61.2L372.1,61.3zM379.3,69.6L382.9,69.5L382.8,60.9zM382.9,69.5L386.5,69.3L382.8,60.9zM386.5,69.3L386.3,60.7L382.8,60.9zM386.5,69.3L390,69.1L389.9,60.6zM390,69.1L393.6,69.0L389.9,60.6zM393.6,69.0L393.5,60.4L389.9,60.6zM375.7,61.2L379.2,61.0L379.1,52.4zM375.7,61.2L379.1,52.4L375.5,52.5zM379.2,61.0L382.8,60.9L379.1,52.4zM386.3,60.7L389.9,60.6L386.2,52.1zM389.9,60.6L389.8,52.0L386.2,52.1zM389.9,60.6L393.5,60.4L393.3,51.9zM397,60.3L400.6,60.1L400.5,51.6zM397,60.3L400.5,51.6L396.9,51.7zM372,52.7L375.5,52.5L375.4,43.9zM379.1,52.4L379,43.8L375.4,43.9zM379.1,52.4L382.7,52.3L382.5,43.7zM379.1,52.4L382.5,43.7L379,43.8zM386.2,52.1L386.1,43.5L382.5,43.7zM386.2,52.1L389.8,52.0L389.6,43.4zM393.3,51.9L393.2,43.3L389.6,43.4zM393.3,51.9L396.9,51.7L396.7,43.2zM375.4,43.9L379,43.8L378.9,35.2zM375.4,43.9L378.9,35.2L375.3,35.3zM379,43.8L382.5,43.7L378.9,35.2zM382.5,43.7L382.4,35.1L378.9,35.2zM382.5,43.7L386.1,43.5L386,35.0zM382.5,43.7L386,35.0L382.4,35.1zM389.6,43.4L389.5,34.8L386,35.0zM389.6,43.4L393.1,34.7L389.5,34.8zM396.7,43.2L400.3,43.1L400.2,34.5zM396.7,43.2L400.2,34.5L396.6,34.6zM378.9,35.2L382.4,35.1L382.3,26.5zM382.4,35.1L386,35.0L382.3,26.5zM386,35.0L385.8,26.4L382.3,26.5zM386,35.0L389.5,34.8L389.4,26.3zM386,35.0L389.4,26.3L385.8,26.4zM393.1,34.7L396.5,26.1L392.9,26.2zM396.6,34.6L400.2,34.5L396.5,26.1z"/><path fill="#b2c1da" d="M381.1,190.3L380.9,181.7L377.3,182.1zM391.8,180.6L395.4,180.2L395.3,171.6zM384.4,172.7L388.1,172.4L384.3,164.1zM388.1,172.4L387.9,163.8L384.3,164.1zM384.3,164.1L387.8,155.2L384.2,155.5zM391.5,163.4L395,154.5L391.4,154.9zM373.3,156.5L376.8,147.5L373.2,147.9zM387.8,155.2L387.7,146.6L384.1,146.9zM391.4,154.9L395,154.5L391.3,146.3zM384.1,146.9L387.7,146.6L387.5,138.0zM394.9,146.0L398.5,145.7L394.7,137.4zM398.5,145.7L402,136.8L398.3,137.1zM387.4,129.4L391,129.1L387.3,120.8zM391,129.1L390.9,120.6L387.3,120.8zM383.7,121.1L387.3,120.8L383.5,112.5zM387.3,120.8L390.7,112.0L387.1,112.2zM376.4,113.0L380,112.8L379.8,104.1zM383.5,112.5L383.4,103.9L379.8,104.1zM397.9,111.5L397.8,103.0L394.2,103.2zM397.9,111.5L401.3,102.7L397.8,103.0zM376.1,95.7L376,87.1L372.4,87.3zM393.9,86.1L397.3,77.3L393.8,77.5zM397.5,85.9L401,85.7L397.3,77.3zM383,78.1L386.6,77.9L386.5,69.3zM375.8,69.8L379.3,69.6L375.7,61.2zM375.7,61.2L375.5,52.5L372,52.7zM382.8,60.9L386.3,60.7L386.2,52.1zM372,52.7L375.4,43.9L371.9,44.0zM375.5,52.5L379.1,52.4L375.4,43.9zM371.9,44.0L375.4,43.9L371.8,35.4zM375.4,43.9L375.3,35.3L371.8,35.4zM389.6,43.4L393.2,43.3L393.1,34.7zM375.3,35.3L378.9,35.2L375.2,26.6zM378.9,35.2L382.3,26.5L378.7,26.5z"/><path fill="#a9bbdb" d="M395.6,188.8L399.2,188.4L399.1,179.8zM395.6,188.8L399.1,179.8L395.4,180.2zM377.3,182.1L377.2,173.5L373.6,173.8zM384.6,181.3L384.4,172.7L380.8,173.1zM384.6,181.3L388.1,172.4L384.4,172.7zM391.8,180.6L391.7,172.0L388.1,172.4zM380.8,173.1L384.4,172.7L384.3,164.1zM388.1,172.4L391.7,172.0L391.5,163.4zM388.1,172.4L391.5,163.4L387.9,163.8zM391.7,172.0L395.3,171.6L391.5,163.4zM373.5,165.2L377.1,164.8L373.3,156.5zM377.1,164.8L377,156.2L373.3,156.5zM377.1,164.8L380.7,164.5L380.6,155.9zM380.7,164.5L384.3,164.1L380.6,155.9zM384.3,164.1L384.2,155.5L380.6,155.9zM380.6,155.9L384.2,155.5L384.1,146.9zM384.2,155.5L387.8,155.2L384.1,146.9zM387.8,155.2L391.3,146.3L387.7,146.6zM395,154.5L394.9,146.0L391.3,146.3zM395,154.5L398.6,154.2L398.5,145.7zM395,154.5L398.5,145.7L394.9,146.0zM398.6,154.2L402.2,153.9L398.5,145.7zM402.2,153.9L402.1,145.4L398.5,145.7zM376.8,147.5L376.7,138.9L373.1,139.2zM391.3,146.3L391.1,137.7L387.5,138.0zM398.5,145.7L398.3,137.1L394.7,137.4zM398.5,145.7L402.1,145.4L402,136.8zM373.1,139.2L376.6,130.3L373,130.6zM380.3,138.6L383.9,138.3L383.8,129.7zM383.9,138.3L387.5,138.0L383.8,129.7zM387.5,138.0L391.1,137.7L391,129.1zM387.5,138.0L391,129.1L387.4,129.4zM394.7,137.4L398.2,128.6L394.6,128.9zM373,130.6L376.6,130.3L372.9,121.9zM376.6,130.3L380.1,121.4L376.5,121.6zM383.8,129.7L383.7,121.1L380.1,121.4zM383.8,129.7L387.3,120.8L383.7,121.1zM391,129.1L394.6,128.9L394.5,120.3zM394.6,128.9L398.2,128.6L394.5,120.3zM380.1,121.4L383.7,121.1L383.5,112.5zM387.3,120.8L390.9,120.6L390.7,112.0zM390.9,120.6L394.5,120.3L390.7,112.0zM394.5,120.3L394.3,111.8L390.7,112.0zM372.8,113.2L376.4,113.0L372.7,104.6zM376.4,113.0L376.2,104.4L372.7,104.6zM376.4,113.0L379.8,104.1L376.2,104.4zM380,112.8L383.5,112.5L379.8,104.1zM387.1,112.2L390.7,112.0L387,103.7zM390.7,112.0L390.6,103.4L387,103.7zM390.7,112.0L394.3,111.8L394.2,103.2zM394.3,111.8L397.9,111.5L394.2,103.2zM397.9,111.5L401.5,111.2L401.3,102.7zM372.7,104.6L376.2,104.4L376.1,95.7zM376.2,104.4L379.8,104.1L376.1,95.7zM383.4,103.9L387,103.7L383.3,95.3zM387,103.7L390.5,94.9L386.9,95.1zM390.6,103.4L394.2,103.2L390.5,94.9zM394.2,103.2L394,94.6L390.5,94.9zM394.2,103.2L397.6,94.4L394,94.6zM401.3,102.7L401.2,94.2L397.6,94.4zM372.5,95.9L376.1,95.7L372.4,87.3zM376.1,95.7L379.6,86.9L376,87.1zM379.7,95.5L383.3,95.3L379.6,86.9zM383.3,95.3L386.7,86.5L383.2,86.7zM386.9,95.1L390.5,94.9L386.7,86.5zM390.5,94.9L394,94.6L393.9,86.1zM397.6,94.4L397.5,85.9L393.9,86.1zM372.4,87.3L376,87.1L375.9,78.5zM372.4,87.3L375.9,78.5L372.3,78.6zM376,87.1L379.6,86.9L375.9,78.5zM379.6,86.9L383,78.1L379.5,78.3zM383.2,86.7L386.7,86.5L383,78.1zM386.7,86.5L386.6,77.9L383,78.1zM390.3,86.3L393.9,86.1L390.2,77.7zM393.9,86.1L397.5,85.9L397.3,77.3zM401,85.7L400.9,77.1L397.3,77.3zM372.3,78.6L375.9,78.5L372.2,70.0zM375.9,78.5L375.8,69.8L372.2,70.0zM383,78.1L382.9,69.5L379.3,69.6zM393.8,77.5L397.3,77.3L393.6,69.0zM372.2,70.0L375.8,69.8L375.7,61.2zM379.3,69.6L379.2,61.0L375.7,61.2zM379.3,69.6L382.8,60.9L379.2,61.0zM386.5,69.3L389.9,60.6L386.3,60.7zM393.6,69.0L397.2,68.8L397,60.3zM393.6,69.0L397,60.3L393.5,60.4zM372.1,61.3L375.7,61.2L372,52.7zM382.8,60.9L382.7,52.3L379.1,52.4zM382.8,60.9L386.2,52.1L382.7,52.3zM389.9,60.6L393.3,51.9L389.8,52.0zM393.5,60.4L397,60.3L393.3,51.9zM397,60.3L396.9,51.7L393.3,51.9zM382.7,52.3L386.2,52.1L382.5,43.7zM386.2,52.1L389.6,43.4L386.1,43.5zM389.8,52.0L393.3,51.9L389.6,43.4zM393.3,51.9L396.7,43.2L393.2,43.3zM396.9,51.7L400.5,51.6L396.7,43.2zM400.5,51.6L400.3,43.1L396.7,43.2zM386.1,43.5L389.6,43.4L386,35.0zM393.2,43.3L396.7,43.2L393.1,34.7zM396.7,43.2L396.6,34.6L393.1,34.7zM371.8,35.4L375.3,35.3L375.2,26.6zM371.8,35.4L375.2,26.6L371.6,26.7zM378.9,35.2L378.7,26.5L375.2,26.6zM389.5,34.8L393.1,34.7L389.4,26.3zM393.1,34.7L392.9,26.2L389.4,26.3zM393.1,34.7L396.6,34.6L396.5,26.1zM400.2,34.5L400,26.0L396.5,26.1z"/><path fill="#c7c9cd" d="M399.2,188.4L402.8,188.0L399.1,179.8zM435.5,184.4L439.2,184.0L435.3,176.1zM439.2,184.0L442.8,183.6L442.6,175.3zM439.2,184.0L442.6,175.3L439,175.7zM399.1,179.8L402.7,179.5L402.5,170.9zM399.1,179.8L402.5,170.9L398.9,171.3zM402.4,162.4L406,162.1L402.2,153.9zM406,162.1L405.9,153.5L402.2,153.9zM402.2,153.9L405.9,153.5L405.7,145.0zM402.2,153.9L405.7,145.0L402.1,145.4zM405.7,145.0L405.6,136.5L402,136.8zM401.8,128.3L405.4,128.0L401.7,119.8zM401.7,119.8L405.1,111.0L401.5,111.2zM405.1,111.0L408.7,110.8L408.5,102.3zM405.1,111.0L408.5,102.3L404.9,102.5zM404.8,94.0L408.2,85.3L404.6,85.5zM401,85.7L404.6,85.5L404.5,77.0zM404.6,85.5L408.2,85.3L404.5,77.0zM404.2,59.9L407.6,51.3L404,51.4zM407.6,51.3L407.4,42.8L403.9,42.9zM403.9,42.9L407.4,42.8L407.2,34.3zM400.2,34.5L403.7,34.4L403.5,25.9zM407.2,34.3L407.1,25.8L403.5,25.9z"/><path fill="#c4c8cf" d="M402.8,188.0L402.7,179.5L399.1,179.8zM439.2,184.0L439,175.7L435.3,176.1zM399.1,179.8L398.9,171.3L395.3,171.6zM402.5,170.9L402.4,162.4L398.8,162.7zM398.8,162.7L402.4,162.4L402.2,153.9zM402.1,145.4L405.7,145.0L402,136.8zM398.3,137.1L402,136.8L398.2,128.6zM402,136.8L401.8,128.3L398.2,128.6zM402,136.8L405.6,136.5L405.4,128.0zM402,136.8L405.4,128.0L401.8,128.3zM398.1,120.0L401.7,119.8L397.9,111.5zM401.5,111.2L405.1,111.0L401.3,102.7zM405.1,111.0L404.9,102.5L401.3,102.7zM401.3,102.7L404.9,102.5L404.8,94.0zM404.9,102.5L408.5,102.3L404.8,94.0zM408.5,102.3L408.4,93.8L404.8,94.0zM404.8,94.0L408.4,93.8L408.2,85.3zM401,85.7L404.5,77.0L400.9,77.1zM404.5,77.0L404.3,68.5L400.8,68.6zM404.2,59.9L404,51.4L400.5,51.6zM400.5,51.6L403.9,42.9L400.3,43.1zM404,51.4L407.6,51.3L403.9,42.9zM400.3,43.1L403.9,42.9L400.2,34.5zM403.9,42.9L403.7,34.4L400.2,34.5zM403.9,42.9L407.2,34.3L403.7,34.4zM400.2,34.5L403.5,25.9L400,26.0z"/><path fill="#cbcbcb" d="M402.8,188.0L406.5,187.6L406.3,179.1zM402.8,188.0L406.3,179.1L402.7,179.5zM402.7,179.5L406.3,179.1L402.5,170.9zM398.9,171.3L402.5,170.9L398.8,162.7zM406,162.1L409.5,153.2L405.9,153.5zM405.9,153.5L409.5,153.2L405.7,145.0zM405.7,145.0L409.3,144.7L409.2,136.2zM405.7,145.0L409.2,136.2L405.6,136.5zM409.2,136.2L409,127.7L405.4,128.0zM405.4,128.0L405.2,119.5L401.7,119.8zM401.7,119.8L405.2,119.5L405.1,111.0zM408.5,102.3L412.1,102.0L411.9,93.5zM408.5,102.3L411.9,93.5L408.4,93.8zM400.9,77.1L404.5,77.0L400.8,68.6zM404.5,77.0L408,76.8L407.9,68.3zM400.8,68.6L404.3,68.5L404.2,59.9zM400.8,68.6L404.2,59.9L400.6,60.1zM404.2,59.9L407.7,59.8L407.6,51.3zM407.6,51.3L411.1,51.2L411,42.7zM407.6,51.3L411,42.7L407.4,42.8zM407.4,42.8L411,42.7L407.2,34.3zM403.7,34.4L407.2,34.3L403.5,25.9z"/><path fill="#cec5c1" d="M406.5,187.6L410.1,187.2L406.3,179.1zM410.1,187.2L410,178.7L406.3,179.1zM406.3,179.1L406.2,170.6L402.5,170.9zM435.3,176.1L439,175.7L438.8,167.3zM439,175.7L442.6,175.3L438.8,167.3zM442.6,175.3L442.4,166.9L438.8,167.3zM402.5,170.9L406.2,170.6L406,162.1zM438.8,167.3L438.6,158.9L435,159.3zM438.8,167.3L442.4,166.9L442.2,158.6zM435,159.3L438.6,158.9L438.4,150.6zM435,159.3L438.4,150.6L434.8,150.9zM409.5,153.2L413.1,152.9L412.9,144.4zM409.5,153.2L412.9,144.4L409.3,144.7zM412.9,144.4L412.8,135.9L409.2,136.2zM434.6,142.5L438,133.8L434.4,134.1zM438.2,142.2L441.8,141.9L438,133.8zM405.6,136.5L409.2,136.2L405.4,128.0zM434.2,125.8L437.6,117.1L434,117.4zM408.8,119.2L408.7,110.8L405.1,111.0zM433.8,109.0L437.4,108.8L437.2,100.4zM433.8,109.0L437.2,100.4L433.6,100.6zM415.7,101.8L415.5,93.3L411.9,93.5zM411.9,93.5L411.8,85.1L408.2,85.3zM411.9,93.5L415.5,93.3L415.4,84.9zM408.2,85.3L411.8,85.1L411.6,76.6zM408.2,85.3L411.6,76.6L408,76.8zM440.2,75.1L440,66.8L436.4,66.9zM407.9,68.3L411.3,59.6L407.7,59.8zM436.4,66.9L440,66.8L439.8,58.4zM436.4,66.9L439.8,58.4L436.2,58.6zM411.3,59.6L411.1,51.2L407.6,51.3zM432.7,58.7L436,50.2L432.5,50.3zM411.1,51.2L414.7,51.0L411,42.7zM436,50.2L439.4,41.7L435.8,41.8z"/><path fill="#e09d83" d="M410.1,187.2L413.7,186.8L413.6,178.3zM410.1,187.2L413.6,178.3L410,178.7zM417.4,186.4L420.8,177.6L417.2,177.9zM421,186.0L424.6,185.6L420.8,177.6zM428.3,185.2L431.9,184.8L428.1,176.8zM431.9,184.8L435.5,184.4L435.3,176.1zM431.9,184.8L435.3,176.1L431.7,176.4zM413.6,178.3L417,169.5L413.4,169.8zM417.2,177.9L420.8,177.6L417,169.5zM420.8,177.6L424.5,177.2L424.3,168.8zM428.1,176.8L427.9,168.4L424.3,168.8zM428.1,176.8L431.5,168.0L427.9,168.4zM409.8,170.2L413.4,169.8L413.3,161.4zM413.4,169.8L417,169.5L413.3,161.4zM417,169.5L416.9,161.0L413.3,161.4zM420.7,169.1L424.3,168.8L420.5,160.7zM424.3,168.8L424.1,160.3L420.5,160.7zM424.3,168.8L427.7,160.0L424.1,160.3zM427.9,168.4L431.5,168.0L427.7,160.0zM413.3,161.4L413.1,152.9L409.5,153.2zM416.9,161.0L420.5,160.7L416.7,152.6zM420.5,160.7L423.9,151.9L420.3,152.2zM424.1,160.3L427.7,160.0L423.9,151.9zM431.3,159.6L435,159.3L431.2,151.2zM413.1,152.9L416.7,152.6L412.9,144.4zM416.7,152.6L416.5,144.1L412.9,144.4zM416.7,152.6L420.3,152.2L420.1,143.8zM416.7,152.6L420.1,143.8L416.5,144.1zM420.3,152.2L423.9,151.9L420.1,143.8zM423.9,151.9L427.5,151.6L427.4,143.2zM423.9,151.9L427.4,143.2L423.8,143.5zM427.5,151.6L431.2,151.2L427.4,143.2zM431.2,151.2L434.8,150.9L434.6,142.5zM431.2,151.2L434.6,142.5L431,142.8zM438.4,150.6L438.2,142.2L434.6,142.5zM412.9,144.4L416.4,135.6L412.8,135.9zM420.1,143.8L420,135.3L416.4,135.6zM434.6,142.5L434.4,134.1L430.8,134.4zM409.2,136.2L412.6,127.5L409,127.7zM416.4,135.6L416.2,127.2L412.6,127.5zM416.4,135.6L420,135.3L419.8,126.9zM420,135.3L423.6,135.0L419.8,126.9zM430.8,134.4L434.4,134.1L434.2,125.8zM409,127.7L412.6,127.5L408.8,119.2zM412.6,127.5L412.4,119.0L408.8,119.2zM412.6,127.5L416.2,127.2L416,118.7zM416.2,127.2L419.8,126.9L416,118.7zM419.8,126.9L419.6,118.4L416,118.7zM419.8,126.9L423.2,118.2L419.6,118.4zM423.4,126.6L427,126.3L423.2,118.2zM427,126.3L430.6,126.0L430.4,117.6zM416,118.7L419.6,118.4L419.5,110.0zM423.2,118.2L426.6,109.5L423,109.8zM430.4,117.6L430.2,109.2L426.6,109.5zM430.4,117.6L434,117.4L433.8,109.0zM412.3,110.5L415.9,110.2L415.7,101.8zM412.3,110.5L415.7,101.8L412.1,102.0zM415.9,110.2L419.5,110.0L415.7,101.8zM419.5,110.0L419.3,101.6L415.7,101.8zM423,109.8L426.6,109.5L422.9,101.3zM426.6,109.5L430.2,109.2L430,100.9zM426.6,109.5L430,100.9L426.5,101.1zM415.7,101.8L419.3,101.6L419.1,93.1zM422.9,101.3L426.5,101.1L426.3,92.7zM422.9,101.3L426.3,92.7L422.7,92.9zM426.5,101.1L430,100.9L426.3,92.7zM430,100.9L429.9,92.5L426.3,92.7zM430,100.9L433.6,100.6L433.4,92.2zM430,100.9L433.4,92.2L429.9,92.5zM433.6,100.6L437.2,100.4L433.4,92.2zM415.5,93.3L419.1,93.1L415.4,84.9zM419.1,93.1L418.9,84.7L415.4,84.9zM419.1,93.1L422.7,92.9L422.5,84.5zM426.3,92.7L426.1,84.3L422.5,84.5zM426.3,92.7L429.9,92.5L429.7,84.1zM433.4,92.2L433.2,83.9L429.7,84.1zM433.4,92.2L436.8,83.7L433.2,83.9zM415.4,84.9L418.9,84.7L418.8,76.2zM422.5,84.5L425.9,75.8L422.3,76.0zM426.1,84.3L429.7,84.1L425.9,75.8zM429.7,84.1L429.5,75.7L425.9,75.8zM429.7,84.1L433.2,83.9L433.1,75.5zM429.7,84.1L433.1,75.5L429.5,75.7zM408,76.8L411.6,76.6L407.9,68.3zM411.6,76.6L411.5,68.1L407.9,68.3zM411.6,76.6L415.2,76.4L415,67.9zM415.2,76.4L418.8,76.2L415,67.9zM422.3,76.0L425.9,75.8L422.2,67.6zM425.9,75.8L429.5,75.7L429.3,67.3zM422.2,67.6L425.5,59.0L422,59.2zM429.3,67.3L429.1,58.9L425.5,59.0zM429.3,67.3L432.7,58.7L429.1,58.9zM414.9,59.5L418.4,59.3L414.7,51.0zM418.4,59.3L421.8,50.7L418.2,50.9zM432.7,58.7L432.5,50.3L428.9,50.5zM414.7,51.0L418.2,50.9L418.1,42.4zM418.2,50.9L421.8,50.7L418.1,42.4zM421.8,50.7L421.6,42.3L418.1,42.4zM425.4,50.6L428.9,50.5L425.2,42.2zM428.9,50.5L428.7,42.1L425.2,42.2zM428.9,50.5L432.3,41.9L428.7,42.1zM436,50.2L435.8,41.8L432.3,41.9zM414.5,42.6L418.1,42.4L414.4,34.1zM418.1,42.4L417.9,34.0L414.4,34.1zM425.2,42.2L425,33.8L421.5,33.9zM425.2,42.2L428.6,33.7L425,33.8zM414.4,34.1L414.2,25.6L410.6,25.7zM414.4,34.1L417.7,25.5L414.2,25.6zM417.9,34.0L421.5,33.9L417.7,25.5zM421.5,33.9L425,33.8L424.8,25.4zM421.5,33.9L424.8,25.4L421.3,25.5z"/><path fill="#e0977d" d="M413.7,186.8L417.4,186.4L413.6,178.3zM417.4,186.4L417.2,177.9L413.6,178.3zM417.4,186.4L421,186.0L420.8,177.6zM424.6,185.6L424.5,177.2L420.8,177.6zM424.6,185.6L428.3,185.2L428.1,176.8zM424.6,185.6L428.1,176.8L424.5,177.2zM431.9,184.8L431.7,176.4L428.1,176.8zM406.3,179.1L410,178.7L409.8,170.2zM406.3,179.1L409.8,170.2L406.2,170.6zM413.6,178.3L413.4,169.8L409.8,170.2zM420.8,177.6L424.3,168.8L420.7,169.1zM424.5,177.2L428.1,176.8L424.3,168.8zM428.1,176.8L431.7,176.4L431.5,168.0zM406.2,170.6L409.8,170.2L406,162.1zM409.8,170.2L409.6,161.7L406,162.1zM409.8,170.2L413.3,161.4L409.6,161.7zM417,169.5L420.5,160.7L416.9,161.0zM424.3,168.8L427.9,168.4L427.7,160.0zM409.6,161.7L413.3,161.4L409.5,153.2zM413.3,161.4L416.9,161.0L416.7,152.6zM413.3,161.4L416.7,152.6L413.1,152.9zM420.5,160.7L420.3,152.2L416.7,152.6zM420.5,160.7L424.1,160.3L423.9,151.9zM427.7,160.0L427.5,151.6L423.9,151.9zM427.7,160.0L431.3,159.6L431.2,151.2zM427.7,160.0L431.2,151.2L427.5,151.6zM435,159.3L434.8,150.9L431.2,151.2zM423.9,151.9L423.8,143.5L420.1,143.8zM431.2,151.2L431,142.8L427.4,143.2zM434.8,150.9L438.4,150.6L434.6,142.5zM412.9,144.4L416.5,144.1L416.4,135.6zM416.5,144.1L420.1,143.8L416.4,135.6zM420.1,143.8L423.8,143.5L423.6,135.0zM420.1,143.8L423.6,135.0L420,135.3zM423.8,143.5L427.4,143.2L423.6,135.0zM427.4,143.2L427.2,134.7L423.6,135.0zM427.4,143.2L430.8,134.4L427.2,134.7zM431,142.8L434.6,142.5L430.8,134.4zM412.8,135.9L416.4,135.6L412.6,127.5zM416.4,135.6L419.8,126.9L416.2,127.2zM423.6,135.0L423.4,126.6L419.8,126.9zM423.6,135.0L427.2,134.7L427,126.3zM423.6,135.0L427,126.3L423.4,126.6zM427.2,134.7L430.8,134.4L427,126.3zM430.8,134.4L430.6,126.0L427,126.3zM430.8,134.4L434.2,125.8L430.6,126.0zM412.6,127.5L416,118.7L412.4,119.0zM419.8,126.9L423.4,126.6L423.2,118.2zM427,126.3L426.8,117.9L423.2,118.2zM427,126.3L430.4,117.6L426.8,117.9zM408.8,119.2L412.4,119.0L412.3,110.5zM408.8,119.2L412.3,110.5L408.7,110.8zM416,118.7L415.9,110.2L412.3,110.5zM419.6,118.4L423.2,118.2L419.5,110.0zM423.2,118.2L423,109.8L419.5,110.0zM426.8,117.9L430.4,117.6L426.6,109.5zM430.4,117.6L433.8,109.0L430.2,109.2zM419.5,110.0L423,109.8L422.9,101.3zM426.6,109.5L426.5,101.1L422.9,101.3zM430.2,109.2L433.8,109.0L430,100.9zM415.7,101.8L419.1,93.1L415.5,93.3zM419.3,101.6L422.9,101.3L419.1,93.1zM422.9,101.3L422.7,92.9L419.1,93.1zM437.2,100.4L437,92.0L433.4,92.2zM419.1,93.1L422.5,84.5L418.9,84.7zM426.3,92.7L429.7,84.1L426.1,84.3zM429.9,92.5L433.4,92.2L429.7,84.1zM433.4,92.2L437,92.0L436.8,83.7zM411.8,85.1L415.4,84.9L411.6,76.6zM415.4,84.9L415.2,76.4L411.6,76.6zM415.4,84.9L418.8,76.2L415.2,76.4zM418.9,84.7L422.5,84.5L418.8,76.2zM422.5,84.5L422.3,76.0L418.8,76.2zM422.5,84.5L426.1,84.3L425.9,75.8zM411.6,76.6L415,67.9L411.5,68.1zM418.8,76.2L418.6,67.8L415,67.9zM418.8,76.2L422.2,67.6L418.6,67.8zM425.9,75.8L425.7,67.4L422.2,67.6zM425.9,75.8L429.3,67.3L425.7,67.4zM411.5,68.1L415,67.9L411.3,59.6zM415,67.9L414.9,59.5L411.3,59.6zM415,67.9L418.6,67.8L418.4,59.3zM415,67.9L418.4,59.3L414.9,59.5zM418.6,67.8L422.2,67.6L418.4,59.3zM422.2,67.6L422,59.2L418.4,59.3zM422.2,67.6L425.7,67.4L425.5,59.0zM411.3,59.6L414.9,59.5L414.7,51.0zM411.3,59.6L414.7,51.0L411.1,51.2zM418.4,59.3L418.2,50.9L414.7,51.0zM418.4,59.3L422,59.2L421.8,50.7zM425.5,59.0L429.1,58.9L428.9,50.5zM425.5,59.0L428.9,50.5L425.4,50.6zM429.1,58.9L432.7,58.7L428.9,50.5zM414.7,51.0L418.1,42.4L414.5,42.6zM421.8,50.7L425.4,50.6L425.2,42.2zM421.8,50.7L425.2,42.2L421.6,42.3zM428.9,50.5L432.5,50.3L432.3,41.9zM418.1,42.4L421.6,42.3L421.5,33.9zM425.2,42.2L428.7,42.1L428.6,33.7zM428.7,42.1L432.3,41.9L428.6,33.7zM432.3,41.9L432.1,33.6L428.6,33.7zM432.3,41.9L435.8,41.8L435.7,33.5zM410.8,34.2L414.4,34.1L410.6,25.7zM414.4,34.1L417.9,34.0L417.7,25.5zM421.5,33.9L421.3,25.5L417.7,25.5zM425,33.8L428.6,33.7L424.8,25.4zM428.6,33.7L428.4,25.3L424.8,25.4zM428.6,33.7L432.1,33.6L431.9,25.2z"/><path fill="#7291e1" d="M362.8,183.6L366.4,183.2L366.3,174.5zM370.1,182.8L369.9,174.2L366.3,174.5zM366.3,174.5L369.8,165.5L366.2,165.9zM362.6,166.2L366.1,157.2L362.5,157.5zM369.8,165.5L369.7,156.8L366.1,157.2zM366.1,157.2L366,148.5L362.4,148.8zM366.1,157.2L369.6,148.2L366,148.5zM362.4,148.8L365.9,139.8L362.3,140.1zM369.6,148.2L369.5,139.5L365.9,139.8zM365.9,139.8L365.8,131.1L362.2,131.4zM365.8,131.1L369.4,130.8L365.7,122.4zM365.7,122.4L369.2,113.5L365.6,113.8zM365.1,70.3L365,61.6L361.4,61.8zM368.5,61.5L368.4,52.8L364.9,53.0zM364.9,53.0L368.4,52.8L368.3,44.2zM361.2,44.4L364.8,44.3L364.6,35.6zM364.8,44.3L368.3,44.2L364.6,35.6zM364.6,35.6L364.5,26.9L361,27.0z"/><path fill="#6785dd" d="M362.8,183.6L366.3,174.5L362.7,174.9zM366.3,174.5L366.2,165.9L362.6,166.2zM362.6,166.2L366.2,165.9L366.1,157.2zM366.2,165.9L369.8,165.5L366.1,157.2zM362.5,157.5L366.1,157.2L362.4,148.8zM366.1,157.2L369.7,156.8L369.6,148.2zM365.9,139.8L369.5,139.5L369.4,130.8zM365.9,139.8L369.4,130.8L365.8,131.1zM362.2,131.4L365.8,131.1L365.7,122.4zM369.4,130.8L369.3,122.2L365.7,122.4zM362.1,122.7L365.7,122.4L362,114.0zM365.7,122.4L365.6,113.8L362,114.0zM365.7,122.4L369.3,122.2L369.2,113.5zM362,114.0L365.5,105.1L361.9,105.3zM361.9,105.3L365.5,105.1L361.8,96.6zM365.5,105.1L365.4,96.4L361.8,96.6zM365.5,105.1L369,96.2L365.4,96.4zM369,96.2L368.9,87.5L365.3,87.7zM361.7,87.9L365.3,87.7L361.6,79.2zM365.3,87.7L368.7,78.8L365.2,79.0zM361.6,79.2L365.1,70.3L361.5,70.5zM368.7,78.8L368.6,70.2L365.1,70.3zM365.1,70.3L368.6,70.2L368.5,61.5zM365.1,70.3L368.5,61.5L365,61.6zM361.3,53.1L364.9,53.0L361.2,44.4z"/><path fill="#c0c7d1" d="M395.4,180.2L399.1,179.8L395.3,171.6zM395.3,171.6L398.9,171.3L398.8,162.7zM395.3,171.6L398.8,162.7L395.2,163.1zM398.8,162.7L402.2,153.9L398.6,154.2zM398.2,128.6L401.8,128.3L401.7,119.8zM398.2,128.6L401.7,119.8L398.1,120.0zM401.7,119.8L401.5,111.2L397.9,111.5zM401.3,102.7L404.8,94.0L401.2,94.2zM401.2,94.2L404.8,94.0L401,85.7zM404.8,94.0L404.6,85.5L401,85.7zM397.3,77.3L400.9,77.1L400.8,68.6zM397.3,77.3L400.8,68.6L397.2,68.8zM397.2,68.8L400.8,68.6L397,60.3zM400.8,68.6L400.6,60.1L397,60.3zM400.6,60.1L404.2,59.9L400.5,51.6zM400.5,51.6L404,51.4L403.9,42.9z"/><path fill="#e0a289" d="M410,178.7L413.6,178.3L409.8,170.2zM413.6,178.3L417.2,177.9L417,169.5zM420.8,177.6L420.7,169.1L417,169.5zM417,169.5L420.7,169.1L420.5,160.7zM431.5,168.0L431.3,159.6L427.7,160.0zM427.4,143.2L431,142.8L430.8,134.4zM409.2,136.2L412.8,135.9L412.6,127.5zM412.4,119.0L416,118.7L412.3,110.5zM416,118.7L419.5,110.0L415.9,110.2zM423.2,118.2L426.8,117.9L426.6,109.5zM419.5,110.0L422.9,101.3L419.3,101.6zM433.8,109.0L433.6,100.6L430,100.9zM422.7,92.9L426.3,92.7L422.5,84.5zM418.8,76.2L422.3,76.0L422.2,67.6zM425.7,67.4L429.3,67.3L425.5,59.0zM429.3,67.3L432.9,67.1L432.7,58.7zM422,59.2L425.5,59.0L421.8,50.7zM425.5,59.0L425.4,50.6L421.8,50.7zM432.5,50.3L436,50.2L432.3,41.9zM418.1,42.4L421.5,33.9L417.9,34.0zM421.6,42.3L425.2,42.2L421.5,33.9zM432.3,41.9L435.7,33.5L432.1,33.6zM428.6,33.7L431.9,25.2L428.4,25.3z"/><path fill="#d4bfb5" d="M431.7,176.4L435.3,176.1L431.5,168.0zM435.3,176.1L438.8,167.3L435.2,167.7zM431.5,168.0L435,159.3L431.3,159.6zM442.2,158.6L442,150.2L438.4,150.6zM438.4,150.6L441.8,141.9L438.2,142.2zM441.8,141.9L441.6,133.6L438,133.8zM438,133.8L441.4,125.2L437.8,125.5zM430.6,126.0L434.2,125.8L430.4,117.6zM437.8,125.5L441.4,125.2L437.6,117.1zM437.6,117.1L437.4,108.8L433.8,109.0zM437.6,117.1L441.2,116.9L441,108.5zM437.6,117.1L441,108.5L437.4,108.8zM441,108.5L440.8,100.1L437.2,100.4zM433.2,83.9L436.8,83.7L433.1,75.5zM436.8,83.7L436.6,75.3L433.1,75.5zM433.1,75.5L436.4,66.9L432.9,67.1zM436.6,75.3L440.2,75.1L436.4,66.9zM439.8,58.4L439.6,50.1L436,50.2zM436,50.2L439.6,50.1L439.4,41.7zM439.4,41.7L439.2,33.3L435.7,33.5zM435.7,33.5L435.5,25.1L431.9,25.2zM435.7,33.5L439.2,33.3L439,25.0z"/><path fill="#d1c2bb" d="M435.3,176.1L435.2,167.7L431.5,168.0zM431.5,168.0L435.2,167.7L435,159.3zM435.2,167.7L438.8,167.3L435,159.3zM438.8,167.3L442.2,158.6L438.6,158.9zM438.6,158.9L442.2,158.6L438.4,150.6zM438.4,150.6L442,150.2L441.8,141.9zM434.6,142.5L438.2,142.2L438,133.8zM434.4,134.1L438,133.8L434.2,125.8zM438,133.8L437.8,125.5L434.2,125.8zM438,133.8L441.6,133.6L441.4,125.2zM434.2,125.8L434,117.4L430.4,117.6zM434.2,125.8L437.8,125.5L437.6,117.1zM441.4,125.2L441.2,116.9L437.6,117.1zM434,117.4L437.6,117.1L433.8,109.0zM437.4,108.8L441,108.5L437.2,100.4zM412.1,102.0L415.7,101.8L411.9,93.5zM437.2,100.4L440.8,100.1L440.6,91.8zM437.2,100.4L440.6,91.8L437,92.0zM437,92.0L440.6,91.8L436.8,83.7zM440.6,91.8L440.4,83.4L436.8,83.7zM436.8,83.7L440.4,83.4L440.2,75.1zM436.8,83.7L440.2,75.1L436.6,75.3zM429.5,75.7L433.1,75.5L429.3,67.3zM433.1,75.5L432.9,67.1L429.3,67.3zM433.1,75.5L436.6,75.3L436.4,66.9zM432.9,67.1L436.4,66.9L432.7,58.7zM436.4,66.9L436.2,58.6L432.7,58.7zM432.7,58.7L436.2,58.6L436,50.2zM436.2,58.6L439.8,58.4L436,50.2zM411,42.7L414.5,42.6L414.4,34.1zM411,42.7L414.4,34.1L410.8,34.2zM435.8,41.8L439.4,41.7L435.7,33.5zM432.1,33.6L435.7,33.5L431.9,25.2zM435.7,33.5L439,25.0L435.5,25.1z"/><path fill="#9fb3dc" d="M373.6,173.8L373.5,165.2L369.8,165.5zM369.7,156.8L373.3,156.5L369.6,148.2zM369.6,148.2L373.2,147.9L373.1,139.2zM369.5,139.5L373.1,139.2L369.4,130.8zM373.1,139.2L373,130.6L369.4,130.8zM369.4,130.8L373,130.6L372.9,121.9zM369.3,122.2L372.9,121.9L369.2,113.5zM372.9,121.9L372.8,113.2L369.2,113.5zM369.2,113.5L372.8,113.2L372.7,104.6zM369,96.2L372.4,87.3L368.9,87.5zM368.9,87.5L372.4,87.3L368.7,78.8zM368.5,61.5L372,52.7L368.4,52.8zM368.4,52.8L372,52.7L368.3,44.2zM372,52.7L371.9,44.0L368.3,44.2zM368.3,44.2L371.9,44.0L371.8,35.4zM368.3,44.2L371.8,35.4L368.2,35.5zM371.8,35.4L371.6,26.7L368.1,26.8z"/><path fill="#ccc8c6" d="M402.5,170.9L406,162.1L402.4,162.4zM406,162.1L409.6,161.7L409.5,153.2zM409.5,153.2L409.3,144.7L405.7,145.0zM409.3,144.7L412.9,144.4L409.2,136.2zM405.4,128.0L409,127.7L408.8,119.2zM405.4,128.0L408.8,119.2L405.2,119.5zM405.2,119.5L408.8,119.2L405.1,111.0zM408.7,110.8L412.3,110.5L408.5,102.3zM412.3,110.5L412.1,102.0L408.5,102.3zM408.4,93.8L411.9,93.5L408.2,85.3zM411.9,93.5L415.4,84.9L411.8,85.1zM408.2,85.3L408,76.8L404.5,77.0zM404.5,77.0L407.9,68.3L404.3,68.5zM404.3,68.5L407.9,68.3L404.2,59.9zM407.9,68.3L407.7,59.8L404.2,59.9zM407.9,68.3L411.5,68.1L411.3,59.6zM407.7,59.8L411.3,59.6L407.6,51.3zM414.7,51.0L414.5,42.6L411,42.7zM411,42.7L410.8,34.2L407.2,34.3zM407.2,34.3L410.8,34.2L410.6,25.7zM407.2,34.3L410.6,25.7L407.1,25.8z"/><path fill="#99afdd" d="M369.1,104.8L372.7,104.6L369,96.2zM368.5,61.5L372.1,61.3L372,52.7z"/><rect x="391.0" y="280.0" width="7.6" height="7.2" fill="#d16f59"/><rect x="398.3" y="280.0" width="7.6" height="7.2" fill="#d06e58"/><rect x="405.7" y="280.0" width="7.6" height="7.2" fill="#c85846"/><rect x="391.0" y="286.9" width="7.6" height="7.2" fill="#db8c70"/><rect x="398.3" y="286.9" width="7.6" height="7.2" fill="#d98369"/><rect x="405.7" y="286.9" width="7.6" height="7.2" fill="#db8b6f"/><rect x="391.0" y="293.8" width="7.6" height="7.2" fill="#db8d72"/><rect x="398.3" y="293.8" width="7.6" height="7.2" fill="#db8d72"/><rect x="405.7" y="293.8" width="7.6" height="7.2" fill="#db9177"/><rect x="391.0" y="300.8" width="7.6" height="7.2" fill="#db957b"/><rect x="398.3" y="300.8" width="7.6" height="7.2" fill="#db947a"/><rect x="405.7" y="300.8" width="7.6" height="7.2" fill="#db987e"/><rect x="391.0" y="307.7" width="7.6" height="7.2" fill="#db957b"/><rect x="398.3" y="307.7" width="7.6" height="7.2" fill="#db947a"/><rect x="405.7" y="307.7" width="7.6" height="7.2" fill="#db9177"/><rect x="391.0" y="314.6" width="7.6" height="7.2" fill="#db977e"/><rect x="398.3" y="314.6" width="7.6" height="7.2" fill="#db987f"/><rect x="405.7" y="314.6" width="7.6" height="7.2" fill="#db957c"/><rect x="391.0" y="321.5" width="7.6" height="7.2" fill="#db957b"/><rect x="398.3" y="321.5" width="7.6" height="7.2" fill="#db967c"/><rect x="405.7" y="321.5" width="7.6" height="7.2" fill="#db9277"/><rect x="391.0" y="328.4" width="7.6" height="7.2" fill="#db987f"/><rect x="398.3" y="328.4" width="7.6" height="7.2" fill="#db957c"/><rect x="405.7" y="328.4" width="7.6" height="7.2" fill="#db967c"/><rect x="391.0" y="335.3" width="7.6" height="7.2" fill="#db987f"/><rect x="398.3" y="335.3" width="7.6" height="7.2" fill="#db967c"/><rect x="405.7" y="335.3" width="7.6" height="7.2" fill="#db967c"/><rect x="391.0" y="342.2" width="7.6" height="7.2" fill="#db977d"/><rect x="398.3" y="342.2" width="7.6" height="7.2" fill="#db9379"/><rect x="405.7" y="342.2" width="7.6" height="7.2" fill="#db9176"/><rect x="391.0" y="349.2" width="7.6" height="7.2" fill="#db9177"/><rect x="398.3" y="349.2" width="7.6" height="7.2" fill="#db987f"/><rect x="405.7" y="349.2" width="7.6" height="7.2" fill="#db977d"/><rect x="391.0" y="356.1" width="7.6" height="7.2" fill="#db9177"/><rect x="398.3" y="356.1" width="7.6" height="7.2" fill="#db9980"/><rect x="405.7" y="356.1" width="7.6" height="7.2" fill="#db9980"/></g></svg>
<svg class="a" style="left:697px;top:449.4px;" width="10" height="130.2" viewBox="0 0 10 130.2"><defs><linearGradient id="cb2" x1="0" y1="1" x2="0" y2="0"><stop offset="0" stop-color="#3b4cc0"/><stop offset="0.25" stop-color="#8db0fe"/><stop offset="0.5" stop-color="#dddddd"/><stop offset="0.75" stop-color="#f49a7b"/><stop offset="1" stop-color="#b40426"/></linearGradient></defs><rect width="10" height="130.2" fill="url(#cb2)"/></svg>
<div class="a" style="left:707px;top:449px;width:64.6px;height:1.3px;background:#d8d8d8;"></div>
<div class="a" style="left:707px;top:579px;width:64.6px;height:1.3px;background:#d8d8d8;"></div>
<div class="a" style="left:706px;top:480.09999999999997px;width:6px;height:1.3px;background:#e0e0e0;"></div>
<div class="a" style="left:706px;top:513.0px;width:6px;height:1.3px;background:#e0e0e0;"></div>
<div class="a" style="left:706px;top:545.8px;width:6px;height:1.3px;background:#e0e0e0;"></div>
<div class="t" style="left:756.1px;top:520.3px;font-size:11.6px;color:#e2e2e2;transform:rotate(-90deg) scaleX(0.87);transform-origin:0 0">UY</div>
<svg class="a" style="left:240px;top:508px;" width="40" height="34" viewBox="0 0 40 34"><path d="M6.7,28.7 V6" stroke="#c8c838" stroke-width="1"/><path d="M6.7,3.5 l-2.5,4 h5 z" fill="#e8e030"/><path d="M6.7,28.7 H31" stroke="#d82020" stroke-width="1.2"/><path d="M34,28.7 l-4,-2.2 v4.4 z" fill="#e02020"/><circle cx="6.7" cy="28.7" r="2.2" fill="#208020"/><text x="9" y="8" font-size="7" font-family="Liberation Sans" fill="#eee">Y</text><text x="9" y="26" font-size="7" font-family="Liberation Sans" fill="#eee">Z</text><text x="31" y="27" font-size="7" font-family="Liberation Sans" fill="#eee">X</text></svg>
<div class="a" style="left:382.8px;top:594.2px;width:11.4px;height:10.8px;background:linear-gradient(#f8f8f8,#e8e8e8);border:1px solid #cfcfcf;border-radius:2px"></div>
<svg class="a" style="left:385.5px;top:596.5px;" width="6" height="6" viewBox="0 0 6 6"><path d="M0.5,0.5 l5,5 M5.5,0.5 l-5,5" stroke="#888" stroke-width="1.1"/></svg>
<div class="a" style="left:396px;top:593.5px;width:362px;height:12px;background:#f2f2f2;border:1px solid #d6d6d6;border-radius:2px"></div>
<div class="a" style="left:786px;top:47px;width:335.5px;height:24px;background:#f3f3f3;border-radius:5px 5px 0 0"></div>
<div class="a" style="left:786px;top:70px;width:335.5px;height:1px;background:#d8d8d8;"></div>
<svg class="a" style="left:1058px;top:53px;" width="58" height="12" viewBox="0 0 58 12"><path d="M5.5,8.5 h5.5" stroke="#333" stroke-width="1.4"/><rect x="27.5" y="4.5" width="5" height="5" fill="none" stroke="#333" stroke-width="1.4"/><path d="M49,4 l5,5 M54,4 l-5,5" stroke="#333" stroke-width="1.4"/></svg>
<svg class="a" style="left:786px;top:71px;" width="335.5" height="248" viewBox="0 0 335.5 248"><rect width="335.5" height="248" fill="#000"/><path fill="#fff" opacity="0.35" d="M152,139h1v1h-1zM310,115h1v1h-1zM170,146h1v1h-1zM62,127h1v1h-1zM211,197h1v1h-1zM32,75h1v1h-1zM30,201h1v1h-1zM233,10h1v1h-1zM330,239h1v1h-1zM219,153h1v1h-1zM53,4h1v1h-1zM177,15h1v1h-1zM64,60h1v1h-1zM10,115h1v1h-1zM148,209h1v1h-1zM174,159h1v1h-1zM168,164h1v1h-1zM153,69h1v1h-1zM335,247h1v1h-1zM282,176h1v1h-1zM106,57h1v1h-1zM97,17h1v1h-1zM257,99h1v1h-1zM284,96h1v1h-1zM321,210h1v1h-1zM0,52h1v1h-1zM305,117h1v1h-1zM329,99h1v1h-1zM25,156h1v1h-1zM261,67h1v1h-1zM29,82h1v1h-1zM323,188h1v1h-1zM40,61h1v1h-1zM34,15h1v1h-1zM267,44h1v1h-1zM188,111h1v1h-1zM64,182h1v1h-1zM44,160h1v1h-1zM39,104h1v1h-1zM71,67h1v1h-1zM326,199h1v1h-1zM102,219h1v1h-1zM71,98h1v1h-1zM287,159h1v1h-1zM34,245h1v1h-1zM72,64h1v1h-1zM259,82h1v1h-1zM99,18h1v1h-1zM30,145h1v1h-1zM82,149h1v1h-1zM125,112h1v1h-1zM322,120h1v1h-1zM193,215h1v1h-1zM61,38h1v1h-1zM305,203h1v1h-1zM84,47h1v1h-1zM248,233h1v1h-1zM66,236h1v1h-1zM296,150h1v1h-1zM141,26h1v1h-1zM13,239h1v1h-1zM80,175h1v1h-1zM86,204h1v1h-1zM200,73h1v1h-1zM59,179h1v1h-1zM23,57h1v1h-1zM188,211h1v1h-1zM206,69h1v1h-1zM308,51h1v1h-1zM6,67h1v1h-1zM150,15h1v1h-1zM59,91h1v1h-1zM192,33h1v1h-1zM121,221h1v1h-1zM329,163h1v1h-1zM232,145h1v1h-1zM47,9h1v1h-1zM6,226h1v1h-1zM235,239h1v1h-1zM7,158h1v1h-1zM162,181h1v1h-1zM107,248h1v1h-1zM25,135h1v1h-1zM247,223h1v1h-1zM247,175h1v1h-1zM266,227h1v1h-1zM118,170h1v1h-1zM302,216h1v1h-1zM140,196h1v1h-1zM290,142h1v1h-1zM210,95h1v1h-1zM195,151h1v1h-1zM27,159h1v1h-1zM333,218h1v1h-1zM244,96h1v1h-1zM247,144h1v1h-1zM148,208h1v1h-1zM28,186h1v1h-1zM10,149h1v1h-1zM161,57h1v1h-1zM234,123h1v1h-1zM206,228h1v1h-1zM86,3h1v1h-1zM101,168h1v1h-1zM68,42h1v1h-1zM304,164h1v1h-1zM148,221h1v1h-1zM110,165h1v1h-1zM67,107h1v1h-1zM270,227h1v1h-1zM295,95h1v1h-1zM196,78h1v1h-1zM46,123h1v1h-1zM281,210h1v1h-1zM239,236h1v1h-1zM93,42h1v1h-1zM151,68h1v1h-1zM72,103h1v1h-1zM210,122h1v1h-1zM106,208h1v1h-1zM329,112h1v1h-1zM25,8h1v1h-1zM293,10h1v1h-1zM238,142h1v1h-1zM104,196h1v1h-1zM6,34h1v1h-1zM153,6h1v1h-1zM278,59h1v1h-1zM47,12h1v1h-1zM211,111h1v1h-1zM211,162h1v1h-1zM271,238h1v1h-1zM230,49h1v1h-1zM159,44h1v1h-1zM4,117h1v1h-1zM240,44h1v1h-1zM91,86h1v1h-1zM234,129h1v1h-1zM206,188h1v1h-1zM132,196h1v1h-1zM304,22h1v1h-1zM313,179h1v1h-1zM44,112h1v1h-1zM210,226h1v1h-1zM126,141h1v1h-1zM295,198h1v1h-1zM317,115h1v1h-1zM219,51h1v1h-1zM242,203h1v1h-1zM215,178h1v1h-1zM72,223h1v1h-1zM329,242h1v1h-1zM180,196h1v1h-1zM107,226h1v1h-1zM287,86h1v1h-1zM28,109h1v1h-1zM185,191h1v1h-1zM164,7h1v1h-1zM271,16h1v1h-1zM268,43h1v1h-1zM112,195h1v1h-1zM47,37h1v1h-1zM173,179h1v1h-1zM282,171h1v1h-1zM317,122h1v1h-1zM318,21h1v1h-1zM74,131h1v1h-1zM97,181h1v1h-1zM214,130h1v1h-1zM283,139h1v1h-1zM105,95h1v1h-1zM284,223h1v1h-1zM70,211h1v1h-1zM325,130h1v1h-1zM192,50h1v1h-1zM180,125h1v1h-1zM203,7h1v1h-1zM325,128h1v1h-1zM134,199h1v1h-1zM189,122h1v1h-1zM232,16h1v1h-1zM181,103h1v1h-1zM321,229h1v1h-1zM90,117h1v1h-1zM43,108h1v1h-1zM274,223h1v1h-1zM160,79h1v1h-1zM64,153h1v1h-1zM310,32h1v1h-1zM261,6h1v1h-1zM65,56h1v1h-1zM230,80h1v1h-1zM119,154h1v1h-1zM35,181h1v1h-1zM41,127h1v1h-1zM84,49h1v1h-1zM178,108h1v1h-1zM126,103h1v1h-1zM178,40h1v1h-1zM69,157h1v1h-1zM214,131h1v1h-1zM286,152h1v1h-1zM287,58h1v1h-1zM249,201h1v1h-1zM303,78h1v1h-1zM106,229h1v1h-1zM73,248h1v1h-1zM298,33h1v1h-1zM80,180h1v1h-1zM87,24h1v1h-1zM279,105h1v1h-1zM265,31h1v1h-1zM135,170h1v1h-1zM6,50h1v1h-1zM229,226h1v1h-1zM325,29h1v1h-1zM170,188h1v1h-1zM169,170h1v1h-1zM63,17h1v1h-1zM36,9h1v1h-1zM185,128h1v1h-1zM191,36h1v1h-1zM62,51h1v1h-1zM282,246h1v1h-1zM311,24h1v1h-1zM21,236h1v1h-1zM155,190h1v1h-1zM110,116h1v1h-1zM173,107h1v1h-1zM202,3h1v1h-1zM235,209h1v1h-1zM61,113h1v1h-1zM248,101h1v1h-1zM65,41h1v1h-1zM172,4h1v1h-1zM300,199h1v1h-1zM236,213h1v1h-1zM211,100h1v1h-1zM201,125h1v1h-1zM330,200h1v1h-1zM87,226h1v1h-1zM250,193h1v1h-1zM273,101h1v1h-1zM301,218h1v1h-1zM233,190h1v1h-1zM257,101h1v1h-1zM242,17h1v1h-1zM115,116h1v1h-1zM4,88h1v1h-1zM214,155h1v1h-1zM78,234h1v1h-1zM223,84h1v1h-1zM221,141h1v1h-1zM179,97h1v1h-1zM335,159h1v1h-1zM235,189h1v1h-1zM329,6h1v1h-1zM206,183h1v1h-1zM86,100h1v1h-1zM17,48h1v1h-1z"/><path d="M155.3,131.4L154.1,132.5" stroke="#fff" stroke-width="0.60" opacity="0.36"/><path d="M154.1,132.5L153.0,133.6" stroke="#fff" stroke-width="0.86" opacity="0.65"/><path d="M87.2,118.2L77.4,117.7" stroke="#fff" stroke-width="0.63" opacity="0.39"/><path d="M77.4,117.7L67.5,117.2" stroke="#fff" stroke-width="0.90" opacity="0.70"/><path d="M169.0,111.2L169.7,109.3" stroke="#fff" stroke-width="0.56" opacity="0.21"/><path d="M169.7,109.3L170.4,107.5" stroke="#fff" stroke-width="0.80" opacity="0.37"/><path d="M180.8,114.4L183.1,113.4" stroke="#fff" stroke-width="0.40" opacity="0.34"/><path d="M183.1,113.4L185.3,112.3" stroke="#fff" stroke-width="0.57" opacity="0.62"/><path d="M156.8,115.4L155.1,113.9" stroke="#fff" stroke-width="0.47" opacity="0.35"/><path d="M155.1,113.9L153.4,112.5" stroke="#fff" stroke-width="0.67" opacity="0.64"/><path d="M137.7,102.9L135.0,101.0" stroke="#fff" stroke-width="0.53" opacity="0.36"/><path d="M135.0,101.0L132.3,99.1" stroke="#fff" stroke-width="0.76" opacity="0.66"/><path d="M152.4,179.7L151.2,185.2" stroke="#fff" stroke-width="0.35" opacity="0.27"/><path d="M151.2,185.2L150.0,190.7" stroke="#fff" stroke-width="0.51" opacity="0.48"/><path d="M181.7,126.7L184.6,127.5" stroke="#fff" stroke-width="0.46" opacity="0.46"/><path d="M184.6,127.5L187.5,128.3" stroke="#fff" stroke-width="0.66" opacity="0.84"/><path d="M164.6,112.3L164.6,110.1" stroke="#fff" stroke-width="0.61" opacity="0.21"/><path d="M164.6,110.1L164.6,107.9" stroke="#fff" stroke-width="0.88" opacity="0.39"/><path d="M196.0,100.9L199.9,98.3" stroke="#fff" stroke-width="0.62" opacity="0.27"/><path d="M199.9,98.3L203.7,95.7" stroke="#fff" stroke-width="0.89" opacity="0.48"/><path d="M90.2,111.0L79.2,109.4" stroke="#fff" stroke-width="0.48" opacity="0.49"/><path d="M79.2,109.4L68.2,107.7" stroke="#fff" stroke-width="0.69" opacity="0.89"/><path d="M185.3,75.7L186.8,72.3" stroke="#fff" stroke-width="0.52" opacity="0.33"/><path d="M186.8,72.3L188.4,68.8" stroke="#fff" stroke-width="0.75" opacity="0.60"/><path d="M167.5,131.4L168.0,133.0" stroke="#fff" stroke-width="0.38" opacity="0.33"/><path d="M168.0,133.0L168.5,134.6" stroke="#fff" stroke-width="0.55" opacity="0.59"/><path d="M145.1,87.5L143.2,84.2" stroke="#fff" stroke-width="0.51" opacity="0.32"/><path d="M143.2,84.2L141.4,80.9" stroke="#fff" stroke-width="0.73" opacity="0.58"/><path d="M172.6,77.4L174.1,69.1" stroke="#fff" stroke-width="0.62" opacity="0.41"/><path d="M174.1,69.1L175.6,60.9" stroke="#fff" stroke-width="0.88" opacity="0.75"/><path d="M165.7,136.4L166.0,139.2" stroke="#fff" stroke-width="0.57" opacity="0.38"/><path d="M166.0,139.2L166.2,142.0" stroke="#fff" stroke-width="0.81" opacity="0.69"/><path d="M148.2,142.2L145.6,145.3" stroke="#fff" stroke-width="0.51" opacity="0.37"/><path d="M145.6,145.3L143.1,148.4" stroke="#fff" stroke-width="0.73" opacity="0.68"/><path d="M123.3,76.2L119.9,72.4" stroke="#fff" stroke-width="0.42" opacity="0.49"/><path d="M119.9,72.4L116.5,68.7" stroke="#fff" stroke-width="0.60" opacity="0.89"/><path d="M226.0,86.1L229.8,83.9" stroke="#fff" stroke-width="0.37" opacity="0.27"/><path d="M229.8,83.9L233.6,81.7" stroke="#fff" stroke-width="0.52" opacity="0.50"/><path d="M118.2,145.6L114.9,147.3" stroke="#fff" stroke-width="0.50" opacity="0.21"/><path d="M114.9,147.3L111.5,149.0" stroke="#fff" stroke-width="0.72" opacity="0.39"/><path d="M212.7,151.0L218.8,154.7" stroke="#fff" stroke-width="0.53" opacity="0.31"/><path d="M218.8,154.7L224.9,158.4" stroke="#fff" stroke-width="0.75" opacity="0.56"/><path d="M143.3,124.9L140.8,125.2" stroke="#fff" stroke-width="0.56" opacity="0.45"/><path d="M140.8,125.2L138.3,125.6" stroke="#fff" stroke-width="0.80" opacity="0.81"/><path d="M178.0,128.7L180.4,129.9" stroke="#fff" stroke-width="0.52" opacity="0.43"/><path d="M180.4,129.9L182.9,131.2" stroke="#fff" stroke-width="0.75" opacity="0.77"/><path d="M173.3,158.4L174.1,161.9" stroke="#fff" stroke-width="0.58" opacity="0.30"/><path d="M174.1,161.9L174.9,165.4" stroke="#fff" stroke-width="0.82" opacity="0.55"/><path d="M119.6,56.9L115.3,50.6" stroke="#fff" stroke-width="0.50" opacity="0.42"/><path d="M115.3,50.6L110.9,44.2" stroke="#fff" stroke-width="0.72" opacity="0.76"/><path d="M197.8,104.0L201.4,102.1" stroke="#fff" stroke-width="0.38" opacity="0.46"/><path d="M201.4,102.1L205.0,100.1" stroke="#fff" stroke-width="0.54" opacity="0.83"/><path d="M175.4,127.8L177.1,128.7" stroke="#fff" stroke-width="0.49" opacity="0.40"/><path d="M177.1,128.7L178.9,129.6" stroke="#fff" stroke-width="0.69" opacity="0.73"/><path d="M145.5,182.4L144.2,186.5" stroke="#fff" stroke-width="0.41" opacity="0.39"/><path d="M144.2,186.5L143.0,190.6" stroke="#fff" stroke-width="0.59" opacity="0.71"/><path d="M189.5,136.0L193.4,138.2" stroke="#fff" stroke-width="0.54" opacity="0.28"/><path d="M193.4,138.2L197.4,140.4" stroke="#fff" stroke-width="0.78" opacity="0.51"/><path d="M184.9,147.4L188.1,151.4" stroke="#fff" stroke-width="0.45" opacity="0.23"/><path d="M188.1,151.4L191.3,155.3" stroke="#fff" stroke-width="0.65" opacity="0.41"/><path d="M152.5,75.4L150.4,67.3" stroke="#fff" stroke-width="0.61" opacity="0.47"/><path d="M150.4,67.3L148.3,59.1" stroke="#fff" stroke-width="0.88" opacity="0.85"/><path d="M104.2,146.9L98.4,149.2" stroke="#fff" stroke-width="0.44" opacity="0.31"/><path d="M98.4,149.2L92.6,151.6" stroke="#fff" stroke-width="0.63" opacity="0.57"/><path d="M230.9,93.2L236.7,90.6" stroke="#fff" stroke-width="0.45" opacity="0.30"/><path d="M236.7,90.6L242.6,88.1" stroke="#fff" stroke-width="0.64" opacity="0.55"/><path d="M141.7,148.7L139.1,151.7" stroke="#fff" stroke-width="0.40" opacity="0.36"/><path d="M139.1,151.7L136.5,154.7" stroke="#fff" stroke-width="0.58" opacity="0.66"/><path d="M178.1,78.0L180.3,70.7" stroke="#fff" stroke-width="0.51" opacity="0.25"/><path d="M180.3,70.7L182.5,63.4" stroke="#fff" stroke-width="0.73" opacity="0.45"/><path d="M168.7,50.9L169.1,44.4" stroke="#fff" stroke-width="0.36" opacity="0.35"/><path d="M169.1,44.4L169.4,37.8" stroke="#fff" stroke-width="0.51" opacity="0.63"/><path d="M118.5,108.9L110.2,106.5" stroke="#fff" stroke-width="0.53" opacity="0.44"/><path d="M110.2,106.5L101.8,104.1" stroke="#fff" stroke-width="0.76" opacity="0.79"/><path d="M207.5,140.2L214.3,143.1" stroke="#fff" stroke-width="0.37" opacity="0.22"/><path d="M214.3,143.1L221.1,146.0" stroke="#fff" stroke-width="0.53" opacity="0.39"/><path d="M158.8,49.7L158.4,44.8" stroke="#fff" stroke-width="0.53" opacity="0.24"/><path d="M158.4,44.8L158.0,40.0" stroke="#fff" stroke-width="0.75" opacity="0.43"/><path d="M163.3,68.0L163.1,63.1" stroke="#fff" stroke-width="0.41" opacity="0.42"/><path d="M163.1,63.1L163.0,58.3" stroke="#fff" stroke-width="0.59" opacity="0.77"/><path d="M102.7,113.5L96.0,112.6" stroke="#fff" stroke-width="0.44" opacity="0.49"/><path d="M96.0,112.6L89.4,111.7" stroke="#fff" stroke-width="0.64" opacity="0.88"/><path d="M144.8,84.4L142.2,79.6" stroke="#fff" stroke-width="0.55" opacity="0.41"/><path d="M142.2,79.6L139.6,74.7" stroke="#fff" stroke-width="0.79" opacity="0.74"/><path d="M196.0,103.5L201.2,100.4" stroke="#fff" stroke-width="0.54" opacity="0.45"/><path d="M201.2,100.4L206.5,97.3" stroke="#fff" stroke-width="0.77" opacity="0.82"/><path d="M188.0,58.4L191.9,47.7" stroke="#fff" stroke-width="0.62" opacity="0.39"/><path d="M191.9,47.7L195.8,37.0" stroke="#fff" stroke-width="0.88" opacity="0.70"/><path d="M106.8,113.3L97.6,111.9" stroke="#fff" stroke-width="0.47" opacity="0.32"/><path d="M97.6,111.9L88.4,110.5" stroke="#fff" stroke-width="0.67" opacity="0.58"/><path d="M201.6,170.4L208.4,179.2" stroke="#fff" stroke-width="0.46" opacity="0.24"/><path d="M208.4,179.2L215.1,188.0" stroke="#fff" stroke-width="0.65" opacity="0.44"/><path d="M175.3,157.9L176.3,161.5" stroke="#fff" stroke-width="0.62" opacity="0.21"/><path d="M176.3,161.5L177.4,165.1" stroke="#fff" stroke-width="0.89" opacity="0.38"/><path d="M159.5,135.5L158.6,137.8" stroke="#fff" stroke-width="0.57" opacity="0.25"/><path d="M158.6,137.8L157.8,140.0" stroke="#fff" stroke-width="0.81" opacity="0.45"/><path d="M201.6,137.3L206.6,139.3" stroke="#fff" stroke-width="0.60" opacity="0.20"/><path d="M206.6,139.3L211.6,141.4" stroke="#fff" stroke-width="0.86" opacity="0.37"/><path d="M179.9,134.4L181.5,135.7" stroke="#fff" stroke-width="0.42" opacity="0.41"/><path d="M181.5,135.7L183.1,136.9" stroke="#fff" stroke-width="0.59" opacity="0.74"/><path d="M146.0,109.3L144.2,108.1" stroke="#fff" stroke-width="0.43" opacity="0.24"/><path d="M144.2,108.1L142.5,106.9" stroke="#fff" stroke-width="0.61" opacity="0.44"/><path d="M166.1,93.0L166.3,89.0" stroke="#fff" stroke-width="0.58" opacity="0.34"/><path d="M166.3,89.0L166.4,85.1" stroke="#fff" stroke-width="0.83" opacity="0.61"/><path d="M160.0,193.5L159.2,205.8" stroke="#fff" stroke-width="0.45" opacity="0.36"/><path d="M159.2,205.8L158.4,218.0" stroke="#fff" stroke-width="0.64" opacity="0.65"/><path d="M204.9,110.9L208.5,109.9" stroke="#fff" stroke-width="0.36" opacity="0.48"/><path d="M208.5,109.9L212.1,108.9" stroke="#fff" stroke-width="0.52" opacity="0.87"/><path d="M175.6,89.3L177.1,85.0" stroke="#fff" stroke-width="0.49" opacity="0.28"/><path d="M177.1,85.0L178.5,80.8" stroke="#fff" stroke-width="0.71" opacity="0.50"/><path d="M219.3,118.7L224.1,118.4" stroke="#fff" stroke-width="0.35" opacity="0.34"/><path d="M224.1,118.4L229.0,118.1" stroke="#fff" stroke-width="0.50" opacity="0.61"/><path d="M119.8,168.9L113.2,175.8" stroke="#fff" stroke-width="0.52" opacity="0.24"/><path d="M113.2,175.8L106.6,182.7" stroke="#fff" stroke-width="0.74" opacity="0.44"/><path d="M181.2,146.9L182.8,149.3" stroke="#fff" stroke-width="0.59" opacity="0.35"/><path d="M182.8,149.3L184.4,151.8" stroke="#fff" stroke-width="0.85" opacity="0.63"/><path d="M112.9,61.7L108.2,56.3" stroke="#fff" stroke-width="0.50" opacity="0.24"/><path d="M108.2,56.3L103.6,50.9" stroke="#fff" stroke-width="0.71" opacity="0.43"/><path d="M165.5,115.9L165.7,114.5" stroke="#fff" stroke-width="0.59" opacity="0.44"/><path d="M165.7,114.5L165.8,113.1" stroke="#fff" stroke-width="0.84" opacity="0.80"/><path d="M187.3,134.9L190.9,136.9" stroke="#fff" stroke-width="0.38" opacity="0.34"/><path d="M190.9,136.9L194.4,138.9" stroke="#fff" stroke-width="0.54" opacity="0.61"/><path d="M89.5,137.0L79.7,139.0" stroke="#fff" stroke-width="0.59" opacity="0.28"/><path d="M79.7,139.0L69.9,140.9" stroke="#fff" stroke-width="0.84" opacity="0.52"/><path d="M173.7,86.3L175.3,79.9" stroke="#fff" stroke-width="0.38" opacity="0.44"/><path d="M175.3,79.9L176.9,73.5" stroke="#fff" stroke-width="0.54" opacity="0.80"/><path d="M176.6,166.6L178.1,172.3" stroke="#fff" stroke-width="0.39" opacity="0.44"/><path d="M178.1,172.3L179.7,177.9" stroke="#fff" stroke-width="0.56" opacity="0.81"/><path d="M153.8,148.9L153.0,150.9" stroke="#fff" stroke-width="0.44" opacity="0.33"/><path d="M153.0,150.9L152.1,153.0" stroke="#fff" stroke-width="0.62" opacity="0.61"/><path d="M157.6,90.2L156.5,85.3" stroke="#fff" stroke-width="0.38" opacity="0.31"/><path d="M156.5,85.3L155.5,80.5" stroke="#fff" stroke-width="0.54" opacity="0.57"/><path d="M89.4,140.5L77.3,143.4" stroke="#fff" stroke-width="0.53" opacity="0.20"/><path d="M77.3,143.4L65.2,146.4" stroke="#fff" stroke-width="0.76" opacity="0.36"/><path d="M122.8,162.8L119.1,166.4" stroke="#fff" stroke-width="0.51" opacity="0.33"/><path d="M119.1,166.4L115.4,170.0" stroke="#fff" stroke-width="0.73" opacity="0.60"/><path d="M243.9,127.2L256.3,128.0" stroke="#fff" stroke-width="0.41" opacity="0.38"/><path d="M256.3,128.0L268.7,128.8" stroke="#fff" stroke-width="0.58" opacity="0.69"/><path d="M156.2,154.7L155.1,159.1" stroke="#fff" stroke-width="0.43" opacity="0.29"/><path d="M155.1,159.1L154.0,163.4" stroke="#fff" stroke-width="0.62" opacity="0.54"/><path d="M121.6,156.7L117.7,159.8" stroke="#fff" stroke-width="0.41" opacity="0.41"/><path d="M117.7,159.8L113.7,163.0" stroke="#fff" stroke-width="0.58" opacity="0.75"/><path d="M128.4,188.7L123.8,197.1" stroke="#fff" stroke-width="0.55" opacity="0.29"/><path d="M123.8,197.1L119.1,205.6" stroke="#fff" stroke-width="0.79" opacity="0.53"/><path d="M170.7,110.6L171.3,109.4" stroke="#fff" stroke-width="0.38" opacity="0.40"/><path d="M171.3,109.4L171.9,108.2" stroke="#fff" stroke-width="0.54" opacity="0.72"/><path d="M159.7,103.3L159.1,101.0" stroke="#fff" stroke-width="0.58" opacity="0.37"/><path d="M159.1,101.0L158.4,98.6" stroke="#fff" stroke-width="0.83" opacity="0.68"/><path d="M183.9,134.2L185.7,135.3" stroke="#fff" stroke-width="0.38" opacity="0.32"/><path d="M185.7,135.3L187.4,136.4" stroke="#fff" stroke-width="0.55" opacity="0.57"/><path d="M231.2,154.7L238.6,158.3" stroke="#fff" stroke-width="0.49" opacity="0.39"/><path d="M238.6,158.3L245.9,161.9" stroke="#fff" stroke-width="0.70" opacity="0.71"/><path d="M171.8,55.6L172.5,48.6" stroke="#fff" stroke-width="0.44" opacity="0.32"/><path d="M172.5,48.6L173.3,41.6" stroke="#fff" stroke-width="0.63" opacity="0.58"/><path d="M200.2,125.5L205.6,126.0" stroke="#fff" stroke-width="0.62" opacity="0.43"/><path d="M205.6,126.0L210.9,126.5" stroke="#fff" stroke-width="0.89" opacity="0.78"/><path d="M137.4,78.9L135.7,76.2" stroke="#fff" stroke-width="0.44" opacity="0.30"/><path d="M135.7,76.2L134.0,73.5" stroke="#fff" stroke-width="0.63" opacity="0.54"/><path d="M156.6,110.7L155.5,109.2" stroke="#fff" stroke-width="0.49" opacity="0.43"/><path d="M155.5,109.2L154.4,107.7" stroke="#fff" stroke-width="0.70" opacity="0.78"/><path d="M188.0,76.4L189.9,72.7" stroke="#fff" stroke-width="0.56" opacity="0.47"/><path d="M189.9,72.7L191.7,69.1" stroke="#fff" stroke-width="0.81" opacity="0.85"/><path d="M134.1,112.4L130.1,111.2" stroke="#fff" stroke-width="0.39" opacity="0.41"/><path d="M130.1,111.2L126.2,110.0" stroke="#fff" stroke-width="0.56" opacity="0.74"/><path d="M208.7,118.3L215.4,117.8" stroke="#fff" stroke-width="0.58" opacity="0.25"/><path d="M215.4,117.8L222.0,117.2" stroke="#fff" stroke-width="0.83" opacity="0.46"/><path d="M214.0,104.2L218.2,102.7" stroke="#fff" stroke-width="0.37" opacity="0.27"/><path d="M218.2,102.7L222.3,101.2" stroke="#fff" stroke-width="0.53" opacity="0.48"/><path d="M113.6,95.4L108.5,92.7" stroke="#fff" stroke-width="0.61" opacity="0.30"/><path d="M108.5,92.7L103.4,90.1" stroke="#fff" stroke-width="0.87" opacity="0.55"/><path d="M149.9,125.5L146.9,126.2" stroke="#fff" stroke-width="0.39" opacity="0.47"/><path d="M146.9,126.2L143.9,126.9" stroke="#fff" stroke-width="0.55" opacity="0.85"/><path d="M119.0,109.2L113.0,107.5" stroke="#fff" stroke-width="0.42" opacity="0.47"/><path d="M113.0,107.5L107.0,105.9" stroke="#fff" stroke-width="0.61" opacity="0.85"/><path d="M231.1,118.7L239.9,118.3" stroke="#fff" stroke-width="0.38" opacity="0.44"/><path d="M239.9,118.3L248.7,117.8" stroke="#fff" stroke-width="0.55" opacity="0.80"/><path d="M147.3,192.3L145.8,198.4" stroke="#fff" stroke-width="0.51" opacity="0.44"/><path d="M145.8,198.4L144.3,204.5" stroke="#fff" stroke-width="0.73" opacity="0.81"/><path d="M183.0,164.8L184.3,167.8" stroke="#fff" stroke-width="0.36" opacity="0.25"/><path d="M184.3,167.8L185.6,170.8" stroke="#fff" stroke-width="0.51" opacity="0.45"/><path d="M240.0,115.8L250.4,115.0" stroke="#fff" stroke-width="0.44" opacity="0.40"/><path d="M250.4,115.0L260.9,114.1" stroke="#fff" stroke-width="0.62" opacity="0.72"/><path d="M162.1,87.9L161.7,83.1" stroke="#fff" stroke-width="0.58" opacity="0.20"/><path d="M161.7,83.1L161.3,78.4" stroke="#fff" stroke-width="0.82" opacity="0.36"/><path d="M177.4,160.6L178.4,163.7" stroke="#fff" stroke-width="0.46" opacity="0.36"/><path d="M178.4,163.7L179.4,166.8" stroke="#fff" stroke-width="0.65" opacity="0.66"/><path d="M185.2,161.4L187.1,165.2" stroke="#fff" stroke-width="0.51" opacity="0.29"/><path d="M187.1,165.2L189.1,168.9" stroke="#fff" stroke-width="0.73" opacity="0.53"/><path d="M159.2,115.2L158.1,113.9" stroke="#fff" stroke-width="0.39" opacity="0.48"/><path d="M158.1,113.9L157.1,112.5" stroke="#fff" stroke-width="0.56" opacity="0.88"/><path d="M131.7,98.0L128.0,95.3" stroke="#fff" stroke-width="0.52" opacity="0.40"/><path d="M128.0,95.3L124.2,92.6" stroke="#fff" stroke-width="0.75" opacity="0.73"/><path d="M167.8,60.5L168.2,53.1" stroke="#fff" stroke-width="0.63" opacity="0.45"/><path d="M168.2,53.1L168.5,45.8" stroke="#fff" stroke-width="0.90" opacity="0.81"/><path d="M186.9,93.3L189.6,90.0" stroke="#fff" stroke-width="0.51" opacity="0.47"/><path d="M189.6,90.0L192.2,86.6" stroke="#fff" stroke-width="0.73" opacity="0.85"/><path d="M120.4,114.7L115.3,113.9" stroke="#fff" stroke-width="0.60" opacity="0.29"/><path d="M115.3,113.9L110.3,113.0" stroke="#fff" stroke-width="0.86" opacity="0.53"/><path d="M220.9,142.1L230.5,145.5" stroke="#fff" stroke-width="0.55" opacity="0.37"/><path d="M230.5,145.5L240.1,149.0" stroke="#fff" stroke-width="0.79" opacity="0.68"/><path d="M165.0,93.5L165.1,89.4" stroke="#fff" stroke-width="0.37" opacity="0.23"/><path d="M165.1,89.4L165.1,85.4" stroke="#fff" stroke-width="0.53" opacity="0.42"/><path d="M123.9,136.1L119.3,137.7" stroke="#fff" stroke-width="0.36" opacity="0.40"/><path d="M119.3,137.7L114.8,139.3" stroke="#fff" stroke-width="0.52" opacity="0.73"/><path d="M141.3,118.1L138.8,117.7" stroke="#fff" stroke-width="0.46" opacity="0.26"/><path d="M138.8,117.7L136.2,117.3" stroke="#fff" stroke-width="0.66" opacity="0.48"/><path d="M231.5,152.6L243.3,158.1" stroke="#fff" stroke-width="0.54" opacity="0.45"/><path d="M243.3,158.1L255.2,163.5" stroke="#fff" stroke-width="0.77" opacity="0.83"/><path d="M106.9,153.1L102.0,155.7" stroke="#fff" stroke-width="0.56" opacity="0.36"/><path d="M102.0,155.7L97.1,158.4" stroke="#fff" stroke-width="0.80" opacity="0.66"/><path d="M175.6,114.4L177.7,113.0" stroke="#fff" stroke-width="0.38" opacity="0.36"/><path d="M177.7,113.0L179.7,111.6" stroke="#fff" stroke-width="0.55" opacity="0.65"/><path d="M170.5,120.2L171.4,119.9" stroke="#fff" stroke-width="0.43" opacity="0.29"/><path d="M171.4,119.9L172.3,119.6" stroke="#fff" stroke-width="0.62" opacity="0.53"/><path d="M231.4,149.7L242.0,154.1" stroke="#fff" stroke-width="0.46" opacity="0.30"/><path d="M242.0,154.1L252.6,158.5" stroke="#fff" stroke-width="0.66" opacity="0.55"/><path d="M156.6,117.2L155.8,116.7" stroke="#fff" stroke-width="0.60" opacity="0.29"/><path d="M155.8,116.7L154.9,116.2" stroke="#fff" stroke-width="0.86" opacity="0.52"/><path d="M89.6,122.7L76.2,122.9" stroke="#fff" stroke-width="0.48" opacity="0.25"/><path d="M76.2,122.9L62.7,123.0" stroke="#fff" stroke-width="0.69" opacity="0.46"/><path d="M143.8,193.3L140.3,205.3" stroke="#fff" stroke-width="0.40" opacity="0.45"/><path d="M140.3,205.3L136.8,217.4" stroke="#fff" stroke-width="0.58" opacity="0.81"/><path d="M139.8,154.5L137.7,157.2" stroke="#fff" stroke-width="0.60" opacity="0.49"/><path d="M137.7,157.2L135.6,159.9" stroke="#fff" stroke-width="0.85" opacity="0.90"/><path d="M180.4,172.4L181.7,176.6" stroke="#fff" stroke-width="0.60" opacity="0.21"/><path d="M181.7,176.6L183.0,180.8" stroke="#fff" stroke-width="0.85" opacity="0.38"/><path d="M211.6,158.9L216.2,162.5" stroke="#fff" stroke-width="0.60" opacity="0.46"/><path d="M216.2,162.5L220.8,166.1" stroke="#fff" stroke-width="0.86" opacity="0.83"/><path d="M161.0,106.4L160.4,103.8" stroke="#fff" stroke-width="0.61" opacity="0.33"/><path d="M160.4,103.8L159.8,101.2" stroke="#fff" stroke-width="0.88" opacity="0.59"/><path d="M184.5,132.7L186.7,133.9" stroke="#fff" stroke-width="0.55" opacity="0.25"/><path d="M186.7,133.9L188.9,135.1" stroke="#fff" stroke-width="0.78" opacity="0.46"/><path d="M174.5,143.3L176.1,146.5" stroke="#fff" stroke-width="0.57" opacity="0.31"/><path d="M176.1,146.5L177.6,149.8" stroke="#fff" stroke-width="0.82" opacity="0.55"/><path d="M127.2,61.2L122.3,53.2" stroke="#fff" stroke-width="0.41" opacity="0.28"/><path d="M122.3,53.2L117.4,45.3" stroke="#fff" stroke-width="0.59" opacity="0.52"/><path d="M214.3,97.4L218.9,95.1" stroke="#fff" stroke-width="0.53" opacity="0.22"/><path d="M218.9,95.1L223.6,92.8" stroke="#fff" stroke-width="0.76" opacity="0.40"/><path d="M203.1,117.9L208.0,117.4" stroke="#fff" stroke-width="0.50" opacity="0.21"/><path d="M208.0,117.4L213.0,116.8" stroke="#fff" stroke-width="0.71" opacity="0.37"/><path d="M142.8,106.1L140.6,104.6" stroke="#fff" stroke-width="0.57" opacity="0.22"/><path d="M140.6,104.6L138.4,103.0" stroke="#fff" stroke-width="0.82" opacity="0.40"/><path d="M151.1,182.4L149.9,187.8" stroke="#fff" stroke-width="0.43" opacity="0.36"/><path d="M149.9,187.8L148.7,193.1" stroke="#fff" stroke-width="0.61" opacity="0.65"/><path d="M192.9,188.7L198.0,200.7" stroke="#fff" stroke-width="0.36" opacity="0.33"/><path d="M198.0,200.7L203.0,212.7" stroke="#fff" stroke-width="0.51" opacity="0.60"/><path d="M164.8,87.5L164.9,81.3" stroke="#fff" stroke-width="0.49" opacity="0.25"/><path d="M164.9,81.3L164.9,75.1" stroke="#fff" stroke-width="0.70" opacity="0.45"/><path d="M114.3,103.5L109.0,101.6" stroke="#fff" stroke-width="0.53" opacity="0.43"/><path d="M109.0,101.6L103.7,99.6" stroke="#fff" stroke-width="0.76" opacity="0.78"/><path d="M121.5,117.4L114.3,116.7" stroke="#fff" stroke-width="0.54" opacity="0.35"/><path d="M114.3,116.7L107.1,115.9" stroke="#fff" stroke-width="0.77" opacity="0.64"/><path d="M182.7,116.3L185.8,115.4" stroke="#fff" stroke-width="0.40" opacity="0.38"/><path d="M185.8,115.4L189.0,114.4" stroke="#fff" stroke-width="0.57" opacity="0.68"/><path d="M168.2,160.4L168.8,166.6" stroke="#fff" stroke-width="0.57" opacity="0.43"/><path d="M168.8,166.6L169.4,172.7" stroke="#fff" stroke-width="0.81" opacity="0.79"/><path d="M168.4,164.0L168.8,167.8" stroke="#fff" stroke-width="0.51" opacity="0.34"/><path d="M168.8,167.8L169.1,171.6" stroke="#fff" stroke-width="0.73" opacity="0.62"/><path d="M213.6,133.0L220.9,134.7" stroke="#fff" stroke-width="0.51" opacity="0.46"/><path d="M220.9,134.7L228.2,136.3" stroke="#fff" stroke-width="0.73" opacity="0.83"/><path d="M172.0,137.6L172.6,138.9" stroke="#fff" stroke-width="0.49" opacity="0.32"/><path d="M172.6,138.9L173.2,140.1" stroke="#fff" stroke-width="0.70" opacity="0.59"/><path d="M140.9,131.1L136.9,132.7" stroke="#fff" stroke-width="0.37" opacity="0.47"/><path d="M136.9,132.7L132.9,134.2" stroke="#fff" stroke-width="0.53" opacity="0.85"/><path d="M122.8,102.6L116.1,99.5" stroke="#fff" stroke-width="0.42" opacity="0.24"/><path d="M116.1,99.5L109.4,96.4" stroke="#fff" stroke-width="0.60" opacity="0.43"/><path d="M161.3,130.5L160.8,131.7" stroke="#fff" stroke-width="0.52" opacity="0.35"/><path d="M160.8,131.7L160.3,132.9" stroke="#fff" stroke-width="0.75" opacity="0.64"/><path d="M160.1,171.4L159.8,174.9" stroke="#fff" stroke-width="0.58" opacity="0.24"/><path d="M159.8,174.9L159.5,178.4" stroke="#fff" stroke-width="0.83" opacity="0.44"/><path d="M164.2,139.8L164.1,142.7" stroke="#fff" stroke-width="0.58" opacity="0.43"/><path d="M164.1,142.7L164.0,145.7" stroke="#fff" stroke-width="0.83" opacity="0.78"/><path d="M198.4,135.6L202.1,137.1" stroke="#fff" stroke-width="0.41" opacity="0.49"/><path d="M202.1,137.1L205.8,138.6" stroke="#fff" stroke-width="0.59" opacity="0.88"/><path d="M205.5,133.0L211.9,134.8" stroke="#fff" stroke-width="0.63" opacity="0.24"/><path d="M211.9,134.8L218.3,136.5" stroke="#fff" stroke-width="0.89" opacity="0.43"/><path d="M106.0,138.9L102.3,140.0" stroke="#fff" stroke-width="0.42" opacity="0.46"/><path d="M102.3,140.0L98.6,141.1" stroke="#fff" stroke-width="0.60" opacity="0.84"/><path d="M186.8,149.2L189.0,152.0" stroke="#fff" stroke-width="0.47" opacity="0.22"/><path d="M189.0,152.0L191.3,154.8" stroke="#fff" stroke-width="0.67" opacity="0.39"/><path d="M242.6,139.0L254.4,141.6" stroke="#fff" stroke-width="0.56" opacity="0.26"/><path d="M254.4,141.6L266.2,144.2" stroke="#fff" stroke-width="0.79" opacity="0.48"/><path d="M163.8,168.8L163.7,173.1" stroke="#fff" stroke-width="0.48" opacity="0.47"/><path d="M163.7,173.1L163.6,177.3" stroke="#fff" stroke-width="0.68" opacity="0.86"/><path d="M144.4,145.3L140.5,149.7" stroke="#fff" stroke-width="0.52" opacity="0.20"/><path d="M140.5,149.7L136.7,154.2" stroke="#fff" stroke-width="0.74" opacity="0.37"/><path d="M120.3,152.9L117.4,155.0" stroke="#fff" stroke-width="0.45" opacity="0.40"/><path d="M117.4,155.0L114.4,157.1" stroke="#fff" stroke-width="0.64" opacity="0.73"/><path d="M197.4,84.6L203.0,78.2" stroke="#fff" stroke-width="0.48" opacity="0.31"/><path d="M203.0,78.2L208.6,71.8" stroke="#fff" stroke-width="0.69" opacity="0.57"/><path d="M183.6,93.5L186.6,88.8" stroke="#fff" stroke-width="0.41" opacity="0.30"/><path d="M186.6,88.8L189.7,84.2" stroke="#fff" stroke-width="0.59" opacity="0.54"/><path d="M183.6,164.7L185.1,168.1" stroke="#fff" stroke-width="0.41" opacity="0.26"/><path d="M185.1,168.1L186.7,171.6" stroke="#fff" stroke-width="0.58" opacity="0.47"/><path d="M136.5,127.8L133.0,128.5" stroke="#fff" stroke-width="0.63" opacity="0.40"/><path d="M133.0,128.5L129.5,129.2" stroke="#fff" stroke-width="0.90" opacity="0.72"/><path d="M178.5,105.9L180.1,104.0" stroke="#fff" stroke-width="0.37" opacity="0.40"/><path d="M180.1,104.0L181.8,102.0" stroke="#fff" stroke-width="0.53" opacity="0.73"/><path d="M147.6,142.0L146.3,143.4" stroke="#fff" stroke-width="0.40" opacity="0.27"/><path d="M146.3,143.4L145.1,144.8" stroke="#fff" stroke-width="0.57" opacity="0.49"/><path d="M106.5,168.3L98.0,175.1" stroke="#fff" stroke-width="0.43" opacity="0.30"/><path d="M98.0,175.1L89.6,181.9" stroke="#fff" stroke-width="0.61" opacity="0.55"/><path d="M207.6,183.9L212.0,190.2" stroke="#fff" stroke-width="0.56" opacity="0.41"/><path d="M212.0,190.2L216.3,196.5" stroke="#fff" stroke-width="0.81" opacity="0.75"/><path d="M171.0,117.9L171.9,117.2" stroke="#fff" stroke-width="0.46" opacity="0.22"/><path d="M171.9,117.2L172.9,116.6" stroke="#fff" stroke-width="0.65" opacity="0.40"/><path d="M186.9,101.7L190.5,98.4" stroke="#fff" stroke-width="0.50" opacity="0.21"/><path d="M190.5,98.4L194.2,95.1" stroke="#fff" stroke-width="0.71" opacity="0.38"/><path d="M146.1,136.6L144.7,137.7" stroke="#fff" stroke-width="0.39" opacity="0.37"/><path d="M144.7,137.7L143.3,138.8" stroke="#fff" stroke-width="0.56" opacity="0.68"/><path d="M193.2,127.8L196.7,128.5" stroke="#fff" stroke-width="0.50" opacity="0.23"/><path d="M196.7,128.5L200.1,129.2" stroke="#fff" stroke-width="0.72" opacity="0.42"/><path d="M157.9,97.7L156.8,93.8" stroke="#fff" stroke-width="0.54" opacity="0.24"/><path d="M156.8,93.8L155.7,89.9" stroke="#fff" stroke-width="0.77" opacity="0.43"/><path d="M172.2,147.7L173.4,151.7" stroke="#fff" stroke-width="0.46" opacity="0.31"/><path d="M173.4,151.7L174.6,155.8" stroke="#fff" stroke-width="0.66" opacity="0.56"/><path d="M179.8,105.0L181.5,103.2" stroke="#fff" stroke-width="0.45" opacity="0.26"/><path d="M181.5,103.2L183.1,101.4" stroke="#fff" stroke-width="0.64" opacity="0.47"/><path d="M172.3,124.0L173.7,124.4" stroke="#fff" stroke-width="0.51" opacity="0.44"/><path d="M173.7,124.4L175.2,124.7" stroke="#fff" stroke-width="0.73" opacity="0.79"/><path d="M192.4,117.7L196.6,117.1" stroke="#fff" stroke-width="0.61" opacity="0.26"/><path d="M196.6,117.1L200.8,116.4" stroke="#fff" stroke-width="0.87" opacity="0.47"/><path d="M144.1,70.7L140.4,61.5" stroke="#fff" stroke-width="0.59" opacity="0.26"/><path d="M140.4,61.5L136.7,52.3" stroke="#fff" stroke-width="0.85" opacity="0.48"/><path d="M156.2,112.6L155.0,111.3" stroke="#fff" stroke-width="0.46" opacity="0.21"/><path d="M155.0,111.3L153.8,110.0" stroke="#fff" stroke-width="0.66" opacity="0.38"/><path d="M142.2,142.3L139.3,144.9" stroke="#fff" stroke-width="0.43" opacity="0.24"/><path d="M139.3,144.9L136.4,147.5" stroke="#fff" stroke-width="0.61" opacity="0.44"/><path d="M131.0,145.7L128.2,147.6" stroke="#fff" stroke-width="0.54" opacity="0.27"/><path d="M128.2,147.6L125.4,149.6" stroke="#fff" stroke-width="0.77" opacity="0.48"/><path d="M190.8,139.3L193.9,141.3" stroke="#fff" stroke-width="0.39" opacity="0.37"/><path d="M193.9,141.3L197.0,143.4" stroke="#fff" stroke-width="0.56" opacity="0.67"/><path d="M150.6,77.2L148.5,70.6" stroke="#fff" stroke-width="0.36" opacity="0.31"/><path d="M148.5,70.6L146.4,64.0" stroke="#fff" stroke-width="0.51" opacity="0.57"/><path d="M157.7,130.0L156.7,131.2" stroke="#fff" stroke-width="0.37" opacity="0.34"/><path d="M156.7,131.2L155.6,132.4" stroke="#fff" stroke-width="0.52" opacity="0.62"/><path d="M129.8,101.1L126.2,98.9" stroke="#fff" stroke-width="0.42" opacity="0.20"/><path d="M126.2,98.9L122.6,96.8" stroke="#fff" stroke-width="0.60" opacity="0.36"/><path d="M123.5,181.0L118.2,188.5" stroke="#fff" stroke-width="0.42" opacity="0.39"/><path d="M118.2,188.5L112.9,196.1" stroke="#fff" stroke-width="0.60" opacity="0.72"/><path d="M180.6,159.5L182.9,164.7" stroke="#fff" stroke-width="0.62" opacity="0.30"/><path d="M182.9,164.7L185.1,169.9" stroke="#fff" stroke-width="0.88" opacity="0.55"/><path d="M97.5,87.1L87.2,81.8" stroke="#fff" stroke-width="0.53" opacity="0.38"/><path d="M87.2,81.8L76.9,76.4" stroke="#fff" stroke-width="0.75" opacity="0.69"/><path d="M133.6,141.5L130.5,143.4" stroke="#fff" stroke-width="0.58" opacity="0.46"/><path d="M130.5,143.4L127.4,145.3" stroke="#fff" stroke-width="0.83" opacity="0.83"/><path d="M110.7,171.6L107.3,174.6" stroke="#fff" stroke-width="0.39" opacity="0.35"/><path d="M107.3,174.6L104.0,177.7" stroke="#fff" stroke-width="0.55" opacity="0.63"/><path d="M152.9,152.5L150.7,158.2" stroke="#fff" stroke-width="0.39" opacity="0.25"/><path d="M150.7,158.2L148.5,163.9" stroke="#fff" stroke-width="0.56" opacity="0.46"/><path d="M172.3,177.8L173.0,182.7" stroke="#fff" stroke-width="0.35" opacity="0.36"/><path d="M173.0,182.7L173.6,187.7" stroke="#fff" stroke-width="0.50" opacity="0.65"/><path d="M146.1,136.7L143.6,138.6" stroke="#fff" stroke-width="0.53" opacity="0.36"/><path d="M143.6,138.6L141.1,140.6" stroke="#fff" stroke-width="0.76" opacity="0.65"/><path d="M131.0,88.5L125.4,83.0" stroke="#fff" stroke-width="0.62" opacity="0.29"/><path d="M125.4,83.0L119.9,77.5" stroke="#fff" stroke-width="0.89" opacity="0.53"/><path d="M123.8,180.8L119.9,186.4" stroke="#fff" stroke-width="0.55" opacity="0.40"/><path d="M119.9,186.4L116.0,192.1" stroke="#fff" stroke-width="0.79" opacity="0.73"/><path d="M134.7,50.7L129.9,39.4" stroke="#fff" stroke-width="0.39" opacity="0.38"/><path d="M129.9,39.4L125.1,28.0" stroke="#fff" stroke-width="0.56" opacity="0.69"/><path d="M117.1,124.8L112.0,125.1" stroke="#fff" stroke-width="0.43" opacity="0.42"/><path d="M112.0,125.1L106.9,125.4" stroke="#fff" stroke-width="0.61" opacity="0.76"/><path d="M141.7,117.0L139.3,116.5" stroke="#fff" stroke-width="0.44" opacity="0.25"/><path d="M139.3,116.5L137.0,116.0" stroke="#fff" stroke-width="0.63" opacity="0.45"/><path d="M149.4,120.7L148.1,120.6" stroke="#fff" stroke-width="0.37" opacity="0.22"/><path d="M148.1,120.6L146.7,120.4" stroke="#fff" stroke-width="0.53" opacity="0.41"/><path d="M160.7,108.2L160.1,106.3" stroke="#fff" stroke-width="0.57" opacity="0.34"/><path d="M160.1,106.3L159.5,104.3" stroke="#fff" stroke-width="0.81" opacity="0.61"/><path d="M201.3,181.8L207.4,191.7" stroke="#fff" stroke-width="0.36" opacity="0.27"/><path d="M207.4,191.7L213.4,201.6" stroke="#fff" stroke-width="0.52" opacity="0.49"/><path d="M99.8,119.0L92.9,118.6" stroke="#fff" stroke-width="0.55" opacity="0.27"/><path d="M92.9,118.6L86.0,118.3" stroke="#fff" stroke-width="0.79" opacity="0.49"/><path d="M158.2,92.5L157.6,89.3" stroke="#fff" stroke-width="0.56" opacity="0.45"/><path d="M157.6,89.3L156.9,86.1" stroke="#fff" stroke-width="0.80" opacity="0.81"/><path d="M187.4,79.7L190.0,75.0" stroke="#fff" stroke-width="0.55" opacity="0.38"/><path d="M190.0,75.0L192.6,70.2" stroke="#fff" stroke-width="0.78" opacity="0.69"/><path d="M196.5,65.0L198.8,60.8" stroke="#fff" stroke-width="0.46" opacity="0.39"/><path d="M198.8,60.8L201.2,56.6" stroke="#fff" stroke-width="0.65" opacity="0.72"/><path d="M167.0,141.5L167.2,143.0" stroke="#fff" stroke-width="0.51" opacity="0.48"/><path d="M167.2,143.0L167.4,144.5" stroke="#fff" stroke-width="0.73" opacity="0.87"/><path d="M180.3,119.1L182.9,118.6" stroke="#fff" stroke-width="0.47" opacity="0.38"/><path d="M182.9,118.6L185.6,118.1" stroke="#fff" stroke-width="0.67" opacity="0.70"/><path d="M104.9,167.4L94.1,175.5" stroke="#fff" stroke-width="0.36" opacity="0.41"/><path d="M94.1,175.5L83.3,183.7" stroke="#fff" stroke-width="0.52" opacity="0.74"/><path d="M171.4,128.2L172.4,129.1" stroke="#fff" stroke-width="0.55" opacity="0.49"/><path d="M172.4,129.1L173.3,129.9" stroke="#fff" stroke-width="0.79" opacity="0.90"/><path d="M186.9,142.8L188.4,144.3" stroke="#fff" stroke-width="0.50" opacity="0.34"/><path d="M188.4,144.3L190.0,145.8" stroke="#fff" stroke-width="0.72" opacity="0.62"/><path d="M144.5,142.6L141.1,146.1" stroke="#fff" stroke-width="0.58" opacity="0.28"/><path d="M141.1,146.1L137.7,149.5" stroke="#fff" stroke-width="0.84" opacity="0.51"/><path d="M124.5,154.5L118.3,159.6" stroke="#fff" stroke-width="0.62" opacity="0.31"/><path d="M118.3,159.6L112.0,164.7" stroke="#fff" stroke-width="0.89" opacity="0.56"/><path d="M148.7,78.4L146.2,71.4" stroke="#fff" stroke-width="0.39" opacity="0.25"/><path d="M146.2,71.4L143.6,64.4" stroke="#fff" stroke-width="0.56" opacity="0.45"/><path d="M223.4,168.8L228.6,172.9" stroke="#fff" stroke-width="0.49" opacity="0.23"/><path d="M228.6,172.9L233.8,177.0" stroke="#fff" stroke-width="0.70" opacity="0.42"/><path d="M161.4,128.6L160.8,129.9" stroke="#fff" stroke-width="0.39" opacity="0.38"/><path d="M160.8,129.9L160.1,131.1" stroke="#fff" stroke-width="0.56" opacity="0.69"/><path d="M161.3,144.6L160.8,147.6" stroke="#fff" stroke-width="0.45" opacity="0.27"/><path d="M160.8,147.6L160.4,150.5" stroke="#fff" stroke-width="0.65" opacity="0.49"/><path d="M174.9,125.4L177.0,126.1" stroke="#fff" stroke-width="0.44" opacity="0.22"/><path d="M177.0,126.1L179.2,126.8" stroke="#fff" stroke-width="0.62" opacity="0.39"/><path d="M181.9,160.1L185.1,167.2" stroke="#fff" stroke-width="0.41" opacity="0.45"/><path d="M185.1,167.2L188.3,174.3" stroke="#fff" stroke-width="0.58" opacity="0.83"/><path d="M128.2,125.6L122.2,126.2" stroke="#fff" stroke-width="0.46" opacity="0.21"/><path d="M122.2,126.2L116.2,126.8" stroke="#fff" stroke-width="0.66" opacity="0.38"/><path d="M112.8,104.9L105.7,102.6" stroke="#fff" stroke-width="0.43" opacity="0.48"/><path d="M105.7,102.6L98.6,100.3" stroke="#fff" stroke-width="0.61" opacity="0.87"/><path d="M217.2,62.2L223.0,55.5" stroke="#fff" stroke-width="0.58" opacity="0.41"/><path d="M223.0,55.5L228.9,48.8" stroke="#fff" stroke-width="0.83" opacity="0.75"/><path d="M168.3,129.1L168.8,130.1" stroke="#fff" stroke-width="0.38" opacity="0.22"/><path d="M168.8,130.1L169.2,131.0" stroke="#fff" stroke-width="0.55" opacity="0.39"/><path d="M125.7,169.9L121.9,174.5" stroke="#fff" stroke-width="0.49" opacity="0.20"/><path d="M121.9,174.5L118.1,179.1" stroke="#fff" stroke-width="0.71" opacity="0.36"/><path d="M183.8,196.6L184.9,200.9" stroke="#fff" stroke-width="0.50" opacity="0.44"/><path d="M184.9,200.9L186.0,205.2" stroke="#fff" stroke-width="0.71" opacity="0.80"/><path d="M180.6,63.7L182.3,57.4" stroke="#fff" stroke-width="0.57" opacity="0.44"/><path d="M182.3,57.4L184.0,51.1" stroke="#fff" stroke-width="0.82" opacity="0.81"/><path d="M173.5,43.5L174.1,38.1" stroke="#fff" stroke-width="0.62" opacity="0.31"/><path d="M174.1,38.1L174.7,32.7" stroke="#fff" stroke-width="0.88" opacity="0.57"/><path d="M157.9,98.4L156.6,94.1" stroke="#fff" stroke-width="0.36" opacity="0.37"/><path d="M156.6,94.1L155.4,89.7" stroke="#fff" stroke-width="0.51" opacity="0.67"/><path d="M169.7,156.4L170.2,160.2" stroke="#fff" stroke-width="0.53" opacity="0.44"/><path d="M170.2,160.2L170.7,164.0" stroke="#fff" stroke-width="0.76" opacity="0.80"/><path d="M129.6,162.0L125.9,166.1" stroke="#fff" stroke-width="0.43" opacity="0.47"/><path d="M125.9,166.1L122.3,170.3" stroke="#fff" stroke-width="0.61" opacity="0.85"/><path d="M159.1,133.7L158.3,135.2" stroke="#fff" stroke-width="0.56" opacity="0.26"/><path d="M158.3,135.2L157.6,136.7" stroke="#fff" stroke-width="0.80" opacity="0.47"/><path d="M162.7,75.6L162.4,68.9" stroke="#fff" stroke-width="0.40" opacity="0.22"/><path d="M162.4,68.9L162.1,62.1" stroke="#fff" stroke-width="0.57" opacity="0.41"/><path d="M184.6,147.0L187.0,150.0" stroke="#fff" stroke-width="0.35" opacity="0.34"/><path d="M187.0,150.0L189.3,152.9" stroke="#fff" stroke-width="0.50" opacity="0.63"/><path d="M140.2,139.0L137.0,141.3" stroke="#fff" stroke-width="0.62" opacity="0.25"/><path d="M137.0,141.3L133.7,143.6" stroke="#fff" stroke-width="0.88" opacity="0.46"/><path d="M186.4,101.7L189.9,98.4" stroke="#fff" stroke-width="0.38" opacity="0.49"/><path d="M189.9,98.4L193.5,95.2" stroke="#fff" stroke-width="0.54" opacity="0.89"/><path d="M94.8,154.8L88.9,157.6" stroke="#fff" stroke-width="0.46" opacity="0.41"/><path d="M88.9,157.6L83.1,160.4" stroke="#fff" stroke-width="0.66" opacity="0.74"/><path d="M176.2,145.6L178.0,149.2" stroke="#fff" stroke-width="0.62" opacity="0.29"/><path d="M178.0,149.2L179.7,152.8" stroke="#fff" stroke-width="0.88" opacity="0.53"/><path d="M177.9,151.6L180.4,157.2" stroke="#fff" stroke-width="0.39" opacity="0.38"/><path d="M180.4,157.2L182.9,162.8" stroke="#fff" stroke-width="0.56" opacity="0.70"/><path d="M126.0,159.2L122.7,162.4" stroke="#fff" stroke-width="0.52" opacity="0.46"/><path d="M122.7,162.4L119.4,165.6" stroke="#fff" stroke-width="0.75" opacity="0.84"/><path d="M197.2,80.8L201.2,75.7" stroke="#fff" stroke-width="0.51" opacity="0.23"/><path d="M201.2,75.7L205.2,70.7" stroke="#fff" stroke-width="0.73" opacity="0.41"/><path d="M194.5,73.4L197.9,67.7" stroke="#fff" stroke-width="0.54" opacity="0.32"/><path d="M197.9,67.7L201.4,62.1" stroke="#fff" stroke-width="0.77" opacity="0.58"/><path d="M147.5,137.3L144.9,139.5" stroke="#fff" stroke-width="0.51" opacity="0.35"/><path d="M144.9,139.5L142.4,141.7" stroke="#fff" stroke-width="0.73" opacity="0.63"/><path d="M216.1,132.5L222.0,133.8" stroke="#fff" stroke-width="0.52" opacity="0.37"/><path d="M222.0,133.8L227.9,135.0" stroke="#fff" stroke-width="0.74" opacity="0.68"/><path d="M180.4,114.8L182.5,113.8" stroke="#fff" stroke-width="0.63" opacity="0.42"/><path d="M182.5,113.8L184.7,112.8" stroke="#fff" stroke-width="0.90" opacity="0.76"/><path d="M141.4,177.8L137.1,188.0" stroke="#fff" stroke-width="0.46" opacity="0.45"/><path d="M137.1,188.0L132.9,198.2" stroke="#fff" stroke-width="0.66" opacity="0.83"/><path d="M220.2,178.6L226.7,185.3" stroke="#fff" stroke-width="0.42" opacity="0.45"/><path d="M226.7,185.3L233.2,192.0" stroke="#fff" stroke-width="0.59" opacity="0.81"/><path d="M120.1,61.2L112.9,51.5" stroke="#fff" stroke-width="0.57" opacity="0.35"/><path d="M112.9,51.5L105.8,41.7" stroke="#fff" stroke-width="0.82" opacity="0.63"/><path d="M175.5,121.6L177.7,121.5" stroke="#fff" stroke-width="0.55" opacity="0.27"/><path d="M177.7,121.5L179.9,121.4" stroke="#fff" stroke-width="0.78" opacity="0.49"/><path d="M178.6,84.9L180.4,80.1" stroke="#fff" stroke-width="0.59" opacity="0.25"/><path d="M180.4,80.1L182.2,75.3" stroke="#fff" stroke-width="0.85" opacity="0.46"/><path d="M154.8,174.7L154.1,178.3" stroke="#fff" stroke-width="0.51" opacity="0.43"/><path d="M154.1,178.3L153.4,181.9" stroke="#fff" stroke-width="0.72" opacity="0.78"/><path d="M140.8,123.4L136.8,123.6" stroke="#fff" stroke-width="0.59" opacity="0.43"/><path d="M136.8,123.6L132.7,123.9" stroke="#fff" stroke-width="0.84" opacity="0.77"/><path d="M95.2,99.7L84.3,96.3" stroke="#fff" stroke-width="0.39" opacity="0.30"/><path d="M84.3,96.3L73.4,92.8" stroke="#fff" stroke-width="0.56" opacity="0.55"/><path d="M171.7,127.1L172.8,127.9" stroke="#fff" stroke-width="0.59" opacity="0.44"/><path d="M172.8,127.9L173.9,128.7" stroke="#fff" stroke-width="0.85" opacity="0.81"/><path d="M179.1,135.1L180.9,136.7" stroke="#fff" stroke-width="0.59" opacity="0.38"/><path d="M180.9,136.7L182.7,138.3" stroke="#fff" stroke-width="0.84" opacity="0.69"/><path d="M173.9,115.5L175.9,114.0" stroke="#fff" stroke-width="0.41" opacity="0.38"/><path d="M175.9,114.0L178.0,112.6" stroke="#fff" stroke-width="0.58" opacity="0.70"/><path d="M207.4,80.1L211.0,76.6" stroke="#fff" stroke-width="0.54" opacity="0.32"/><path d="M211.0,76.6L214.5,73.1" stroke="#fff" stroke-width="0.77" opacity="0.59"/><path d="M195.7,125.0L199.0,125.3" stroke="#fff" stroke-width="0.53" opacity="0.28"/><path d="M199.0,125.3L202.2,125.6" stroke="#fff" stroke-width="0.75" opacity="0.50"/><path d="M118.9,87.4L115.2,84.5" stroke="#fff" stroke-width="0.39" opacity="0.40"/><path d="M115.2,84.5L111.5,81.7" stroke="#fff" stroke-width="0.55" opacity="0.73"/><path d="M149.5,125.3L148.0,125.6" stroke="#fff" stroke-width="0.61" opacity="0.38"/><path d="M148.0,125.6L146.6,125.9" stroke="#fff" stroke-width="0.88" opacity="0.69"/><path d="M151.9,138.0L149.3,141.2" stroke="#fff" stroke-width="0.54" opacity="0.42"/><path d="M149.3,141.2L146.8,144.4" stroke="#fff" stroke-width="0.78" opacity="0.75"/><path d="M146.2,144.3L144.0,146.9" stroke="#fff" stroke-width="0.39" opacity="0.38"/><path d="M144.0,146.9L141.8,149.5" stroke="#fff" stroke-width="0.56" opacity="0.70"/><path d="M105.3,152.4L98.9,155.7" stroke="#fff" stroke-width="0.48" opacity="0.35"/><path d="M98.9,155.7L92.4,159.0" stroke="#fff" stroke-width="0.68" opacity="0.63"/><path d="M194.2,110.7L198.8,108.9" stroke="#fff" stroke-width="0.42" opacity="0.37"/><path d="M198.8,108.9L203.3,107.2" stroke="#fff" stroke-width="0.59" opacity="0.67"/><path d="M149.4,190.9L147.9,197.3" stroke="#fff" stroke-width="0.59" opacity="0.40"/><path d="M147.9,197.3L146.5,203.7" stroke="#fff" stroke-width="0.84" opacity="0.72"/><path d="M92.6,143.0L85.0,145.2" stroke="#fff" stroke-width="0.56" opacity="0.37"/><path d="M85.0,145.2L77.4,147.4" stroke="#fff" stroke-width="0.80" opacity="0.68"/><path d="M154.5,125.4L153.0,125.9" stroke="#fff" stroke-width="0.43" opacity="0.33"/><path d="M153.0,125.9L151.5,126.4" stroke="#fff" stroke-width="0.61" opacity="0.59"/><path d="M191.3,114.2L195.4,113.0" stroke="#fff" stroke-width="0.54" opacity="0.27"/><path d="M195.4,113.0L199.5,111.8" stroke="#fff" stroke-width="0.77" opacity="0.48"/><path d="M151.3,130.3L148.7,131.9" stroke="#fff" stroke-width="0.42" opacity="0.32"/><path d="M148.7,131.9L146.1,133.6" stroke="#fff" stroke-width="0.60" opacity="0.58"/><path d="M128.4,178.0L122.5,187.1" stroke="#fff" stroke-width="0.52" opacity="0.36"/><path d="M122.5,187.1L116.5,196.3" stroke="#fff" stroke-width="0.74" opacity="0.65"/><path d="M223.4,164.3L227.4,167.2" stroke="#fff" stroke-width="0.45" opacity="0.31"/><path d="M227.4,167.2L231.4,170.1" stroke="#fff" stroke-width="0.65" opacity="0.56"/><path d="M155.3,67.3L154.4,61.7" stroke="#fff" stroke-width="0.60" opacity="0.48"/><path d="M154.4,61.7L153.4,56.1" stroke="#fff" stroke-width="0.86" opacity="0.87"/><path d="M217.0,129.7L223.2,130.6" stroke="#fff" stroke-width="0.45" opacity="0.33"/><path d="M223.2,130.6L229.3,131.5" stroke="#fff" stroke-width="0.64" opacity="0.61"/><path d="M142.3,172.9L139.2,179.8" stroke="#fff" stroke-width="0.62" opacity="0.49"/><path d="M139.2,179.8L136.2,186.6" stroke="#fff" stroke-width="0.89" opacity="0.89"/><path d="M199.9,120.4L205.8,120.1" stroke="#fff" stroke-width="0.53" opacity="0.40"/><path d="M205.8,120.1L211.7,119.8" stroke="#fff" stroke-width="0.76" opacity="0.74"/><path d="M175.6,121.8L177.3,121.8" stroke="#fff" stroke-width="0.46" opacity="0.39"/><path d="M177.3,121.8L179.0,121.8" stroke="#fff" stroke-width="0.66" opacity="0.71"/><path d="M180.5,199.7L181.8,206.1" stroke="#fff" stroke-width="0.45" opacity="0.24"/><path d="M181.8,206.1L183.1,212.5" stroke="#fff" stroke-width="0.65" opacity="0.43"/><path d="M116.7,159.4L113.4,162.0" stroke="#fff" stroke-width="0.40" opacity="0.39"/><path d="M113.4,162.0L110.1,164.6" stroke="#fff" stroke-width="0.57" opacity="0.71"/><path d="M44.0,4.3L20.0,-19.1" stroke="#f4f4ff" stroke-width="0.80" opacity="0.31"/><path d="M20.0,-19.1L-3.9,-42.4" stroke="#f4f4ff" stroke-width="1.14" opacity="0.56"/><path d="M127.6,129.4L107.9,133.3" stroke="#f4f4ff" stroke-width="0.43" opacity="0.37"/><path d="M107.9,133.3L88.2,137.3" stroke="#f4f4ff" stroke-width="0.62" opacity="0.68"/><path d="M37.0,92.7L11.4,86.8" stroke="#8c8cdc" stroke-width="0.88" opacity="0.31"/><path d="M11.4,86.8L-14.1,81.0" stroke="#8c8cdc" stroke-width="1.26" opacity="0.56"/><path d="M111.6,97.9L99.6,92.4" stroke="#8c8cdc" stroke-width="1.01" opacity="0.34"/><path d="M99.6,92.4L87.6,87.0" stroke="#8c8cdc" stroke-width="1.44" opacity="0.62"/><path d="M126.3,145.1L115.6,151.5" stroke="#f4f4ff" stroke-width="0.65" opacity="0.51"/><path d="M115.6,151.5L104.9,157.9" stroke="#f4f4ff" stroke-width="0.92" opacity="0.93"/><path d="M313.7,236.6L345.1,260.7" stroke="#f4f4ff" stroke-width="0.62" opacity="0.44"/><path d="M345.1,260.7L376.4,284.8" stroke="#f4f4ff" stroke-width="0.88" opacity="0.81"/><path d="M301.4,-35.4L313.5,-49.2" stroke="#8c8cdc" stroke-width="1.03" opacity="0.48"/><path d="M313.5,-49.2L325.5,-63.1" stroke="#8c8cdc" stroke-width="1.47" opacity="0.87"/><path d="M150.0,60.6L146.8,47.4" stroke="#8c8cdc" stroke-width="0.78" opacity="0.54"/><path d="M146.8,47.4L143.7,34.2" stroke="#8c8cdc" stroke-width="1.11" opacity="0.98"/><path d="M47.9,-24.8L32.7,-43.9" stroke="#8c8cdc" stroke-width="0.76" opacity="0.31"/><path d="M32.7,-43.9L17.5,-63.1" stroke="#8c8cdc" stroke-width="1.08" opacity="0.56"/><path d="M246.9,76.0L266.5,65.0" stroke="#f4f4ff" stroke-width="0.88" opacity="0.43"/><path d="M266.5,65.0L286.1,54.1" stroke="#f4f4ff" stroke-width="1.26" opacity="0.78"/><path d="M-33.0,120.8L-58.4,120.7" stroke="#f4f4ff" stroke-width="0.55" opacity="0.38"/><path d="M-58.4,120.7L-83.9,120.5" stroke="#f4f4ff" stroke-width="0.78" opacity="0.68"/><path d="M55.6,174.0L36.6,183.0" stroke="#f4f4ff" stroke-width="0.44" opacity="0.50"/><path d="M36.6,183.0L17.5,192.1" stroke="#f4f4ff" stroke-width="0.63" opacity="0.92"/><path d="M285.1,171.2L306.5,179.9" stroke="#8c8cdc" stroke-width="0.68" opacity="0.38"/><path d="M306.5,179.9L327.9,188.7" stroke="#8c8cdc" stroke-width="0.97" opacity="0.69"/><path d="M116.6,234.3L106.6,257.5" stroke="#f4f4ff" stroke-width="0.42" opacity="0.39"/><path d="M106.6,257.5L96.7,280.8" stroke="#f4f4ff" stroke-width="0.61" opacity="0.70"/><path d="M200.2,114.4L217.3,110.7" stroke="#8c8cdc" stroke-width="0.92" opacity="0.38"/><path d="M217.3,110.7L234.4,107.0" stroke="#8c8cdc" stroke-width="1.32" opacity="0.68"/><path d="M119.0,259.2L111.6,281.3" stroke="#f4f4ff" stroke-width="0.67" opacity="0.48"/><path d="M111.6,281.3L104.3,303.3" stroke="#f4f4ff" stroke-width="0.96" opacity="0.88"/><path d="M213.6,138.9L225.1,142.9" stroke="#f4f4ff" stroke-width="0.63" opacity="0.51"/><path d="M225.1,142.9L236.7,146.9" stroke="#f4f4ff" stroke-width="0.90" opacity="0.93"/><path d="M94.0,171.8L80.5,181.3" stroke="#f4f4ff" stroke-width="0.83" opacity="0.37"/><path d="M80.5,181.3L67.0,190.9" stroke="#f4f4ff" stroke-width="1.18" opacity="0.66"/><path d="M89.7,288.4L74.9,321.4" stroke="#8c8cdc" stroke-width="1.00" opacity="0.29"/><path d="M74.9,321.4L60.0,354.4" stroke="#8c8cdc" stroke-width="1.43" opacity="0.52"/><path d="M69.5,27.2L47.3,5.1" stroke="#8c8cdc" stroke-width="1.09" opacity="0.48"/><path d="M47.3,5.1L25.1,-17.0" stroke="#8c8cdc" stroke-width="1.55" opacity="0.88"/><path d="M133.1,104.7L119.0,96.9" stroke="#f4f4ff" stroke-width="0.90" opacity="0.53"/><path d="M119.0,96.9L104.9,89.2" stroke="#f4f4ff" stroke-width="1.29" opacity="0.96"/><path d="M321.2,201.7L352.3,217.5" stroke="#8c8cdc" stroke-width="0.85" opacity="0.40"/><path d="M352.3,217.5L383.3,233.3" stroke="#8c8cdc" stroke-width="1.21" opacity="0.72"/><path d="M233.0,184.5L245.7,196.1" stroke="#8c8cdc" stroke-width="1.04" opacity="0.46"/><path d="M245.7,196.1L258.4,207.8" stroke="#8c8cdc" stroke-width="1.48" opacity="0.83"/><path d="M111.8,105.5L100.8,102.1" stroke="#f4f4ff" stroke-width="0.69" opacity="0.53"/><path d="M100.8,102.1L89.7,98.6" stroke="#f4f4ff" stroke-width="0.99" opacity="0.96"/><path d="M191.2,228.4L197.9,255.2" stroke="#8c8cdc" stroke-width="1.06" opacity="0.40"/><path d="M197.9,255.2L204.6,282.1" stroke="#8c8cdc" stroke-width="1.51" opacity="0.74"/><path d="M275.3,144.1L299.0,148.8" stroke="#f4f4ff" stroke-width="0.66" opacity="0.46"/><path d="M299.0,148.8L322.7,153.6" stroke="#f4f4ff" stroke-width="0.95" opacity="0.84"/><path d="M31.2,235.3L7.1,255.7" stroke="#8c8cdc" stroke-width="0.92" opacity="0.33"/><path d="M7.1,255.7L-16.9,276.1" stroke="#8c8cdc" stroke-width="1.31" opacity="0.60"/><path d="M128.0,175.1L118.4,188.9" stroke="#f4f4ff" stroke-width="0.61" opacity="0.43"/><path d="M118.4,188.9L108.8,202.8" stroke="#f4f4ff" stroke-width="0.87" opacity="0.79"/><path d="M219.2,38.8L231.1,20.6" stroke="#f4f4ff" stroke-width="0.58" opacity="0.47"/><path d="M231.1,20.6L243.0,2.5" stroke="#f4f4ff" stroke-width="0.83" opacity="0.85"/><path d="M173.1,203.6L175.4,225.7" stroke="#8c8cdc" stroke-width="0.66" opacity="0.50"/><path d="M175.4,225.7L177.7,247.8" stroke="#8c8cdc" stroke-width="0.94" opacity="0.91"/><path d="M46.9,236.1L25.3,257.0" stroke="#f4f4ff" stroke-width="0.90" opacity="0.53"/><path d="M25.3,257.0L3.6,278.0" stroke="#f4f4ff" stroke-width="1.28" opacity="0.95"/><path d="M46.8,155.6L22.3,162.6" stroke="#8c8cdc" stroke-width="0.78" opacity="0.51"/><path d="M22.3,162.6L-2.2,169.6" stroke="#8c8cdc" stroke-width="1.11" opacity="0.92"/><path d="M321.5,157.1L350.3,163.6" stroke="#8c8cdc" stroke-width="0.70" opacity="0.54"/><path d="M350.3,163.6L379.1,170.0" stroke="#8c8cdc" stroke-width="1.01" opacity="0.98"/><path d="M181.3,-57.3L184.4,-90.3" stroke="#8c8cdc" stroke-width="0.73" opacity="0.42"/><path d="M184.4,-90.3L187.5,-123.3" stroke="#8c8cdc" stroke-width="1.04" opacity="0.77"/><path d="M120.9,85.9L105.8,73.4" stroke="#f4f4ff" stroke-width="0.87" opacity="0.46"/><path d="M105.8,73.4L90.7,60.9" stroke="#f4f4ff" stroke-width="1.25" opacity="0.84"/><path d="M29.3,277.5L10.4,299.2" stroke="#f4f4ff" stroke-width="0.78" opacity="0.35"/><path d="M10.4,299.2L-8.5,321.0" stroke="#f4f4ff" stroke-width="1.11" opacity="0.63"/><path d="M164.9,160.7L165.0,174.4" stroke="#8c8cdc" stroke-width="0.75" opacity="0.31"/><path d="M165.0,174.4L165.0,188.1" stroke="#8c8cdc" stroke-width="1.08" opacity="0.57"/><path d="M81.0,130.0L66.0,131.4" stroke="#f4f4ff" stroke-width="0.85" opacity="0.32"/><path d="M66.0,131.4L51.0,132.8" stroke="#f4f4ff" stroke-width="1.21" opacity="0.58"/><path d="M284.7,-23.8L305.6,-49.2" stroke="#f4f4ff" stroke-width="0.68" opacity="0.46"/><path d="M305.6,-49.2L326.5,-74.6" stroke="#f4f4ff" stroke-width="0.97" opacity="0.83"/><path d="M317.3,37.2L331.8,29.1" stroke="#f4f4ff" stroke-width="0.60" opacity="0.49"/><path d="M331.8,29.1L346.3,21.1" stroke="#f4f4ff" stroke-width="0.85" opacity="0.89"/><path d="M176.8,237.9L179.5,263.2" stroke="#f4f4ff" stroke-width="0.67" opacity="0.43"/><path d="M179.5,263.2L182.1,288.5" stroke="#f4f4ff" stroke-width="0.95" opacity="0.78"/><path d="M120.0,184.5L109.1,199.7" stroke="#f4f4ff" stroke-width="0.74" opacity="0.29"/><path d="M109.1,199.7L98.2,215.0" stroke="#f4f4ff" stroke-width="1.06" opacity="0.54"/><path d="M208.2,91.1L219.7,83.0" stroke="#f4f4ff" stroke-width="0.57" opacity="0.51"/><path d="M219.7,83.0L231.2,74.8" stroke="#f4f4ff" stroke-width="0.82" opacity="0.94"/><path d="M308.2,180.3L320.7,185.4" stroke="#f4f4ff" stroke-width="0.90" opacity="0.46"/><path d="M320.7,185.4L333.1,190.4" stroke="#f4f4ff" stroke-width="1.29" opacity="0.84"/><path d="M273.0,-17.1L285.0,-32.5" stroke="#f4f4ff" stroke-width="0.51" opacity="0.42"/><path d="M285.0,-32.5L297.1,-48.0" stroke="#f4f4ff" stroke-width="0.73" opacity="0.76"/><path d="M88.7,221.0L73.7,240.5" stroke="#f4f4ff" stroke-width="0.66" opacity="0.30"/><path d="M73.7,240.5L58.6,260.1" stroke="#f4f4ff" stroke-width="0.94" opacity="0.54"/><path d="M29.8,133.1L-0.5,135.6" stroke="#8c8cdc" stroke-width="0.78" opacity="0.37"/><path d="M-0.5,135.6L-30.9,138.1" stroke="#8c8cdc" stroke-width="1.11" opacity="0.67"/><path d="M104.2,-72.8L89.6,-119.7" stroke="#f4f4ff" stroke-width="0.84" opacity="0.53"/><path d="M89.6,-119.7L75.1,-166.6" stroke="#f4f4ff" stroke-width="1.20" opacity="0.97"/><path d="M286.9,137.6L314.3,141.1" stroke="#f4f4ff" stroke-width="0.72" opacity="0.53"/><path d="M314.3,141.1L341.7,144.6" stroke="#f4f4ff" stroke-width="1.03" opacity="0.97"/><path d="M274.7,188.4L292.1,198.9" stroke="#8c8cdc" stroke-width="1.06" opacity="0.54"/><path d="M292.1,198.9L309.5,209.4" stroke="#8c8cdc" stroke-width="1.51" opacity="0.98"/><path d="M205.0,128.1L223.7,131.0" stroke="#f4f4ff" stroke-width="0.70" opacity="0.48"/><path d="M223.7,131.0L242.3,133.8" stroke="#f4f4ff" stroke-width="1.01" opacity="0.88"/><path d="M177.2,89.2L181.4,78.2" stroke="#f4f4ff" stroke-width="0.83" opacity="0.39"/><path d="M181.4,78.2L185.5,67.1" stroke="#f4f4ff" stroke-width="1.18" opacity="0.70"/><path d="M114.8,205.7L104.5,223.0" stroke="#8c8cdc" stroke-width="0.92" opacity="0.42"/><path d="M104.5,223.0L94.2,240.3" stroke="#8c8cdc" stroke-width="1.31" opacity="0.76"/><path d="M84.7,256.5L73.8,274.8" stroke="#f4f4ff" stroke-width="0.51" opacity="0.32"/><path d="M73.8,274.8L62.9,293.1" stroke="#f4f4ff" stroke-width="0.72" opacity="0.57"/><path d="M162.1,243.2L161.6,266.5" stroke="#8c8cdc" stroke-width="0.95" opacity="0.35"/><path d="M161.6,266.5L161.1,289.9" stroke="#8c8cdc" stroke-width="1.36" opacity="0.63"/><path d="M84.6,110.5L65.7,107.7" stroke="#8c8cdc" stroke-width="0.78" opacity="0.37"/><path d="M65.7,107.7L46.7,105.0" stroke="#8c8cdc" stroke-width="1.11" opacity="0.66"/><path d="M141.6,-32.6L137.1,-63.1" stroke="#8c8cdc" stroke-width="1.00" opacity="0.34"/><path d="M137.1,-63.1L132.6,-93.5" stroke="#8c8cdc" stroke-width="1.43" opacity="0.62"/><path d="M186.7,229.4L191.7,253.6" stroke="#8c8cdc" stroke-width="1.08" opacity="0.55"/><path d="M191.7,253.6L196.6,277.9" stroke="#8c8cdc" stroke-width="1.54" opacity="1.00"/><path d="M119.6,160.7L103.1,174.8" stroke="#8c8cdc" stroke-width="1.02" opacity="0.38"/><path d="M103.1,174.8L86.6,189.0" stroke="#8c8cdc" stroke-width="1.45" opacity="0.69"/><path d="M132.0,260.0L125.6,286.7" stroke="#f4f4ff" stroke-width="0.43" opacity="0.41"/><path d="M125.6,286.7L119.3,313.4" stroke="#f4f4ff" stroke-width="0.61" opacity="0.75"/><path d="M130.6,153.9L118.1,165.5" stroke="#8c8cdc" stroke-width="1.06" opacity="0.54"/><path d="M118.1,165.5L105.7,177.1" stroke="#8c8cdc" stroke-width="1.51" opacity="0.98"/><path d="M252.4,81.7L270.7,73.3" stroke="#f4f4ff" stroke-width="0.88" opacity="0.33"/><path d="M270.7,73.3L288.9,64.9" stroke="#f4f4ff" stroke-width="1.26" opacity="0.60"/><path d="M268.1,240.3L291.5,267.1" stroke="#f4f4ff" stroke-width="0.64" opacity="0.38"/><path d="M291.5,267.1L315.0,293.9" stroke="#f4f4ff" stroke-width="0.92" opacity="0.69"/><path d="M226.0,179.7L239.6,192.4" stroke="#8c8cdc" stroke-width="0.80" opacity="0.29"/><path d="M239.6,192.4L253.1,205.2" stroke="#8c8cdc" stroke-width="1.14" opacity="0.52"/><path d="M140.9,185.6L135.8,199.3" stroke="#f4f4ff" stroke-width="0.70" opacity="0.48"/><path d="M135.8,199.3L130.6,213.1" stroke="#f4f4ff" stroke-width="1.00" opacity="0.88"/><path d="M-37.9,87.6L-58.7,84.1" stroke="#8c8cdc" stroke-width="0.78" opacity="0.48"/><path d="M-58.7,84.1L-79.6,80.6" stroke="#8c8cdc" stroke-width="1.12" opacity="0.88"/><path d="M276.4,64.4L292.5,56.1" stroke="#f4f4ff" stroke-width="0.56" opacity="0.49"/><path d="M292.5,56.1L308.5,47.8" stroke="#f4f4ff" stroke-width="0.81" opacity="0.90"/><path d="M280.7,101.8L309.9,96.7" stroke="#f4f4ff" stroke-width="0.51" opacity="0.53"/><path d="M309.9,96.7L339.0,91.7" stroke="#f4f4ff" stroke-width="0.73" opacity="0.97"/><path d="M203.7,116.5L220.1,114.3" stroke="#8c8cdc" stroke-width="0.71" opacity="0.32"/><path d="M220.1,114.3L236.5,112.0" stroke="#8c8cdc" stroke-width="1.01" opacity="0.59"/><path d="M158.5,49.2L157.5,38.0" stroke="#f4f4ff" stroke-width="0.66" opacity="0.45"/><path d="M157.5,38.0L156.5,26.7" stroke="#f4f4ff" stroke-width="0.95" opacity="0.83"/><path d="M98.5,136.8L87.1,139.3" stroke="#8c8cdc" stroke-width="0.76" opacity="0.45"/><path d="M87.1,139.3L75.7,141.8" stroke="#8c8cdc" stroke-width="1.08" opacity="0.81"/><path d="M82.8,209.9L68.1,225.7" stroke="#8c8cdc" stroke-width="1.06" opacity="0.43"/><path d="M68.1,225.7L53.4,241.4" stroke="#8c8cdc" stroke-width="1.52" opacity="0.79"/><path d="M50.1,187.9L31.5,198.5" stroke="#f4f4ff" stroke-width="0.53" opacity="0.53"/><path d="M31.5,198.5L13.0,209.2" stroke="#f4f4ff" stroke-width="0.76" opacity="0.97"/><path d="M281.5,-32.6L298.7,-55.4" stroke="#f4f4ff" stroke-width="0.56" opacity="0.32"/><path d="M298.7,-55.4L315.9,-78.1" stroke="#f4f4ff" stroke-width="0.80" opacity="0.59"/><path d="M151.8,45.8L149.2,30.0" stroke="#f4f4ff" stroke-width="0.56" opacity="0.30"/><path d="M149.2,30.0L146.5,14.2" stroke="#f4f4ff" stroke-width="0.80" opacity="0.55"/><path d="M127.3,32.0L119.0,12.2" stroke="#f4f4ff" stroke-width="0.67" opacity="0.38"/><path d="M119.0,12.2L110.8,-7.7" stroke="#f4f4ff" stroke-width="0.96" opacity="0.69"/><path d="M289.1,123.3L312.1,123.5" stroke="#f4f4ff" stroke-width="0.65" opacity="0.30"/><path d="M312.1,123.5L335.1,123.8" stroke="#f4f4ff" stroke-width="0.92" opacity="0.54"/><path d="M43.0,123.9L10.4,124.4" stroke="#8c8cdc" stroke-width="0.85" opacity="0.30"/><path d="M10.4,124.4L-22.2,124.9" stroke="#8c8cdc" stroke-width="1.21" opacity="0.54"/><path d="M188.5,48.6L196.2,24.9" stroke="#8c8cdc" stroke-width="1.07" opacity="0.41"/><path d="M196.2,24.9L203.9,1.3" stroke="#8c8cdc" stroke-width="1.53" opacity="0.75"/><path d="M44.0,182.4L18.2,195.3" stroke="#f4f4ff" stroke-width="0.56" opacity="0.51"/><path d="M18.2,195.3L-7.6,208.1" stroke="#f4f4ff" stroke-width="0.80" opacity="0.92"/><path d="M68.1,120.2L53.6,119.9" stroke="#f4f4ff" stroke-width="0.81" opacity="0.54"/><path d="M53.6,119.9L39.2,119.6" stroke="#f4f4ff" stroke-width="1.16" opacity="0.99"/><path d="M302.0,43.2L332.1,25.9" stroke="#f4f4ff" stroke-width="0.81" opacity="0.32"/><path d="M332.1,25.9L362.3,8.7" stroke="#f4f4ff" stroke-width="1.16" opacity="0.59"/><path d="M200.1,39.7L209.2,18.7" stroke="#8c8cdc" stroke-width="0.88" opacity="0.37"/><path d="M209.2,18.7L218.3,-2.4" stroke="#8c8cdc" stroke-width="1.26" opacity="0.67"/><path d="M202.3,-17.9L212.2,-54.9" stroke="#f4f4ff" stroke-width="0.45" opacity="0.46"/><path d="M212.2,-54.9L222.1,-91.8" stroke="#f4f4ff" stroke-width="0.65" opacity="0.83"/><path d="M328.4,256.4L352.5,276.2" stroke="#8c8cdc" stroke-width="0.97" opacity="0.48"/><path d="M352.5,276.2L376.6,295.9" stroke="#8c8cdc" stroke-width="1.39" opacity="0.88"/><path d="M311.2,108.2L338.5,105.6" stroke="#8c8cdc" stroke-width="1.06" opacity="0.49"/><path d="M338.5,105.6L365.8,103.0" stroke="#8c8cdc" stroke-width="1.51" opacity="0.88"/><path d="M207.1,-65.5L216.6,-107.8" stroke="#f4f4ff" stroke-width="0.66" opacity="0.38"/><path d="M216.6,-107.8L226.1,-150.0" stroke="#f4f4ff" stroke-width="0.94" opacity="0.69"/><path d="M141.0,153.2L133.0,163.7" stroke="#8c8cdc" stroke-width="0.95" opacity="0.49"/><path d="M133.0,163.7L125.0,174.2" stroke="#8c8cdc" stroke-width="1.36" opacity="0.89"/><path d="M121.0,1.9L114.6,-15.7" stroke="#8c8cdc" stroke-width="0.95" opacity="0.46"/><path d="M114.6,-15.7L108.2,-33.2" stroke="#8c8cdc" stroke-width="1.35" opacity="0.84"/><path d="M253.0,88.4L280.9,77.9" stroke="#8c8cdc" stroke-width="1.10" opacity="0.45"/><path d="M280.9,77.9L308.7,67.3" stroke="#8c8cdc" stroke-width="1.57" opacity="0.81"/><path d="M334.2,81.4L356.2,76.1" stroke="#f4f4ff" stroke-width="0.66" opacity="0.28"/><path d="M356.2,76.1L378.1,70.8" stroke="#f4f4ff" stroke-width="0.94" opacity="0.52"/><path d="M250.0,22.1L268.7,0.3" stroke="#8c8cdc" stroke-width="0.73" opacity="0.43"/><path d="M268.7,0.3L287.3,-21.6" stroke="#8c8cdc" stroke-width="1.04" opacity="0.79"/><path d="M169.8,215.8L170.4,226.8" stroke="#8c8cdc" stroke-width="0.89" opacity="0.54"/><path d="M170.4,226.8L171.0,237.9" stroke="#8c8cdc" stroke-width="1.27" opacity="0.97"/><path d="M94.6,37.7L83.4,24.3" stroke="#f4f4ff" stroke-width="0.89" opacity="0.31"/><path d="M83.4,24.3L72.2,10.8" stroke="#f4f4ff" stroke-width="1.27" opacity="0.56"/><path d="M20.1,186.8L-8.2,199.4" stroke="#f4f4ff" stroke-width="0.88" opacity="0.52"/><path d="M-8.2,199.4L-36.6,212.1" stroke="#f4f4ff" stroke-width="1.26" opacity="0.95"/><path d="M163.7,254.4L163.5,284.1" stroke="#8c8cdc" stroke-width="1.01" opacity="0.29"/><path d="M163.5,284.1L163.3,313.8" stroke="#8c8cdc" stroke-width="1.44" opacity="0.53"/><path d="M243.4,230.8L259.1,252.5" stroke="#f4f4ff" stroke-width="0.58" opacity="0.49"/><path d="M259.1,252.5L274.9,274.3" stroke="#f4f4ff" stroke-width="0.82" opacity="0.88"/><path d="M67.6,-7.7L52.0,-28.6" stroke="#8c8cdc" stroke-width="0.86" opacity="0.54"/><path d="M52.0,-28.6L36.3,-49.5" stroke="#8c8cdc" stroke-width="1.23" opacity="0.98"/><path d="M199.2,92.9L206.9,86.4" stroke="#f4f4ff" stroke-width="0.63" opacity="0.31"/><path d="M206.9,86.4L214.6,79.9" stroke="#f4f4ff" stroke-width="0.91" opacity="0.56"/><path d="M41.4,184.3L18.4,195.9" stroke="#f4f4ff" stroke-width="0.75" opacity="0.44"/><path d="M18.4,195.9L-4.6,207.5" stroke="#f4f4ff" stroke-width="1.08" opacity="0.81"/><path d="M320.7,168.8L335.0,173.1" stroke="#f4f4ff" stroke-width="0.43" opacity="0.30"/><path d="M335.0,173.1L349.2,177.4" stroke="#f4f4ff" stroke-width="0.61" opacity="0.54"/><path d="M72.3,197.5L51.3,214.6" stroke="#f4f4ff" stroke-width="0.66" opacity="0.44"/><path d="M51.3,214.6L30.3,231.8" stroke="#f4f4ff" stroke-width="0.94" opacity="0.79"/><path d="M79.8,316.3L70.0,338.5" stroke="#8c8cdc" stroke-width="1.05" opacity="0.41"/><path d="M70.0,338.5L60.3,360.8" stroke="#8c8cdc" stroke-width="1.51" opacity="0.75"/><path d="M74.4,179.0L55.8,190.7" stroke="#f4f4ff" stroke-width="0.77" opacity="0.40"/><path d="M55.8,190.7L37.2,202.4" stroke="#f4f4ff" stroke-width="1.10" opacity="0.72"/><path d="M89.1,206.9L76.2,221.4" stroke="#f4f4ff" stroke-width="0.62" opacity="0.36"/><path d="M76.2,221.4L63.2,235.9" stroke="#f4f4ff" stroke-width="0.89" opacity="0.65"/><path d="M181.4,6.3L185.5,-22.3" stroke="#f4f4ff" stroke-width="0.60" opacity="0.52"/><path d="M185.5,-22.3L189.6,-50.8" stroke="#f4f4ff" stroke-width="0.86" opacity="0.95"/><path d="M339.2,95.9L371.5,91.1" stroke="#f4f4ff" stroke-width="0.57" opacity="0.47"/><path d="M371.5,91.1L403.8,86.3" stroke="#f4f4ff" stroke-width="0.81" opacity="0.86"/><path d="M310.2,74.5L336.0,66.1" stroke="#f4f4ff" stroke-width="0.53" opacity="0.49"/><path d="M336.0,66.1L361.8,57.7" stroke="#f4f4ff" stroke-width="0.76" opacity="0.89"/><path d="M-40.3,70.5L-77.0,61.3" stroke="#8c8cdc" stroke-width="0.83" opacity="0.49"/><path d="M-77.0,61.3L-113.7,52.1" stroke="#8c8cdc" stroke-width="1.19" opacity="0.88"/><path d="M156.0,267.2L154.8,288.8" stroke="#f4f4ff" stroke-width="0.52" opacity="0.53"/><path d="M154.8,288.8L153.5,310.4" stroke="#f4f4ff" stroke-width="0.74" opacity="0.96"/><path d="M294.9,173.3L327.3,186.1" stroke="#8c8cdc" stroke-width="0.92" opacity="0.47"/><path d="M327.3,186.1L359.6,198.9" stroke="#8c8cdc" stroke-width="1.31" opacity="0.86"/><path d="M177.1,-46.9L178.9,-70.6" stroke="#f4f4ff" stroke-width="0.70" opacity="0.42"/><path d="M178.9,-70.6L180.6,-94.3" stroke="#f4f4ff" stroke-width="0.99" opacity="0.77"/><path d="M224.1,117.2L242.0,115.7" stroke="#f4f4ff" stroke-width="0.89" opacity="0.35"/><path d="M242.0,115.7L260.0,114.2" stroke="#f4f4ff" stroke-width="1.27" opacity="0.64"/><path d="M46.0,68.7L29.1,61.1" stroke="#f4f4ff" stroke-width="0.86" opacity="0.46"/><path d="M29.1,61.1L12.1,53.5" stroke="#f4f4ff" stroke-width="1.23" opacity="0.83"/><path d="M120.9,296.7L115.9,316.6" stroke="#f4f4ff" stroke-width="0.65" opacity="0.42"/><path d="M115.9,316.6L110.9,336.5" stroke="#f4f4ff" stroke-width="0.92" opacity="0.76"/><path d="M302.0,114.4L328.6,112.9" stroke="#f4f4ff" stroke-width="0.46" opacity="0.36"/><path d="M328.6,112.9L355.2,111.4" stroke="#f4f4ff" stroke-width="0.65" opacity="0.65"/><path d="M107.9,-26.8L97.9,-52.9" stroke="#8c8cdc" stroke-width="0.81" opacity="0.42"/><path d="M97.9,-52.9L87.9,-79.1" stroke="#8c8cdc" stroke-width="1.15" opacity="0.77"/><path d="M265.9,137.5L283.8,140.2" stroke="#8c8cdc" stroke-width="1.06" opacity="0.53"/><path d="M283.8,140.2L301.7,142.9" stroke="#8c8cdc" stroke-width="1.51" opacity="0.97"/><path d="M164.8,189.0L164.8,199.5" stroke="#f4f4ff" stroke-width="0.78" opacity="0.35"/><path d="M164.8,199.5L164.9,210.1" stroke="#f4f4ff" stroke-width="1.12" opacity="0.63"/><path d="M4.9,133.0L-25.4,135.0" stroke="#f4f4ff" stroke-width="0.52" opacity="0.47"/><path d="M-25.4,135.0L-55.7,137.1" stroke="#f4f4ff" stroke-width="0.75" opacity="0.85"/><path d="M134.7,31.1L128.3,11.6" stroke="#f4f4ff" stroke-width="0.57" opacity="0.40"/><path d="M128.3,11.6L121.9,-7.9" stroke="#f4f4ff" stroke-width="0.82" opacity="0.72"/><path d="M217.2,-5.2L230.7,-37.8" stroke="#8c8cdc" stroke-width="0.74" opacity="0.45"/><path d="M230.7,-37.8L244.2,-70.5" stroke="#8c8cdc" stroke-width="1.06" opacity="0.81"/><path d="M287.1,290.9L304.5,315.0" stroke="#f4f4ff" stroke-width="0.83" opacity="0.53"/><path d="M304.5,315.0L322.0,339.2" stroke="#f4f4ff" stroke-width="1.18" opacity="0.96"/><path d="M135.5,63.0L127.5,46.7" stroke="#8c8cdc" stroke-width="1.06" opacity="0.51"/><path d="M127.5,46.7L119.5,30.5" stroke="#8c8cdc" stroke-width="1.52" opacity="0.94"/><path d="M179.5,221.5L182.7,243.1" stroke="#8c8cdc" stroke-width="0.97" opacity="0.29"/><path d="M182.7,243.1L185.9,264.7" stroke="#8c8cdc" stroke-width="1.39" opacity="0.53"/><path d="M236.6,10.4L246.5,-5.0" stroke="#8c8cdc" stroke-width="0.80" opacity="0.55"/><path d="M246.5,-5.0L256.4,-20.3" stroke="#8c8cdc" stroke-width="1.15" opacity="0.99"/><path d="M10.9,10.1L-2.7,0.2" stroke="#8c8cdc" stroke-width="0.97" opacity="0.32"/><path d="M-2.7,0.2L-16.3,-9.7" stroke="#8c8cdc" stroke-width="1.39" opacity="0.59"/><path d="M142.7,275.5L139.1,300.5" stroke="#f4f4ff" stroke-width="0.56" opacity="0.43"/><path d="M139.1,300.5L135.5,325.4" stroke="#f4f4ff" stroke-width="0.80" opacity="0.78"/><path d="M103.1,200.5L93.1,213.2" stroke="#8c8cdc" stroke-width="0.64" opacity="0.36"/><path d="M93.1,213.2L83.1,226.0" stroke="#8c8cdc" stroke-width="0.91" opacity="0.66"/><path d="M94.9,76.4L78.2,65.6" stroke="#f4f4ff" stroke-width="0.67" opacity="0.36"/><path d="M78.2,65.6L61.6,54.7" stroke="#f4f4ff" stroke-width="0.96" opacity="0.66"/><path d="M294.2,10.8L319.8,-11.1" stroke="#f4f4ff" stroke-width="0.67" opacity="0.39"/><path d="M319.8,-11.1L345.3,-33.0" stroke="#f4f4ff" stroke-width="0.95" opacity="0.71"/><path d="M67.8,202.1L49.1,217.6" stroke="#f4f4ff" stroke-width="0.81" opacity="0.52"/><path d="M49.1,217.6L30.5,233.0" stroke="#f4f4ff" stroke-width="1.15" opacity="0.95"/><path d="M171.0,160.5L172.7,170.8" stroke="#f4f4ff" stroke-width="0.72" opacity="0.35"/><path d="M172.7,170.8L174.4,181.1" stroke="#f4f4ff" stroke-width="1.03" opacity="0.64"/><path d="M233.7,300.5L247.7,336.7" stroke="#f4f4ff" stroke-width="0.78" opacity="0.40"/><path d="M247.7,336.7L261.8,372.9" stroke="#f4f4ff" stroke-width="1.12" opacity="0.73"/><path d="M57.2,202.8L27.4,225.3" stroke="#f4f4ff" stroke-width="0.83" opacity="0.30"/><path d="M27.4,225.3L-2.5,247.7" stroke="#f4f4ff" stroke-width="1.18" opacity="0.54"/><path d="M168.8,331.7L169.4,365.6" stroke="#8c8cdc" stroke-width="1.05" opacity="0.42"/><path d="M169.4,365.6L170.1,399.5" stroke="#8c8cdc" stroke-width="1.50" opacity="0.76"/><path d="M213.2,119.1L230.2,118.0" stroke="#8c8cdc" stroke-width="0.82" opacity="0.45"/><path d="M230.2,118.0L247.1,117.0" stroke="#8c8cdc" stroke-width="1.17" opacity="0.82"/><path d="M269.3,209.3L290.8,227.1" stroke="#f4f4ff" stroke-width="0.71" opacity="0.44"/><path d="M290.8,227.1L312.2,245.0" stroke="#f4f4ff" stroke-width="1.01" opacity="0.79"/><path d="M219.7,227.0L233.4,253.2" stroke="#8c8cdc" stroke-width="0.85" opacity="0.42"/><path d="M233.4,253.2L247.2,279.5" stroke="#8c8cdc" stroke-width="1.21" opacity="0.77"/><path d="M92.6,240.8L83.5,255.9" stroke="#8c8cdc" stroke-width="0.95" opacity="0.33"/><path d="M83.5,255.9L74.4,270.9" stroke="#8c8cdc" stroke-width="1.36" opacity="0.61"/><path d="M319.2,198.0L353.4,214.8" stroke="#f4f4ff" stroke-width="0.47" opacity="0.45"/><path d="M353.4,214.8L387.6,231.7" stroke="#f4f4ff" stroke-width="0.67" opacity="0.82"/><path d="M150.7,303.1L147.8,341.3" stroke="#8c8cdc" stroke-width="0.65" opacity="0.49"/><path d="M147.8,341.3L144.8,379.6" stroke="#8c8cdc" stroke-width="0.92" opacity="0.90"/><path d="M210.0,177.1L216.8,185.4" stroke="#f4f4ff" stroke-width="0.89" opacity="0.36"/><path d="M216.8,185.4L223.6,193.6" stroke="#f4f4ff" stroke-width="1.27" opacity="0.66"/><path d="M153.9,305.7L152.1,336.5" stroke="#f4f4ff" stroke-width="0.88" opacity="0.29"/><path d="M152.1,336.5L150.3,367.2" stroke="#f4f4ff" stroke-width="1.25" opacity="0.52"/><path d="M68.9,81.8L49.4,73.7" stroke="#f4f4ff" stroke-width="0.51" opacity="0.41"/><path d="M49.4,73.7L29.9,65.5" stroke="#f4f4ff" stroke-width="0.73" opacity="0.75"/><path d="M241.3,106.5L262.2,102.3" stroke="#f4f4ff" stroke-width="0.45" opacity="0.33"/><path d="M262.2,102.3L283.1,98.1" stroke="#f4f4ff" stroke-width="0.65" opacity="0.59"/><path d="M171.7,208.9L173.8,234.2" stroke="#f4f4ff" stroke-width="0.75" opacity="0.45"/><path d="M173.8,234.2L175.8,259.4" stroke="#f4f4ff" stroke-width="1.07" opacity="0.81"/><path d="M42.9,232.0L29.3,244.3" stroke="#f4f4ff" stroke-width="0.61" opacity="0.42"/><path d="M29.3,244.3L15.7,256.5" stroke="#f4f4ff" stroke-width="0.87" opacity="0.77"/><path d="M202.9,134.1L220.5,139.6" stroke="#8c8cdc" stroke-width="0.70" opacity="0.44"/><path d="M220.5,139.6L238.1,145.2" stroke="#8c8cdc" stroke-width="1.00" opacity="0.80"/><path d="M222.7,87.6L238.0,78.5" stroke="#f4f4ff" stroke-width="0.70" opacity="0.34"/><path d="M238.0,78.5L253.2,69.4" stroke="#f4f4ff" stroke-width="1.00" opacity="0.62"/><path d="M225.9,275.7L238.0,306.0" stroke="#8c8cdc" stroke-width="0.72" opacity="0.40"/><path d="M238.0,306.0L250.1,336.3" stroke="#8c8cdc" stroke-width="1.03" opacity="0.73"/><path d="M246.3,0.3L265.0,-27.6" stroke="#f4f4ff" stroke-width="0.45" opacity="0.50"/><path d="M265.0,-27.6L283.8,-55.6" stroke="#f4f4ff" stroke-width="0.64" opacity="0.91"/><path d="M203.2,173.4L208.7,180.7" stroke="#f4f4ff" stroke-width="0.61" opacity="0.30"/><path d="M208.7,180.7L214.2,188.1" stroke="#f4f4ff" stroke-width="0.87" opacity="0.54"/><path d="M344.1,176.1L384.3,188.3" stroke="#8c8cdc" stroke-width="0.69" opacity="0.35"/><path d="M384.3,188.3L424.6,200.5" stroke="#8c8cdc" stroke-width="0.98" opacity="0.64"/><path d="M184.7,173.4L190.0,187.2" stroke="#8c8cdc" stroke-width="0.71" opacity="0.42"/><path d="M190.0,187.2L195.4,201.0" stroke="#8c8cdc" stroke-width="1.02" opacity="0.77"/><path d="M120.8,165.7L108.1,178.2" stroke="#8c8cdc" stroke-width="0.86" opacity="0.29"/><path d="M108.1,178.2L95.5,190.8" stroke="#8c8cdc" stroke-width="1.23" opacity="0.52"/><path d="M112.4,75.8L103.4,67.9" stroke="#f4f4ff" stroke-width="0.71" opacity="0.38"/><path d="M103.4,67.9L94.5,60.1" stroke="#f4f4ff" stroke-width="1.01" opacity="0.70"/><path d="M-32.5,68.9L-57.5,62.2" stroke="#f4f4ff" stroke-width="0.60" opacity="0.47"/><path d="M-57.5,62.2L-82.5,55.5" stroke="#f4f4ff" stroke-width="0.86" opacity="0.85"/><path d="M200.2,98.9L210.2,92.4" stroke="#f4f4ff" stroke-width="0.80" opacity="0.47"/><path d="M210.2,92.4L220.2,85.9" stroke="#f4f4ff" stroke-width="1.15" opacity="0.85"/><path d="M225.6,90.8L243.6,81.7" stroke="#f4f4ff" stroke-width="0.48" opacity="0.54"/><path d="M243.6,81.7L261.5,72.5" stroke="#f4f4ff" stroke-width="0.68" opacity="0.99"/><path d="M153.3,-68.5L151.4,-101.0" stroke="#f4f4ff" stroke-width="0.86" opacity="0.43"/><path d="M151.4,-101.0L149.4,-133.4" stroke="#f4f4ff" stroke-width="1.23" opacity="0.79"/><path d="M330.2,-15.0L361.9,-41.2" stroke="#f4f4ff" stroke-width="0.49" opacity="0.39"/><path d="M361.9,-41.2L393.6,-67.5" stroke="#f4f4ff" stroke-width="0.70" opacity="0.70"/><path d="M110.7,99.0L96.1,92.8" stroke="#f4f4ff" stroke-width="0.56" opacity="0.36"/><path d="M96.1,92.8L81.5,86.6" stroke="#f4f4ff" stroke-width="0.80" opacity="0.66"/><path d="M110.3,78.8L94.0,65.8" stroke="#f4f4ff" stroke-width="0.55" opacity="0.38"/><path d="M94.0,65.8L77.7,52.9" stroke="#f4f4ff" stroke-width="0.78" opacity="0.68"/><path d="M140.8,57.1L134.4,40.0" stroke="#f4f4ff" stroke-width="0.59" opacity="0.28"/><path d="M134.4,40.0L128.1,22.8" stroke="#f4f4ff" stroke-width="0.84" opacity="0.50"/><path d="M200.1,122.2L211.7,122.3" stroke="#f4f4ff" stroke-width="0.73" opacity="0.29"/><path d="M211.7,122.3L223.4,122.4" stroke="#f4f4ff" stroke-width="1.05" opacity="0.53"/><path d="M148.4,46.9L144.0,26.5" stroke="#f4f4ff" stroke-width="0.88" opacity="0.39"/><path d="M144.0,26.5L139.6,6.0" stroke="#f4f4ff" stroke-width="1.25" opacity="0.71"/><path d="M120.7,219.0L110.9,240.7" stroke="#f4f4ff" stroke-width="0.76" opacity="0.32"/><path d="M110.9,240.7L101.1,262.3" stroke="#f4f4ff" stroke-width="1.08" opacity="0.58"/><path d="M207.5,-82.6L214.4,-115.5" stroke="#8c8cdc" stroke-width="0.65" opacity="0.39"/><path d="M214.4,-115.5L221.2,-148.3" stroke="#8c8cdc" stroke-width="0.92" opacity="0.71"/><path d="M232.5,274.1L245.9,304.2" stroke="#f4f4ff" stroke-width="0.45" opacity="0.30"/><path d="M245.9,304.2L259.4,334.3" stroke="#f4f4ff" stroke-width="0.64" opacity="0.55"/><path d="M279.4,148.2L307.7,154.7" stroke="#f4f4ff" stroke-width="0.84" opacity="0.38"/><path d="M307.7,154.7L336.0,161.1" stroke="#f4f4ff" stroke-width="1.20" opacity="0.69"/><path d="M278.8,220.1L291.7,231.1" stroke="#8c8cdc" stroke-width="0.71" opacity="0.29"/><path d="M291.7,231.1L304.5,242.1" stroke="#8c8cdc" stroke-width="1.01" opacity="0.53"/><path d="M107.8,110.6L88.0,106.6" stroke="#8c8cdc" stroke-width="0.69" opacity="0.46"/><path d="M88.0,106.6L68.1,102.6" stroke="#8c8cdc" stroke-width="0.98" opacity="0.84"/><path d="M138.6,-70.4L134.0,-104.1" stroke="#f4f4ff" stroke-width="0.75" opacity="0.54"/><path d="M134.0,-104.1L129.4,-137.7" stroke="#f4f4ff" stroke-width="1.07" opacity="0.99"/><path d="M124.5,291.7L117.7,320.6" stroke="#8c8cdc" stroke-width="0.86" opacity="0.35"/><path d="M117.7,320.6L110.8,349.5" stroke="#8c8cdc" stroke-width="1.23" opacity="0.63"/><path d="M62.9,46.6L49.5,36.6" stroke="#8c8cdc" stroke-width="0.93" opacity="0.46"/><path d="M49.5,36.6L36.1,26.7" stroke="#8c8cdc" stroke-width="1.32" opacity="0.84"/><path d="M342.1,111.4L368.7,109.9" stroke="#f4f4ff" stroke-width="0.81" opacity="0.38"/><path d="M368.7,109.9L395.3,108.3" stroke="#f4f4ff" stroke-width="1.16" opacity="0.70"/><path d="M271.9,63.6L291.6,52.9" stroke="#8c8cdc" stroke-width="1.12" opacity="0.29"/><path d="M291.6,52.9L311.2,42.2" stroke="#8c8cdc" stroke-width="1.60" opacity="0.52"/><path d="M124.9,151.1L112.7,160.0" stroke="#8c8cdc" stroke-width="0.84" opacity="0.44"/><path d="M112.7,160.0L100.5,168.8" stroke="#8c8cdc" stroke-width="1.20" opacity="0.80"/><path d="M174.5,7.4L176.1,-11.5" stroke="#f4f4ff" stroke-width="0.52" opacity="0.28"/><path d="M176.1,-11.5L177.8,-30.4" stroke="#f4f4ff" stroke-width="0.75" opacity="0.51"/><path d="M256.6,41.8L267.3,32.4" stroke="#f4f4ff" stroke-width="0.79" opacity="0.29"/><path d="M267.3,32.4L278.1,23.0" stroke="#f4f4ff" stroke-width="1.12" opacity="0.53"/><path d="M131.4,56.5L122.8,39.6" stroke="#8c8cdc" stroke-width="1.09" opacity="0.37"/><path d="M122.8,39.6L114.2,22.7" stroke="#8c8cdc" stroke-width="1.55" opacity="0.67"/><path d="M273.2,259.9L282.4,271.6" stroke="#f4f4ff" stroke-width="0.65" opacity="0.52"/><path d="M282.4,271.6L291.6,283.3" stroke="#f4f4ff" stroke-width="0.93" opacity="0.95"/><path d="M182.9,52.2L186.8,37.5" stroke="#f4f4ff" stroke-width="0.57" opacity="0.53"/><path d="M186.8,37.5L190.6,22.8" stroke="#f4f4ff" stroke-width="0.81" opacity="0.96"/><path d="M203.6,267.7L211.7,298.1" stroke="#f4f4ff" stroke-width="0.72" opacity="0.36"/><path d="M211.7,298.1L219.9,328.5" stroke="#f4f4ff" stroke-width="1.03" opacity="0.66"/><path d="M132.5,-73.0L128.9,-94.8" stroke="#f4f4ff" stroke-width="0.49" opacity="0.43"/><path d="M128.9,-94.8L125.3,-116.7" stroke="#f4f4ff" stroke-width="0.70" opacity="0.77"/><path d="M346.1,63.1L374.7,53.8" stroke="#8c8cdc" stroke-width="0.71" opacity="0.48"/><path d="M374.7,53.8L403.3,44.5" stroke="#8c8cdc" stroke-width="1.02" opacity="0.87"/><path d="M170.3,26.6L171.6,4.0" stroke="#f4f4ff" stroke-width="0.65" opacity="0.31"/><path d="M171.6,4.0L173.0,-18.6" stroke="#f4f4ff" stroke-width="0.92" opacity="0.56"/><path d="M218.7,159.0L235.6,170.6" stroke="#f4f4ff" stroke-width="0.60" opacity="0.38"/><path d="M235.6,170.6L252.5,182.2" stroke="#f4f4ff" stroke-width="0.86" opacity="0.68"/><path d="M259.0,310.1L269.6,331.1" stroke="#f4f4ff" stroke-width="0.71" opacity="0.44"/><path d="M269.6,331.1L280.1,352.2" stroke="#f4f4ff" stroke-width="1.02" opacity="0.81"/><path d="M248,88L292.0,78.5" stroke="#e8e8ff" stroke-width="1.5" opacity="0.6"/><path d="M292.0,78.5L336,69" stroke="#e8e8ff" stroke-width="2.2"/><path d="M249,107L276.5,98.0" stroke="#ffffff" stroke-width="1.1" opacity="0.6"/><path d="M276.5,98.0L304,89" stroke="#ffffff" stroke-width="1.6"/><path d="M193,164L205.0,178.5" stroke="#ffffff" stroke-width="1.3" opacity="0.6"/><path d="M205.0,178.5L217,193" stroke="#ffffff" stroke-width="1.8"/><path d="M79,176L59.0,184.5" stroke="#f0f0ff" stroke-width="1.0" opacity="0.6"/><path d="M59.0,184.5L39,193" stroke="#f0f0ff" stroke-width="1.5"/><path d="M103,36L86.5,19.0" stroke="#9c9ce0" stroke-width="1.1" opacity="0.6"/><path d="M86.5,19.0L70,2" stroke="#9c9ce0" stroke-width="1.6"/><path d="M152,49L149.5,29.0" stroke="#ffffff" stroke-width="0.8" opacity="0.6"/><path d="M149.5,29.0L147,9" stroke="#ffffff" stroke-width="1.2"/><path d="M251,31L272.5,21.5" stroke="#c0c0f0" stroke-width="1.0" opacity="0.6"/><path d="M272.5,21.5L294,12" stroke="#c0c0f0" stroke-width="1.5"/><path d="M222,150L246.0,155.0" stroke="#ffffff" stroke-width="1.0" opacity="0.6"/><path d="M246.0,155.0L270,160" stroke="#ffffff" stroke-width="1.4"/><path d="M117,197L107.5,223.5" stroke="#8080d0" stroke-width="1.3" opacity="0.6"/><path d="M107.5,223.5L98,250" stroke="#8080d0" stroke-width="1.8"/><path d="M214,49L234.0,31.5" stroke="#ffffff" stroke-width="0.8" opacity="0.6"/><path d="M234.0,31.5L254,14" stroke="#ffffff" stroke-width="1.2"/><path d="M119,59L101.5,46.5" stroke="#ffffff" stroke-width="0.9" opacity="0.6"/><path d="M101.5,46.5L84,34" stroke="#ffffff" stroke-width="1.3"/><path d="M224,169L249.0,194.0" stroke="#c8c8f0" stroke-width="0.8" opacity="0.6"/><path d="M249.0,194.0L274,219" stroke="#c8c8f0" stroke-width="1.2"/><path fill="#c4d8f6" d="M159.0,89.0L162.5,89.0L161.9,94.0L154.5,94.0zM152.5,96.3L161.6,96.3L161.1,99.8L149.3,99.8zM146.7,102.8L160.7,102.8L160.3,106.4L143.4,106.4zM141.8,108.2L160.1,108.2L159.5,112.3L138.2,112.3zM137.1,113.5L159.4,113.5L158.8,118.3L132.8,118.3zM131.3,120.0L158.6,120.0L158.0,124.2L127.5,124.2zM125.9,126.0L157.8,126.0L157.3,130.2L122.2,130.2zM114.7,138.5L156.2,138.5L155.3,145.7L108.3,145.7z"/><path fill="#1d4aa6" d="M113,131.4L151,131.4L150,137.3L107,137.3z"/><text x="157" y="137.3" font-size="33" font-weight="bold" font-style="italic" font-family="Liberation Sans" fill="#1d48a8" stroke="#1d48a8" stroke-width="1.2" textLength="52" lengthAdjust="spacingAndGlyphs">NICE</text></svg>
<div class="a" style="left:775px;top:332.5px;width:349px;height:261px;background:#ececec;border-radius:6px 6px 0 0"></div>
<div class="a" style="left:775px;top:354.5px;width:349px;height:1px;background:#d6d6d6;"></div>
<div class="a" style="left:775px;top:355.5px;width:349px;height:17.5px;background:#ececec;"></div>
<div class="a" style="left:775px;top:373px;width:349px;height:221px;background:#ffffff;"></div>
<div class="a" style="left:1116px;top:373px;width:8px;height:221px;background:#f3f3f3;"></div>
<div class="a" style="left:1117px;top:377px;width:5px;height:212px;background:#d2d2d2;border-radius:2px"></div>
<svg class="a" style="left:1063px;top:339px;" width="58" height="10" viewBox="0 0 58 10"><path d="M3,8 h5" stroke="#666" stroke-width="1.1"/><rect x="25.5" y="3" width="4.5" height="4.5" fill="none" stroke="#666" stroke-width="1.1"/><path d="M47.5,2.5 l5,5 M52.5,2.5 l-5,5" stroke="#666" stroke-width="1.1"/></svg>
<div class="a" style="left:965.5px;top:467px;width:7.1px;height:11px;background:transparent;border:1px solid #333"></div>
<div class="a" style="left:0px;top:611.5px;width:1128px;height:18.5px;background:#e9e9e8;"></div>
<div class="a" style="left:0px;top:611.5px;width:1128px;height:1px;background:#d0d0d0;"></div>
<div class="a" style="left:0px;top:611px;width:4px;height:19px;background:#1b2a45;"></div>
<div class="a" style="left:10px;top:617px;width:12.4px;height:11px;background:#2b2b2b;border:1px solid #888"></div>
<svg class="a" style="left:12px;top:619px;" width="6" height="5" viewBox="0 0 6 5"><path d="M0.5,0.5 l2,2 l-2,2" stroke="#ddd" stroke-width="0.8" fill="none"/></svg>
<div class="a" style="left:171.5px;top:613px;width:1px;height:17px;background:#cfcfcf;"></div>
<svg class="a" style="left:179.5px;top:617px;" width="14" height="11" viewBox="0 0 14 11"><path d="M0,11 L3,0 h3 L3,11 z" fill="#d02020"/><path d="M4.5,11 L7.5,0 h3 L7.5,11 z" fill="#20a040"/><path d="M9,11 L12,0 h2 L11,11 z" fill="#2050d0"/></svg>
<div class="a" style="left:343px;top:612.5px;width:168px;height:17.5px;background:#dcdcdc;border:1px solid #c4c4c4;border-bottom:none"></div>
<div class="a" style="left:350.3px;top:617.5px;width:10.8px;height:10.5px;background:#fafafa;border:1px solid #ddd"></div>
<div class="a" style="left:518.5px;top:617px;width:12.2px;height:11px;background:#2b2b2b;border:1px solid #888"></div>
<div class="a" style="left:680.5px;top:613px;width:1px;height:17px;background:#cfcfcf;"></div>
<div class="a" style="left:1098px;top:612.5px;width:30px;height:17.5px;background:#dedede;border-left:1px solid #cfcfcf"></div>
<svg class="a" style="left:0;top:0" width="1128" height="630" viewBox="0 0 1128 630"><text x="929.38" y="15.70" font-size="10.29" font-family="Liberation Sans" font-weight="normal" fill="#3c3c3c" textLength="184.23" lengthAdjust="spacingAndGlyphs">ip-172-31-42-75.eu-west-1.compute.internal</text><text x="22.90" y="40.40" font-size="10.0" font-family="Liberation Sans" font-weight="normal" fill="#2e3436" textLength="50.00" lengthAdjust="spacingAndGlyphs">Applications</text><text x="86.00" y="40.40" font-size="10.0" font-family="Liberation Sans" font-weight="normal" fill="#2e3436" textLength="27.10" lengthAdjust="spacingAndGlyphs">Places</text><text x="127.90" y="40.40" font-size="10.0" font-family="Liberation Sans" font-weight="normal" fill="#2e3436" textLength="130.00" lengthAdjust="spacingAndGlyphs">NICE DCV - Test GL Application</text><text x="1020.42" y="40.20" font-size="9.71" font-family="Liberation Sans" font-weight="normal" fill="#2e3436" textLength="41.17" lengthAdjust="spacingAndGlyphs">Tue 12:59</text><text x="356.37" y="60.80" font-size="8.84" font-family="Liberation Sans" font-weight="normal" fill="#8b8b8b" textLength="64.66" lengthAdjust="spacingAndGlyphs">ParaView 5.8.0</text><text x="9.75" y="79.60" font-size="9.13" font-family="Liberation Sans" font-weight="normal" fill="#3a3a3a" textLength="13.90" lengthAdjust="spacingAndGlyphs">File</text><text x="32.05" y="79.60" font-size="9.13" font-family="Liberation Sans" font-weight="normal" fill="#3a3a3a" textLength="15.50" lengthAdjust="spacingAndGlyphs">Edit</text><text x="56.05" y="79.60" font-size="9.13" font-family="Liberation Sans" font-weight="normal" fill="#3a3a3a" textLength="19.50" lengthAdjust="spacingAndGlyphs">View</text><text x="83.75" y="79.60" font-size="9.13" font-family="Liberation Sans" font-weight="normal" fill="#3a3a3a" textLength="31.20" lengthAdjust="spacingAndGlyphs">Sources</text><text x="123.35" y="79.60" font-size="9.13" font-family="Liberation Sans" font-weight="normal" fill="#3a3a3a" textLength="24.50" lengthAdjust="spacingAndGlyphs">Filters</text><text x="156.25" y="79.60" font-size="9.13" font-family="Liberation Sans" font-weight="normal" fill="#3a3a3a" textLength="20.90" lengthAdjust="spacingAndGlyphs">Tools</text><text x="185.35" y="79.60" font-size="9.13" font-family="Liberation Sans" font-weight="normal" fill="#3a3a3a" textLength="32.90" lengthAdjust="spacingAndGlyphs">Catalyst</text><text x="226.95" y="79.60" font-size="9.13" font-family="Liberation Sans" font-weight="normal" fill="#3a3a3a" textLength="27.60" lengthAdjust="spacingAndGlyphs">Macros</text><text x="262.95" y="79.60" font-size="9.13" font-family="Liberation Sans" font-weight="normal" fill="#3a3a3a" textLength="18.60" lengthAdjust="spacingAndGlyphs">Help</text><text x="373.07" y="99.00" font-size="10.43" font-family="Liberation Sans" font-weight="normal" fill="#3a3a3a" textLength="21.75" lengthAdjust="spacingAndGlyphs">Time:</text><text x="399.17" y="99.00" font-size="10.43" font-family="Liberation Sans" font-weight="normal" fill="#3a3a3a" textLength="10.15" lengthAdjust="spacingAndGlyphs">60</text><text x="428.97" y="99.00" font-size="10.43" font-family="Liberation Sans" font-weight="normal" fill="#3a3a3a" textLength="10.65" lengthAdjust="spacingAndGlyphs">59</text><text x="456.87" y="99.00" font-size="10.43" font-family="Liberation Sans" font-weight="normal" fill="#3a3a3a" textLength="44.65" lengthAdjust="spacingAndGlyphs">(max is 59)</text><text x="170.92" y="123.50" font-size="9.71" font-family="Liberation Sans" font-weight="normal" fill="#3a3a3a" textLength="6.67" lengthAdjust="spacingAndGlyphs">U</text><text x="280.42" y="123.50" font-size="9.71" font-family="Liberation Sans" font-weight="normal" fill="#3a3a3a" textLength="6.17" lengthAdjust="spacingAndGlyphs">Y</text><text x="341.92" y="123.50" font-size="9.71" font-family="Liberation Sans" font-weight="normal" fill="#3a3a3a" textLength="30.67" lengthAdjust="spacingAndGlyphs">Surface</text><text x="753.55" y="121.50" font-size="7.54" font-family="Liberation Sans" font-weight="bold" fill="#111" textLength="7.90" lengthAdjust="spacingAndGlyphs">»</text><text x="5.69" y="166.80" font-size="8.55" font-family="Liberation Sans" font-weight="normal" fill="#3a3a3a" textLength="64.83" lengthAdjust="spacingAndGlyphs">Pipeline Browser</text><text x="32.70" y="182.00" font-size="10.0" font-family="Liberation Sans" font-weight="normal" fill="#3a3a3a" textLength="26.80" lengthAdjust="spacingAndGlyphs">builtin:</text><text x="32.22" y="196.50" font-size="9.71" font-family="Liberation Sans" font-weight="bold" fill="#ffffff" textLength="49.07" lengthAdjust="spacingAndGlyphs">controlDict</text><text x="10.98" y="319.30" font-size="8.7" font-family="Liberation Sans" font-weight="normal" fill="#3a3a3a" textLength="40.04" lengthAdjust="spacingAndGlyphs">Properties</text><text x="65.98" y="319.80" font-size="8.7" font-family="Liberation Sans" font-weight="normal" fill="#3a3a3a" textLength="45.34" lengthAdjust="spacingAndGlyphs">Information</text><text x="5.64" y="334.30" font-size="9.28" font-family="Liberation Sans" font-weight="normal" fill="#3a3a3a" textLength="40.11" lengthAdjust="spacingAndGlyphs">Properties</text><text x="28.78" y="353.90" font-size="8.7" font-family="Liberation Sans" font-weight="normal" fill="#1f3a1f" textLength="22.74" lengthAdjust="spacingAndGlyphs">Apply</text><text x="81.08" y="353.90" font-size="8.7" font-family="Liberation Sans" font-weight="normal" fill="#3a3a3a" textLength="22.64" lengthAdjust="spacingAndGlyphs">Reset</text><text x="131.48" y="353.90" font-size="8.7" font-family="Liberation Sans" font-weight="normal" fill="#3a3a3a" textLength="26.44" lengthAdjust="spacingAndGlyphs">Delete</text><text x="171.83" y="354.00" font-size="11.16" font-family="Liberation Sans" font-weight="bold" fill="#5aa040" textLength="7.84" lengthAdjust="spacingAndGlyphs">?</text><text x="10.97" y="372.40" font-size="8.84" font-family="Liberation Sans" font-weight="normal" fill="#a8a8a8" textLength="123.96" lengthAdjust="spacingAndGlyphs">Search ... (use Esc to clear text)</text><text x="23.49" y="387.20" font-size="8.55" font-family="Liberation Sans" font-weight="normal" fill="#3a3a3a" textLength="71.03" lengthAdjust="spacingAndGlyphs">Lagrangian Arrays</text><text x="21.05" y="415.80" font-size="9.13" font-family="Liberation Sans" font-weight="normal" fill="#3a3a3a" textLength="45.10" lengthAdjust="spacingAndGlyphs">Read zones</text><text x="29.44" y="435.30" font-size="9.28" font-family="Liberation Sans" font-weight="bold" fill="#2c2c2c" textLength="87.11" lengthAdjust="spacingAndGlyphs">Display (Unstructur</text><text x="8.65" y="451.80" font-size="9.13" font-family="Liberation Sans" font-weight="normal" fill="#3a3a3a" textLength="59.90" lengthAdjust="spacingAndGlyphs">Representation</text><text x="86.35" y="454.00" font-size="9.13" font-family="Liberation Sans" font-weight="normal" fill="#3a3a3a" textLength="30.20" lengthAdjust="spacingAndGlyphs">Surface</text><text x="8.64" y="471.30" font-size="9.28" font-family="Liberation Sans" font-weight="bold" fill="#2c2c2c" textLength="37.11" lengthAdjust="spacingAndGlyphs">Coloring</text><text x="24.45" y="489.20" font-size="9.13" font-family="Liberation Sans" font-weight="normal" fill="#3a3a3a" textLength="7.10" lengthAdjust="spacingAndGlyphs">U</text><text x="134.75" y="489.20" font-size="9.13" font-family="Liberation Sans" font-weight="normal" fill="#3a3a3a" textLength="5.60" lengthAdjust="spacingAndGlyphs">Y</text><text x="32.14" y="507.20" font-size="9.28" font-family="Liberation Sans" font-weight="normal" fill="#3a3a3a" textLength="15.71" lengthAdjust="spacingAndGlyphs">Edit</text><text x="8.95" y="524.10" font-size="9.13" font-family="Liberation Sans" font-weight="bold" fill="#2c2c2c" textLength="31.10" lengthAdjust="spacingAndGlyphs">Styling</text><text x="8.97" y="537.60" font-size="8.84" font-family="Liberation Sans" font-weight="normal" fill="#3a3a3a" textLength="30.36" lengthAdjust="spacingAndGlyphs">Opacity</text><text x="133.95" y="541.20" font-size="9.13" font-family="Liberation Sans" font-weight="normal" fill="#3a3a3a" textLength="4.10" lengthAdjust="spacingAndGlyphs">1</text><text x="8.95" y="558.00" font-size="9.13" font-family="Liberation Sans" font-weight="bold" fill="#2c2c2c" textLength="36.20" lengthAdjust="spacingAndGlyphs">Lighting</text><text x="8.95" y="571.90" font-size="9.13" font-family="Liberation Sans" font-weight="normal" fill="#3a3a3a" textLength="34.00" lengthAdjust="spacingAndGlyphs">Specular</text><text x="133.95" y="575.40" font-size="9.13" font-family="Liberation Sans" font-weight="normal" fill="#3a3a3a" textLength="6.10" lengthAdjust="spacingAndGlyphs">0</text><text x="210.49" y="169.60" font-size="8.55" font-family="Liberation Sans" font-weight="normal" fill="#3a3a3a" textLength="40.03" lengthAdjust="spacingAndGlyphs">Layout #1</text><text x="256.30" y="185.00" font-size="8.26" font-family="Liberation Sans" font-weight="normal" fill="#555" textLength="10.79" lengthAdjust="spacingAndGlyphs">3D</text><text x="639.56" y="186.00" font-size="8.99" font-family="Liberation Sans" font-weight="bold" fill="#111" textLength="58.68" lengthAdjust="spacingAndGlyphs">RenderView1</text><rect x="640.10" y="187.00" width="57.60" height="1" fill="#111"/><text x="715.78" y="453.00" font-size="10.29" font-family="Liberation Sans" font-weight="normal" fill="#e6e6e6" textLength="38.83" lengthAdjust="spacingAndGlyphs">4.0e+00</text><text x="715.78" y="583.00" font-size="10.29" font-family="Liberation Sans" font-weight="normal" fill="#e6e6e6" textLength="38.83" lengthAdjust="spacingAndGlyphs">-4.4e-02</text><text x="715.78" y="484.40" font-size="10.29" font-family="Liberation Sans" font-weight="normal" fill="#e6e6e6" textLength="6.63" lengthAdjust="spacingAndGlyphs">3</text><text x="715.78" y="517.30" font-size="10.29" font-family="Liberation Sans" font-weight="normal" fill="#e6e6e6" textLength="6.63" lengthAdjust="spacingAndGlyphs">2</text><text x="715.78" y="550.10" font-size="10.29" font-family="Liberation Sans" font-weight="normal" fill="#e6e6e6" textLength="6.33" lengthAdjust="spacingAndGlyphs">1</text><text x="883.77" y="62.00" font-size="10.43" font-family="Liberation Sans" font-weight="normal" fill="#2e3436" textLength="138.45" lengthAdjust="spacingAndGlyphs">NICE DCV - Test GL Application</text><text x="873.79" y="347.00" font-size="10.14" font-family="Liberation Sans" font-weight="normal" fill="#2e3436" textLength="152.02" lengthAdjust="spacingAndGlyphs">user001@ip-172-31-42-75:~/elbow</text><text x="779.57" y="368.00" font-size="10.43" font-family="Liberation Sans" font-weight="normal" fill="#8c8c8c" textLength="15.55" lengthAdjust="spacingAndGlyphs">File</text><text x="804.87" y="368.00" font-size="10.43" font-family="Liberation Sans" font-weight="normal" fill="#8c8c8c" textLength="15.95" lengthAdjust="spacingAndGlyphs">Edit</text><text x="830.37" y="368.00" font-size="10.43" font-family="Liberation Sans" font-weight="normal" fill="#8c8c8c" textLength="20.95" lengthAdjust="spacingAndGlyphs">View</text><text x="860.57" y="368.00" font-size="10.43" font-family="Liberation Sans" font-weight="normal" fill="#8c8c8c" textLength="28.85" lengthAdjust="spacingAndGlyphs">Search</text><text x="899.37" y="368.00" font-size="10.43" font-family="Liberation Sans" font-weight="normal" fill="#8c8c8c" textLength="35.25" lengthAdjust="spacingAndGlyphs">Terminal</text><text x="943.87" y="368.00" font-size="10.43" font-family="Liberation Sans" font-weight="normal" fill="#8c8c8c" textLength="21.05" lengthAdjust="spacingAndGlyphs">Help</text><text x="776.93" y="383.20" font-size="9.39" font-family="Liberation Mono" font-weight="normal" fill="#6e6e6e" textLength="211.98" lengthAdjust="spacingAndGlyphs">[user001@ip-172-31-42-75 ~]$ cd elbow</text><text x="776.93" y="394.70" font-size="9.39" font-family="Liberation Mono" font-weight="normal" fill="#6e6e6e" textLength="200.54" lengthAdjust="spacingAndGlyphs">[user001@ip-172-31-42-75 elbow]$ ls</text><text x="776.93" y="406.20" font-size="9.39" font-family="Liberation Mono" font-weight="normal" fill="#5898ea" textLength="6.06" lengthAdjust="spacingAndGlyphs">0</text><text x="799.81" y="406.20" font-size="9.39" font-family="Liberation Mono" font-weight="normal" fill="#5898ea" textLength="11.78" lengthAdjust="spacingAndGlyphs">14</text><text x="822.69" y="406.20" font-size="9.39" font-family="Liberation Mono" font-weight="normal" fill="#5898ea" textLength="6.06" lengthAdjust="spacingAndGlyphs">2</text><text x="845.57" y="406.20" font-size="9.39" font-family="Liberation Mono" font-weight="normal" fill="#5898ea" textLength="11.78" lengthAdjust="spacingAndGlyphs">25</text><text x="868.45" y="406.20" font-size="9.39" font-family="Liberation Mono" font-weight="normal" fill="#5898ea" textLength="11.78" lengthAdjust="spacingAndGlyphs">30</text><text x="891.33" y="406.20" font-size="9.39" font-family="Liberation Mono" font-weight="normal" fill="#5898ea" textLength="11.78" lengthAdjust="spacingAndGlyphs">36</text><text x="914.21" y="406.20" font-size="9.39" font-family="Liberation Mono" font-weight="normal" fill="#5898ea" textLength="11.78" lengthAdjust="spacingAndGlyphs">41</text><text x="937.09" y="406.20" font-size="9.39" font-family="Liberation Mono" font-weight="normal" fill="#5898ea" textLength="11.78" lengthAdjust="spacingAndGlyphs">47</text><text x="959.97" y="406.20" font-size="9.39" font-family="Liberation Mono" font-weight="normal" fill="#5898ea" textLength="11.78" lengthAdjust="spacingAndGlyphs">52</text><text x="982.85" y="406.20" font-size="9.39" font-family="Liberation Mono" font-weight="normal" fill="#5898ea" textLength="11.78" lengthAdjust="spacingAndGlyphs">58</text><text x="1005.73" y="406.20" font-size="9.39" font-family="Liberation Mono" font-weight="normal" fill="#5898ea" textLength="6.06" lengthAdjust="spacingAndGlyphs">9</text><text x="776.93" y="417.80" font-size="9.39" font-family="Liberation Mono" font-weight="normal" fill="#5898ea" textLength="6.06" lengthAdjust="spacingAndGlyphs">1</text><text x="799.81" y="417.80" font-size="9.39" font-family="Liberation Mono" font-weight="normal" fill="#5898ea" textLength="11.78" lengthAdjust="spacingAndGlyphs">15</text><text x="822.69" y="417.80" font-size="9.39" font-family="Liberation Mono" font-weight="normal" fill="#5898ea" textLength="11.78" lengthAdjust="spacingAndGlyphs">20</text><text x="845.57" y="417.80" font-size="9.39" font-family="Liberation Mono" font-weight="normal" fill="#5898ea" textLength="11.78" lengthAdjust="spacingAndGlyphs">26</text><text x="868.45" y="417.80" font-size="9.39" font-family="Liberation Mono" font-weight="normal" fill="#5898ea" textLength="11.78" lengthAdjust="spacingAndGlyphs">31</text><text x="891.33" y="417.80" font-size="9.39" font-family="Liberation Mono" font-weight="normal" fill="#5898ea" textLength="11.78" lengthAdjust="spacingAndGlyphs">37</text><text x="914.21" y="417.80" font-size="9.39" font-family="Liberation Mono" font-weight="normal" fill="#5898ea" textLength="11.78" lengthAdjust="spacingAndGlyphs">42</text><text x="937.09" y="417.80" font-size="9.39" font-family="Liberation Mono" font-weight="normal" fill="#5898ea" textLength="11.78" lengthAdjust="spacingAndGlyphs">48</text><text x="959.97" y="417.80" font-size="9.39" font-family="Liberation Mono" font-weight="normal" fill="#5898ea" textLength="11.78" lengthAdjust="spacingAndGlyphs">53</text><text x="982.85" y="417.80" font-size="9.39" font-family="Liberation Mono" font-weight="normal" fill="#5898ea" textLength="11.78" lengthAdjust="spacingAndGlyphs">59</text><text x="1005.73" y="417.80" font-size="9.39" font-family="Liberation Mono" font-weight="normal" fill="#6e6e6e" textLength="46.10" lengthAdjust="spacingAndGlyphs">Allclean</text><text x="776.93" y="429.30" font-size="9.39" font-family="Liberation Mono" font-weight="normal" fill="#5898ea" textLength="11.78" lengthAdjust="spacingAndGlyphs">10</text><text x="799.81" y="429.30" font-size="9.39" font-family="Liberation Mono" font-weight="normal" fill="#5898ea" textLength="11.78" lengthAdjust="spacingAndGlyphs">16</text><text x="822.69" y="429.30" font-size="9.39" font-family="Liberation Mono" font-weight="normal" fill="#5898ea" textLength="11.78" lengthAdjust="spacingAndGlyphs">21</text><text x="845.57" y="429.30" font-size="9.39" font-family="Liberation Mono" font-weight="normal" fill="#5898ea" textLength="11.78" lengthAdjust="spacingAndGlyphs">27</text><text x="868.45" y="429.30" font-size="9.39" font-family="Liberation Mono" font-weight="normal" fill="#5898ea" textLength="11.78" lengthAdjust="spacingAndGlyphs">32</text><text x="891.33" y="429.30" font-size="9.39" font-family="Liberation Mono" font-weight="normal" fill="#5898ea" textLength="11.78" lengthAdjust="spacingAndGlyphs">38</text><text x="914.21" y="429.30" font-size="9.39" font-family="Liberation Mono" font-weight="normal" fill="#5898ea" textLength="11.78" lengthAdjust="spacingAndGlyphs">43</text><text x="937.09" y="429.30" font-size="9.39" font-family="Liberation Mono" font-weight="normal" fill="#5898ea" textLength="11.78" lengthAdjust="spacingAndGlyphs">49</text><text x="959.97" y="429.30" font-size="9.39" font-family="Liberation Mono" font-weight="normal" fill="#5898ea" textLength="11.78" lengthAdjust="spacingAndGlyphs">54</text><text x="982.85" y="429.30" font-size="9.39" font-family="Liberation Mono" font-weight="normal" fill="#5898ea" textLength="6.06" lengthAdjust="spacingAndGlyphs">6</text><text x="1005.73" y="429.30" font-size="9.39" font-family="Liberation Mono" font-weight="normal" fill="#6e6e6e" textLength="34.66" lengthAdjust="spacingAndGlyphs">Allrun</text><text x="776.93" y="440.80" font-size="9.39" font-family="Liberation Mono" font-weight="normal" fill="#5898ea" textLength="11.78" lengthAdjust="spacingAndGlyphs">11</text><text x="799.81" y="440.80" font-size="9.39" font-family="Liberation Mono" font-weight="normal" fill="#5898ea" textLength="11.78" lengthAdjust="spacingAndGlyphs">17</text><text x="822.69" y="440.80" font-size="9.39" font-family="Liberation Mono" font-weight="normal" fill="#5898ea" textLength="11.78" lengthAdjust="spacingAndGlyphs">22</text><text x="845.57" y="440.80" font-size="9.39" font-family="Liberation Mono" font-weight="normal" fill="#5898ea" textLength="11.78" lengthAdjust="spacingAndGlyphs">28</text><text x="868.45" y="440.80" font-size="9.39" font-family="Liberation Mono" font-weight="normal" fill="#5898ea" textLength="11.78" lengthAdjust="spacingAndGlyphs">33</text><text x="891.33" y="440.80" font-size="9.39" font-family="Liberation Mono" font-weight="normal" fill="#5898ea" textLength="11.78" lengthAdjust="spacingAndGlyphs">39</text><text x="914.21" y="440.80" font-size="9.39" font-family="Liberation Mono" font-weight="normal" fill="#5898ea" textLength="11.78" lengthAdjust="spacingAndGlyphs">44</text><text x="937.09" y="440.80" font-size="9.39" font-family="Liberation Mono" font-weight="normal" fill="#5898ea" textLength="6.06" lengthAdjust="spacingAndGlyphs">5</text><text x="959.97" y="440.80" font-size="9.39" font-family="Liberation Mono" font-weight="normal" fill="#5898ea" textLength="11.78" lengthAdjust="spacingAndGlyphs">55</text><text x="982.85" y="440.80" font-size="9.39" font-family="Liberation Mono" font-weight="normal" fill="#5898ea" textLength="11.78" lengthAdjust="spacingAndGlyphs">60</text><text x="1005.73" y="440.80" font-size="9.39" font-family="Liberation Mono" font-weight="normal" fill="#5898ea" textLength="46.10" lengthAdjust="spacingAndGlyphs">constant</text><text x="776.93" y="452.30" font-size="9.39" font-family="Liberation Mono" font-weight="normal" fill="#5898ea" textLength="11.78" lengthAdjust="spacingAndGlyphs">12</text><text x="799.81" y="452.30" font-size="9.39" font-family="Liberation Mono" font-weight="normal" fill="#5898ea" textLength="11.78" lengthAdjust="spacingAndGlyphs">18</text><text x="822.69" y="452.30" font-size="9.39" font-family="Liberation Mono" font-weight="normal" fill="#5898ea" textLength="11.78" lengthAdjust="spacingAndGlyphs">23</text><text x="845.57" y="452.30" font-size="9.39" font-family="Liberation Mono" font-weight="normal" fill="#5898ea" textLength="11.78" lengthAdjust="spacingAndGlyphs">29</text><text x="868.45" y="452.30" font-size="9.39" font-family="Liberation Mono" font-weight="normal" fill="#5898ea" textLength="11.78" lengthAdjust="spacingAndGlyphs">34</text><text x="891.33" y="452.30" font-size="9.39" font-family="Liberation Mono" font-weight="normal" fill="#5898ea" textLength="6.06" lengthAdjust="spacingAndGlyphs">4</text><text x="914.21" y="452.30" font-size="9.39" font-family="Liberation Mono" font-weight="normal" fill="#5898ea" textLength="11.78" lengthAdjust="spacingAndGlyphs">45</text><text x="937.09" y="452.30" font-size="9.39" font-family="Liberation Mono" font-weight="normal" fill="#5898ea" textLength="11.78" lengthAdjust="spacingAndGlyphs">50</text><text x="959.97" y="452.30" font-size="9.39" font-family="Liberation Mono" font-weight="normal" fill="#5898ea" textLength="11.78" lengthAdjust="spacingAndGlyphs">56</text><text x="982.85" y="452.30" font-size="9.39" font-family="Liberation Mono" font-weight="normal" fill="#5898ea" textLength="6.06" lengthAdjust="spacingAndGlyphs">7</text><text x="1005.73" y="452.30" font-size="9.39" font-family="Liberation Mono" font-weight="normal" fill="#6e6e6e" textLength="51.82" lengthAdjust="spacingAndGlyphs">elbow.msh</text><text x="776.93" y="463.80" font-size="9.39" font-family="Liberation Mono" font-weight="normal" fill="#5898ea" textLength="11.78" lengthAdjust="spacingAndGlyphs">13</text><text x="799.81" y="463.80" font-size="9.39" font-family="Liberation Mono" font-weight="normal" fill="#5898ea" textLength="11.78" lengthAdjust="spacingAndGlyphs">19</text><text x="822.69" y="463.80" font-size="9.39" font-family="Liberation Mono" font-weight="normal" fill="#5898ea" textLength="11.78" lengthAdjust="spacingAndGlyphs">24</text><text x="845.57" y="463.80" font-size="9.39" font-family="Liberation Mono" font-weight="normal" fill="#5898ea" textLength="6.06" lengthAdjust="spacingAndGlyphs">3</text><text x="868.45" y="463.80" font-size="9.39" font-family="Liberation Mono" font-weight="normal" fill="#5898ea" textLength="11.78" lengthAdjust="spacingAndGlyphs">35</text><text x="891.33" y="463.80" font-size="9.39" font-family="Liberation Mono" font-weight="normal" fill="#5898ea" textLength="11.78" lengthAdjust="spacingAndGlyphs">40</text><text x="914.21" y="463.80" font-size="9.39" font-family="Liberation Mono" font-weight="normal" fill="#5898ea" textLength="11.78" lengthAdjust="spacingAndGlyphs">46</text><text x="937.09" y="463.80" font-size="9.39" font-family="Liberation Mono" font-weight="normal" fill="#5898ea" textLength="11.78" lengthAdjust="spacingAndGlyphs">51</text><text x="959.97" y="463.80" font-size="9.39" font-family="Liberation Mono" font-weight="normal" fill="#5898ea" textLength="11.78" lengthAdjust="spacingAndGlyphs">57</text><text x="982.85" y="463.80" font-size="9.39" font-family="Liberation Mono" font-weight="normal" fill="#5898ea" textLength="6.06" lengthAdjust="spacingAndGlyphs">8</text><text x="1005.73" y="463.80" font-size="9.39" font-family="Liberation Mono" font-weight="normal" fill="#5898ea" textLength="34.66" lengthAdjust="spacingAndGlyphs">system</text><text x="776.93" y="475.30" font-size="9.39" font-family="Liberation Mono" font-weight="normal" fill="#6e6e6e" textLength="183.38" lengthAdjust="spacingAndGlyphs">[user001@ip-172-31-42-75 elbow]$</text><text x="25.83" y="625.50" font-size="9.57" font-family="Liberation Sans" font-weight="normal" fill="#2e3436" textLength="112.95" lengthAdjust="spacingAndGlyphs">user001@ip-172-31-42-75:~</text><text x="195.73" y="625.50" font-size="9.57" font-family="Liberation Sans" font-weight="normal" fill="#2e3436" textLength="56.45" lengthAdjust="spacingAndGlyphs">ParaView 5.8.0</text><text x="364.83" y="625.50" font-size="9.57" font-family="Liberation Sans" font-weight="normal" fill="#2e3436" textLength="119.15" lengthAdjust="spacingAndGlyphs">NICE DCV - Test GL Application</text><text x="534.43" y="625.50" font-size="9.57" font-family="Liberation Sans" font-weight="normal" fill="#2e3436" textLength="138.75" lengthAdjust="spacingAndGlyphs">user001@ip-172-31-42-75:~/elbow</text><text x="1104.43" y="625.50" font-size="9.57" font-family="Liberation Sans" font-weight="normal" fill="#2e3436" textLength="18.15" lengthAdjust="spacingAndGlyphs">1 / 4</text></svg>
</body></html>
